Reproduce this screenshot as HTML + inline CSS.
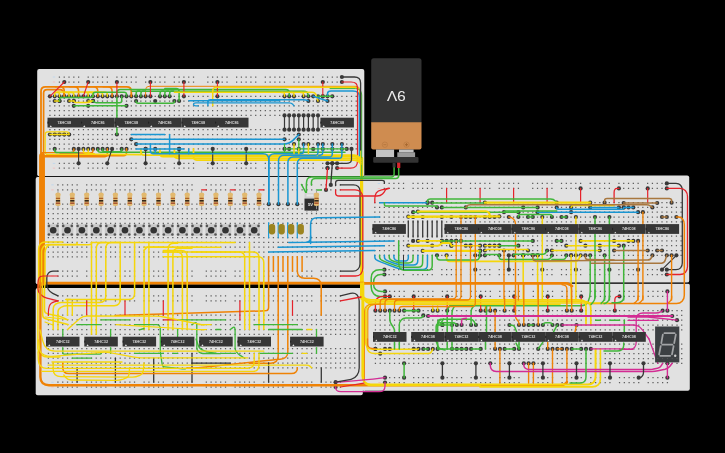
<!DOCTYPE html>
<html><head><meta charset="utf-8"><title>circuit</title>
<style>html,body{margin:0;padding:0;background:#000;}svg{display:block;font-family:"Liberation Sans",sans-serif;will-change:transform;}</style>
</head><body>
<svg width="725" height="453" viewBox="0 0 725 453">
<rect width="725" height="453" fill="#000"/>
<rect x="37.2" y="69.0" width="327.1" height="107.3" rx="2" fill="#e1e1e1"/>
<path d="M49.3,95.7h1.25v1.25h-1.25zM49.3,100.4h1.25v1.25h-1.25zM49.3,105.2h1.25v1.25h-1.25zM49.3,110.0h1.25v1.25h-1.25zM49.3,114.8h1.25v1.25h-1.25zM49.3,129.1h1.25v1.25h-1.25zM49.3,133.9h1.25v1.25h-1.25zM49.3,138.7h1.25v1.25h-1.25zM49.3,143.5h1.25v1.25h-1.25zM49.3,148.3h1.25v1.25h-1.25zM54.1,95.7h1.25v1.25h-1.25zM54.1,100.4h1.25v1.25h-1.25zM54.1,105.2h1.25v1.25h-1.25zM54.1,110.0h1.25v1.25h-1.25zM54.1,114.8h1.25v1.25h-1.25zM54.1,129.1h1.25v1.25h-1.25zM54.1,133.9h1.25v1.25h-1.25zM54.1,138.7h1.25v1.25h-1.25zM54.1,143.5h1.25v1.25h-1.25zM54.1,148.3h1.25v1.25h-1.25zM58.8,95.7h1.25v1.25h-1.25zM58.8,100.4h1.25v1.25h-1.25zM58.8,105.2h1.25v1.25h-1.25zM58.8,110.0h1.25v1.25h-1.25zM58.8,114.8h1.25v1.25h-1.25zM58.8,129.1h1.25v1.25h-1.25zM58.8,133.9h1.25v1.25h-1.25zM58.8,138.7h1.25v1.25h-1.25zM58.8,143.5h1.25v1.25h-1.25zM58.8,148.3h1.25v1.25h-1.25zM63.6,95.7h1.25v1.25h-1.25zM63.6,100.4h1.25v1.25h-1.25zM63.6,105.2h1.25v1.25h-1.25zM63.6,110.0h1.25v1.25h-1.25zM63.6,114.8h1.25v1.25h-1.25zM63.6,129.1h1.25v1.25h-1.25zM63.6,133.9h1.25v1.25h-1.25zM63.6,138.7h1.25v1.25h-1.25zM63.6,143.5h1.25v1.25h-1.25zM63.6,148.3h1.25v1.25h-1.25zM68.4,95.7h1.25v1.25h-1.25zM68.4,100.4h1.25v1.25h-1.25zM68.4,105.2h1.25v1.25h-1.25zM68.4,110.0h1.25v1.25h-1.25zM68.4,114.8h1.25v1.25h-1.25zM68.4,129.1h1.25v1.25h-1.25zM68.4,133.9h1.25v1.25h-1.25zM68.4,138.7h1.25v1.25h-1.25zM68.4,143.5h1.25v1.25h-1.25zM68.4,148.3h1.25v1.25h-1.25zM73.2,95.7h1.25v1.25h-1.25zM73.2,100.4h1.25v1.25h-1.25zM73.2,105.2h1.25v1.25h-1.25zM73.2,110.0h1.25v1.25h-1.25zM73.2,114.8h1.25v1.25h-1.25zM73.2,129.1h1.25v1.25h-1.25zM73.2,133.9h1.25v1.25h-1.25zM73.2,138.7h1.25v1.25h-1.25zM73.2,143.5h1.25v1.25h-1.25zM73.2,148.3h1.25v1.25h-1.25zM78.0,95.7h1.25v1.25h-1.25zM78.0,100.4h1.25v1.25h-1.25zM78.0,105.2h1.25v1.25h-1.25zM78.0,110.0h1.25v1.25h-1.25zM78.0,114.8h1.25v1.25h-1.25zM78.0,129.1h1.25v1.25h-1.25zM78.0,133.9h1.25v1.25h-1.25zM78.0,138.7h1.25v1.25h-1.25zM78.0,143.5h1.25v1.25h-1.25zM78.0,148.3h1.25v1.25h-1.25zM82.8,95.7h1.25v1.25h-1.25zM82.8,100.4h1.25v1.25h-1.25zM82.8,105.2h1.25v1.25h-1.25zM82.8,110.0h1.25v1.25h-1.25zM82.8,114.8h1.25v1.25h-1.25zM82.8,129.1h1.25v1.25h-1.25zM82.8,133.9h1.25v1.25h-1.25zM82.8,138.7h1.25v1.25h-1.25zM82.8,143.5h1.25v1.25h-1.25zM82.8,148.3h1.25v1.25h-1.25zM87.6,95.7h1.25v1.25h-1.25zM87.6,100.4h1.25v1.25h-1.25zM87.6,105.2h1.25v1.25h-1.25zM87.6,110.0h1.25v1.25h-1.25zM87.6,114.8h1.25v1.25h-1.25zM87.6,129.1h1.25v1.25h-1.25zM87.6,133.9h1.25v1.25h-1.25zM87.6,138.7h1.25v1.25h-1.25zM87.6,143.5h1.25v1.25h-1.25zM87.6,148.3h1.25v1.25h-1.25zM92.4,95.7h1.25v1.25h-1.25zM92.4,100.4h1.25v1.25h-1.25zM92.4,105.2h1.25v1.25h-1.25zM92.4,110.0h1.25v1.25h-1.25zM92.4,114.8h1.25v1.25h-1.25zM92.4,129.1h1.25v1.25h-1.25zM92.4,133.9h1.25v1.25h-1.25zM92.4,138.7h1.25v1.25h-1.25zM92.4,143.5h1.25v1.25h-1.25zM92.4,148.3h1.25v1.25h-1.25zM97.1,95.7h1.25v1.25h-1.25zM97.1,100.4h1.25v1.25h-1.25zM97.1,105.2h1.25v1.25h-1.25zM97.1,110.0h1.25v1.25h-1.25zM97.1,114.8h1.25v1.25h-1.25zM97.1,129.1h1.25v1.25h-1.25zM97.1,133.9h1.25v1.25h-1.25zM97.1,138.7h1.25v1.25h-1.25zM97.1,143.5h1.25v1.25h-1.25zM97.1,148.3h1.25v1.25h-1.25zM101.9,95.7h1.25v1.25h-1.25zM101.9,100.4h1.25v1.25h-1.25zM101.9,105.2h1.25v1.25h-1.25zM101.9,110.0h1.25v1.25h-1.25zM101.9,114.8h1.25v1.25h-1.25zM101.9,129.1h1.25v1.25h-1.25zM101.9,133.9h1.25v1.25h-1.25zM101.9,138.7h1.25v1.25h-1.25zM101.9,143.5h1.25v1.25h-1.25zM101.9,148.3h1.25v1.25h-1.25zM106.7,95.7h1.25v1.25h-1.25zM106.7,100.4h1.25v1.25h-1.25zM106.7,105.2h1.25v1.25h-1.25zM106.7,110.0h1.25v1.25h-1.25zM106.7,114.8h1.25v1.25h-1.25zM106.7,129.1h1.25v1.25h-1.25zM106.7,133.9h1.25v1.25h-1.25zM106.7,138.7h1.25v1.25h-1.25zM106.7,143.5h1.25v1.25h-1.25zM106.7,148.3h1.25v1.25h-1.25zM111.5,95.7h1.25v1.25h-1.25zM111.5,100.4h1.25v1.25h-1.25zM111.5,105.2h1.25v1.25h-1.25zM111.5,110.0h1.25v1.25h-1.25zM111.5,114.8h1.25v1.25h-1.25zM111.5,129.1h1.25v1.25h-1.25zM111.5,133.9h1.25v1.25h-1.25zM111.5,138.7h1.25v1.25h-1.25zM111.5,143.5h1.25v1.25h-1.25zM111.5,148.3h1.25v1.25h-1.25zM116.3,95.7h1.25v1.25h-1.25zM116.3,100.4h1.25v1.25h-1.25zM116.3,105.2h1.25v1.25h-1.25zM116.3,110.0h1.25v1.25h-1.25zM116.3,114.8h1.25v1.25h-1.25zM116.3,129.1h1.25v1.25h-1.25zM116.3,133.9h1.25v1.25h-1.25zM116.3,138.7h1.25v1.25h-1.25zM116.3,143.5h1.25v1.25h-1.25zM116.3,148.3h1.25v1.25h-1.25zM121.1,95.7h1.25v1.25h-1.25zM121.1,100.4h1.25v1.25h-1.25zM121.1,105.2h1.25v1.25h-1.25zM121.1,110.0h1.25v1.25h-1.25zM121.1,114.8h1.25v1.25h-1.25zM121.1,129.1h1.25v1.25h-1.25zM121.1,133.9h1.25v1.25h-1.25zM121.1,138.7h1.25v1.25h-1.25zM121.1,143.5h1.25v1.25h-1.25zM121.1,148.3h1.25v1.25h-1.25zM125.9,95.7h1.25v1.25h-1.25zM125.9,100.4h1.25v1.25h-1.25zM125.9,105.2h1.25v1.25h-1.25zM125.9,110.0h1.25v1.25h-1.25zM125.9,114.8h1.25v1.25h-1.25zM125.9,129.1h1.25v1.25h-1.25zM125.9,133.9h1.25v1.25h-1.25zM125.9,138.7h1.25v1.25h-1.25zM125.9,143.5h1.25v1.25h-1.25zM125.9,148.3h1.25v1.25h-1.25zM130.7,95.7h1.25v1.25h-1.25zM130.7,100.4h1.25v1.25h-1.25zM130.7,105.2h1.25v1.25h-1.25zM130.7,110.0h1.25v1.25h-1.25zM130.7,114.8h1.25v1.25h-1.25zM130.7,129.1h1.25v1.25h-1.25zM130.7,133.9h1.25v1.25h-1.25zM130.7,138.7h1.25v1.25h-1.25zM130.7,143.5h1.25v1.25h-1.25zM130.7,148.3h1.25v1.25h-1.25zM135.4,95.7h1.25v1.25h-1.25zM135.4,100.4h1.25v1.25h-1.25zM135.4,105.2h1.25v1.25h-1.25zM135.4,110.0h1.25v1.25h-1.25zM135.4,114.8h1.25v1.25h-1.25zM135.4,129.1h1.25v1.25h-1.25zM135.4,133.9h1.25v1.25h-1.25zM135.4,138.7h1.25v1.25h-1.25zM135.4,143.5h1.25v1.25h-1.25zM135.4,148.3h1.25v1.25h-1.25zM140.2,95.7h1.25v1.25h-1.25zM140.2,100.4h1.25v1.25h-1.25zM140.2,105.2h1.25v1.25h-1.25zM140.2,110.0h1.25v1.25h-1.25zM140.2,114.8h1.25v1.25h-1.25zM140.2,129.1h1.25v1.25h-1.25zM140.2,133.9h1.25v1.25h-1.25zM140.2,138.7h1.25v1.25h-1.25zM140.2,143.5h1.25v1.25h-1.25zM140.2,148.3h1.25v1.25h-1.25zM145.0,95.7h1.25v1.25h-1.25zM145.0,100.4h1.25v1.25h-1.25zM145.0,105.2h1.25v1.25h-1.25zM145.0,110.0h1.25v1.25h-1.25zM145.0,114.8h1.25v1.25h-1.25zM145.0,129.1h1.25v1.25h-1.25zM145.0,133.9h1.25v1.25h-1.25zM145.0,138.7h1.25v1.25h-1.25zM145.0,143.5h1.25v1.25h-1.25zM145.0,148.3h1.25v1.25h-1.25zM149.8,95.7h1.25v1.25h-1.25zM149.8,100.4h1.25v1.25h-1.25zM149.8,105.2h1.25v1.25h-1.25zM149.8,110.0h1.25v1.25h-1.25zM149.8,114.8h1.25v1.25h-1.25zM149.8,129.1h1.25v1.25h-1.25zM149.8,133.9h1.25v1.25h-1.25zM149.8,138.7h1.25v1.25h-1.25zM149.8,143.5h1.25v1.25h-1.25zM149.8,148.3h1.25v1.25h-1.25zM154.6,95.7h1.25v1.25h-1.25zM154.6,100.4h1.25v1.25h-1.25zM154.6,105.2h1.25v1.25h-1.25zM154.6,110.0h1.25v1.25h-1.25zM154.6,114.8h1.25v1.25h-1.25zM154.6,129.1h1.25v1.25h-1.25zM154.6,133.9h1.25v1.25h-1.25zM154.6,138.7h1.25v1.25h-1.25zM154.6,143.5h1.25v1.25h-1.25zM154.6,148.3h1.25v1.25h-1.25zM159.4,95.7h1.25v1.25h-1.25zM159.4,100.4h1.25v1.25h-1.25zM159.4,105.2h1.25v1.25h-1.25zM159.4,110.0h1.25v1.25h-1.25zM159.4,114.8h1.25v1.25h-1.25zM159.4,129.1h1.25v1.25h-1.25zM159.4,133.9h1.25v1.25h-1.25zM159.4,138.7h1.25v1.25h-1.25zM159.4,143.5h1.25v1.25h-1.25zM159.4,148.3h1.25v1.25h-1.25zM164.2,95.7h1.25v1.25h-1.25zM164.2,100.4h1.25v1.25h-1.25zM164.2,105.2h1.25v1.25h-1.25zM164.2,110.0h1.25v1.25h-1.25zM164.2,114.8h1.25v1.25h-1.25zM164.2,129.1h1.25v1.25h-1.25zM164.2,133.9h1.25v1.25h-1.25zM164.2,138.7h1.25v1.25h-1.25zM164.2,143.5h1.25v1.25h-1.25zM164.2,148.3h1.25v1.25h-1.25zM168.9,95.7h1.25v1.25h-1.25zM168.9,100.4h1.25v1.25h-1.25zM168.9,105.2h1.25v1.25h-1.25zM168.9,110.0h1.25v1.25h-1.25zM168.9,114.8h1.25v1.25h-1.25zM168.9,129.1h1.25v1.25h-1.25zM168.9,133.9h1.25v1.25h-1.25zM168.9,138.7h1.25v1.25h-1.25zM168.9,143.5h1.25v1.25h-1.25zM168.9,148.3h1.25v1.25h-1.25zM173.7,95.7h1.25v1.25h-1.25zM173.7,100.4h1.25v1.25h-1.25zM173.7,105.2h1.25v1.25h-1.25zM173.7,110.0h1.25v1.25h-1.25zM173.7,114.8h1.25v1.25h-1.25zM173.7,129.1h1.25v1.25h-1.25zM173.7,133.9h1.25v1.25h-1.25zM173.7,138.7h1.25v1.25h-1.25zM173.7,143.5h1.25v1.25h-1.25zM173.7,148.3h1.25v1.25h-1.25zM178.5,95.7h1.25v1.25h-1.25zM178.5,100.4h1.25v1.25h-1.25zM178.5,105.2h1.25v1.25h-1.25zM178.5,110.0h1.25v1.25h-1.25zM178.5,114.8h1.25v1.25h-1.25zM178.5,129.1h1.25v1.25h-1.25zM178.5,133.9h1.25v1.25h-1.25zM178.5,138.7h1.25v1.25h-1.25zM178.5,143.5h1.25v1.25h-1.25zM178.5,148.3h1.25v1.25h-1.25zM183.3,95.7h1.25v1.25h-1.25zM183.3,100.4h1.25v1.25h-1.25zM183.3,105.2h1.25v1.25h-1.25zM183.3,110.0h1.25v1.25h-1.25zM183.3,114.8h1.25v1.25h-1.25zM183.3,129.1h1.25v1.25h-1.25zM183.3,133.9h1.25v1.25h-1.25zM183.3,138.7h1.25v1.25h-1.25zM183.3,143.5h1.25v1.25h-1.25zM183.3,148.3h1.25v1.25h-1.25zM188.1,95.7h1.25v1.25h-1.25zM188.1,100.4h1.25v1.25h-1.25zM188.1,105.2h1.25v1.25h-1.25zM188.1,110.0h1.25v1.25h-1.25zM188.1,114.8h1.25v1.25h-1.25zM188.1,129.1h1.25v1.25h-1.25zM188.1,133.9h1.25v1.25h-1.25zM188.1,138.7h1.25v1.25h-1.25zM188.1,143.5h1.25v1.25h-1.25zM188.1,148.3h1.25v1.25h-1.25zM192.9,95.7h1.25v1.25h-1.25zM192.9,100.4h1.25v1.25h-1.25zM192.9,105.2h1.25v1.25h-1.25zM192.9,110.0h1.25v1.25h-1.25zM192.9,114.8h1.25v1.25h-1.25zM192.9,129.1h1.25v1.25h-1.25zM192.9,133.9h1.25v1.25h-1.25zM192.9,138.7h1.25v1.25h-1.25zM192.9,143.5h1.25v1.25h-1.25zM192.9,148.3h1.25v1.25h-1.25zM197.7,95.7h1.25v1.25h-1.25zM197.7,100.4h1.25v1.25h-1.25zM197.7,105.2h1.25v1.25h-1.25zM197.7,110.0h1.25v1.25h-1.25zM197.7,114.8h1.25v1.25h-1.25zM197.7,129.1h1.25v1.25h-1.25zM197.7,133.9h1.25v1.25h-1.25zM197.7,138.7h1.25v1.25h-1.25zM197.7,143.5h1.25v1.25h-1.25zM197.7,148.3h1.25v1.25h-1.25zM202.5,95.7h1.25v1.25h-1.25zM202.5,100.4h1.25v1.25h-1.25zM202.5,105.2h1.25v1.25h-1.25zM202.5,110.0h1.25v1.25h-1.25zM202.5,114.8h1.25v1.25h-1.25zM202.5,129.1h1.25v1.25h-1.25zM202.5,133.9h1.25v1.25h-1.25zM202.5,138.7h1.25v1.25h-1.25zM202.5,143.5h1.25v1.25h-1.25zM202.5,148.3h1.25v1.25h-1.25zM207.2,95.7h1.25v1.25h-1.25zM207.2,100.4h1.25v1.25h-1.25zM207.2,105.2h1.25v1.25h-1.25zM207.2,110.0h1.25v1.25h-1.25zM207.2,114.8h1.25v1.25h-1.25zM207.2,129.1h1.25v1.25h-1.25zM207.2,133.9h1.25v1.25h-1.25zM207.2,138.7h1.25v1.25h-1.25zM207.2,143.5h1.25v1.25h-1.25zM207.2,148.3h1.25v1.25h-1.25zM212.0,95.7h1.25v1.25h-1.25zM212.0,100.4h1.25v1.25h-1.25zM212.0,105.2h1.25v1.25h-1.25zM212.0,110.0h1.25v1.25h-1.25zM212.0,114.8h1.25v1.25h-1.25zM212.0,129.1h1.25v1.25h-1.25zM212.0,133.9h1.25v1.25h-1.25zM212.0,138.7h1.25v1.25h-1.25zM212.0,143.5h1.25v1.25h-1.25zM212.0,148.3h1.25v1.25h-1.25zM216.8,95.7h1.25v1.25h-1.25zM216.8,100.4h1.25v1.25h-1.25zM216.8,105.2h1.25v1.25h-1.25zM216.8,110.0h1.25v1.25h-1.25zM216.8,114.8h1.25v1.25h-1.25zM216.8,129.1h1.25v1.25h-1.25zM216.8,133.9h1.25v1.25h-1.25zM216.8,138.7h1.25v1.25h-1.25zM216.8,143.5h1.25v1.25h-1.25zM216.8,148.3h1.25v1.25h-1.25zM221.6,95.7h1.25v1.25h-1.25zM221.6,100.4h1.25v1.25h-1.25zM221.6,105.2h1.25v1.25h-1.25zM221.6,110.0h1.25v1.25h-1.25zM221.6,114.8h1.25v1.25h-1.25zM221.6,129.1h1.25v1.25h-1.25zM221.6,133.9h1.25v1.25h-1.25zM221.6,138.7h1.25v1.25h-1.25zM221.6,143.5h1.25v1.25h-1.25zM221.6,148.3h1.25v1.25h-1.25zM226.4,95.7h1.25v1.25h-1.25zM226.4,100.4h1.25v1.25h-1.25zM226.4,105.2h1.25v1.25h-1.25zM226.4,110.0h1.25v1.25h-1.25zM226.4,114.8h1.25v1.25h-1.25zM226.4,129.1h1.25v1.25h-1.25zM226.4,133.9h1.25v1.25h-1.25zM226.4,138.7h1.25v1.25h-1.25zM226.4,143.5h1.25v1.25h-1.25zM226.4,148.3h1.25v1.25h-1.25zM231.2,95.7h1.25v1.25h-1.25zM231.2,100.4h1.25v1.25h-1.25zM231.2,105.2h1.25v1.25h-1.25zM231.2,110.0h1.25v1.25h-1.25zM231.2,114.8h1.25v1.25h-1.25zM231.2,129.1h1.25v1.25h-1.25zM231.2,133.9h1.25v1.25h-1.25zM231.2,138.7h1.25v1.25h-1.25zM231.2,143.5h1.25v1.25h-1.25zM231.2,148.3h1.25v1.25h-1.25zM236.0,95.7h1.25v1.25h-1.25zM236.0,100.4h1.25v1.25h-1.25zM236.0,105.2h1.25v1.25h-1.25zM236.0,110.0h1.25v1.25h-1.25zM236.0,114.8h1.25v1.25h-1.25zM236.0,129.1h1.25v1.25h-1.25zM236.0,133.9h1.25v1.25h-1.25zM236.0,138.7h1.25v1.25h-1.25zM236.0,143.5h1.25v1.25h-1.25zM236.0,148.3h1.25v1.25h-1.25zM240.8,95.7h1.25v1.25h-1.25zM240.8,100.4h1.25v1.25h-1.25zM240.8,105.2h1.25v1.25h-1.25zM240.8,110.0h1.25v1.25h-1.25zM240.8,114.8h1.25v1.25h-1.25zM240.8,129.1h1.25v1.25h-1.25zM240.8,133.9h1.25v1.25h-1.25zM240.8,138.7h1.25v1.25h-1.25zM240.8,143.5h1.25v1.25h-1.25zM240.8,148.3h1.25v1.25h-1.25zM245.5,95.7h1.25v1.25h-1.25zM245.5,100.4h1.25v1.25h-1.25zM245.5,105.2h1.25v1.25h-1.25zM245.5,110.0h1.25v1.25h-1.25zM245.5,114.8h1.25v1.25h-1.25zM245.5,129.1h1.25v1.25h-1.25zM245.5,133.9h1.25v1.25h-1.25zM245.5,138.7h1.25v1.25h-1.25zM245.5,143.5h1.25v1.25h-1.25zM245.5,148.3h1.25v1.25h-1.25zM250.3,95.7h1.25v1.25h-1.25zM250.3,100.4h1.25v1.25h-1.25zM250.3,105.2h1.25v1.25h-1.25zM250.3,110.0h1.25v1.25h-1.25zM250.3,114.8h1.25v1.25h-1.25zM250.3,129.1h1.25v1.25h-1.25zM250.3,133.9h1.25v1.25h-1.25zM250.3,138.7h1.25v1.25h-1.25zM250.3,143.5h1.25v1.25h-1.25zM250.3,148.3h1.25v1.25h-1.25zM255.1,95.7h1.25v1.25h-1.25zM255.1,100.4h1.25v1.25h-1.25zM255.1,105.2h1.25v1.25h-1.25zM255.1,110.0h1.25v1.25h-1.25zM255.1,114.8h1.25v1.25h-1.25zM255.1,129.1h1.25v1.25h-1.25zM255.1,133.9h1.25v1.25h-1.25zM255.1,138.7h1.25v1.25h-1.25zM255.1,143.5h1.25v1.25h-1.25zM255.1,148.3h1.25v1.25h-1.25zM259.9,95.7h1.25v1.25h-1.25zM259.9,100.4h1.25v1.25h-1.25zM259.9,105.2h1.25v1.25h-1.25zM259.9,110.0h1.25v1.25h-1.25zM259.9,114.8h1.25v1.25h-1.25zM259.9,129.1h1.25v1.25h-1.25zM259.9,133.9h1.25v1.25h-1.25zM259.9,138.7h1.25v1.25h-1.25zM259.9,143.5h1.25v1.25h-1.25zM259.9,148.3h1.25v1.25h-1.25zM264.7,95.7h1.25v1.25h-1.25zM264.7,100.4h1.25v1.25h-1.25zM264.7,105.2h1.25v1.25h-1.25zM264.7,110.0h1.25v1.25h-1.25zM264.7,114.8h1.25v1.25h-1.25zM264.7,129.1h1.25v1.25h-1.25zM264.7,133.9h1.25v1.25h-1.25zM264.7,138.7h1.25v1.25h-1.25zM264.7,143.5h1.25v1.25h-1.25zM264.7,148.3h1.25v1.25h-1.25zM269.5,95.7h1.25v1.25h-1.25zM269.5,100.4h1.25v1.25h-1.25zM269.5,105.2h1.25v1.25h-1.25zM269.5,110.0h1.25v1.25h-1.25zM269.5,114.8h1.25v1.25h-1.25zM269.5,129.1h1.25v1.25h-1.25zM269.5,133.9h1.25v1.25h-1.25zM269.5,138.7h1.25v1.25h-1.25zM269.5,143.5h1.25v1.25h-1.25zM269.5,148.3h1.25v1.25h-1.25zM274.3,95.7h1.25v1.25h-1.25zM274.3,100.4h1.25v1.25h-1.25zM274.3,105.2h1.25v1.25h-1.25zM274.3,110.0h1.25v1.25h-1.25zM274.3,114.8h1.25v1.25h-1.25zM274.3,129.1h1.25v1.25h-1.25zM274.3,133.9h1.25v1.25h-1.25zM274.3,138.7h1.25v1.25h-1.25zM274.3,143.5h1.25v1.25h-1.25zM274.3,148.3h1.25v1.25h-1.25zM279.1,95.7h1.25v1.25h-1.25zM279.1,100.4h1.25v1.25h-1.25zM279.1,105.2h1.25v1.25h-1.25zM279.1,110.0h1.25v1.25h-1.25zM279.1,114.8h1.25v1.25h-1.25zM279.1,129.1h1.25v1.25h-1.25zM279.1,133.9h1.25v1.25h-1.25zM279.1,138.7h1.25v1.25h-1.25zM279.1,143.5h1.25v1.25h-1.25zM279.1,148.3h1.25v1.25h-1.25zM283.8,95.7h1.25v1.25h-1.25zM283.8,100.4h1.25v1.25h-1.25zM283.8,105.2h1.25v1.25h-1.25zM283.8,110.0h1.25v1.25h-1.25zM283.8,114.8h1.25v1.25h-1.25zM283.8,129.1h1.25v1.25h-1.25zM283.8,133.9h1.25v1.25h-1.25zM283.8,138.7h1.25v1.25h-1.25zM283.8,143.5h1.25v1.25h-1.25zM283.8,148.3h1.25v1.25h-1.25zM288.6,95.7h1.25v1.25h-1.25zM288.6,100.4h1.25v1.25h-1.25zM288.6,105.2h1.25v1.25h-1.25zM288.6,110.0h1.25v1.25h-1.25zM288.6,114.8h1.25v1.25h-1.25zM288.6,129.1h1.25v1.25h-1.25zM288.6,133.9h1.25v1.25h-1.25zM288.6,138.7h1.25v1.25h-1.25zM288.6,143.5h1.25v1.25h-1.25zM288.6,148.3h1.25v1.25h-1.25zM293.4,95.7h1.25v1.25h-1.25zM293.4,100.4h1.25v1.25h-1.25zM293.4,105.2h1.25v1.25h-1.25zM293.4,110.0h1.25v1.25h-1.25zM293.4,114.8h1.25v1.25h-1.25zM293.4,129.1h1.25v1.25h-1.25zM293.4,133.9h1.25v1.25h-1.25zM293.4,138.7h1.25v1.25h-1.25zM293.4,143.5h1.25v1.25h-1.25zM293.4,148.3h1.25v1.25h-1.25zM298.2,95.7h1.25v1.25h-1.25zM298.2,100.4h1.25v1.25h-1.25zM298.2,105.2h1.25v1.25h-1.25zM298.2,110.0h1.25v1.25h-1.25zM298.2,114.8h1.25v1.25h-1.25zM298.2,129.1h1.25v1.25h-1.25zM298.2,133.9h1.25v1.25h-1.25zM298.2,138.7h1.25v1.25h-1.25zM298.2,143.5h1.25v1.25h-1.25zM298.2,148.3h1.25v1.25h-1.25zM303.0,95.7h1.25v1.25h-1.25zM303.0,100.4h1.25v1.25h-1.25zM303.0,105.2h1.25v1.25h-1.25zM303.0,110.0h1.25v1.25h-1.25zM303.0,114.8h1.25v1.25h-1.25zM303.0,129.1h1.25v1.25h-1.25zM303.0,133.9h1.25v1.25h-1.25zM303.0,138.7h1.25v1.25h-1.25zM303.0,143.5h1.25v1.25h-1.25zM303.0,148.3h1.25v1.25h-1.25zM307.8,95.7h1.25v1.25h-1.25zM307.8,100.4h1.25v1.25h-1.25zM307.8,105.2h1.25v1.25h-1.25zM307.8,110.0h1.25v1.25h-1.25zM307.8,114.8h1.25v1.25h-1.25zM307.8,129.1h1.25v1.25h-1.25zM307.8,133.9h1.25v1.25h-1.25zM307.8,138.7h1.25v1.25h-1.25zM307.8,143.5h1.25v1.25h-1.25zM307.8,148.3h1.25v1.25h-1.25zM312.6,95.7h1.25v1.25h-1.25zM312.6,100.4h1.25v1.25h-1.25zM312.6,105.2h1.25v1.25h-1.25zM312.6,110.0h1.25v1.25h-1.25zM312.6,114.8h1.25v1.25h-1.25zM312.6,129.1h1.25v1.25h-1.25zM312.6,133.9h1.25v1.25h-1.25zM312.6,138.7h1.25v1.25h-1.25zM312.6,143.5h1.25v1.25h-1.25zM312.6,148.3h1.25v1.25h-1.25zM317.3,95.7h1.25v1.25h-1.25zM317.3,100.4h1.25v1.25h-1.25zM317.3,105.2h1.25v1.25h-1.25zM317.3,110.0h1.25v1.25h-1.25zM317.3,114.8h1.25v1.25h-1.25zM317.3,129.1h1.25v1.25h-1.25zM317.3,133.9h1.25v1.25h-1.25zM317.3,138.7h1.25v1.25h-1.25zM317.3,143.5h1.25v1.25h-1.25zM317.3,148.3h1.25v1.25h-1.25zM322.1,95.7h1.25v1.25h-1.25zM322.1,100.4h1.25v1.25h-1.25zM322.1,105.2h1.25v1.25h-1.25zM322.1,110.0h1.25v1.25h-1.25zM322.1,114.8h1.25v1.25h-1.25zM322.1,129.1h1.25v1.25h-1.25zM322.1,133.9h1.25v1.25h-1.25zM322.1,138.7h1.25v1.25h-1.25zM322.1,143.5h1.25v1.25h-1.25zM322.1,148.3h1.25v1.25h-1.25zM326.9,95.7h1.25v1.25h-1.25zM326.9,100.4h1.25v1.25h-1.25zM326.9,105.2h1.25v1.25h-1.25zM326.9,110.0h1.25v1.25h-1.25zM326.9,114.8h1.25v1.25h-1.25zM326.9,129.1h1.25v1.25h-1.25zM326.9,133.9h1.25v1.25h-1.25zM326.9,138.7h1.25v1.25h-1.25zM326.9,143.5h1.25v1.25h-1.25zM326.9,148.3h1.25v1.25h-1.25zM331.7,95.7h1.25v1.25h-1.25zM331.7,100.4h1.25v1.25h-1.25zM331.7,105.2h1.25v1.25h-1.25zM331.7,110.0h1.25v1.25h-1.25zM331.7,114.8h1.25v1.25h-1.25zM331.7,129.1h1.25v1.25h-1.25zM331.7,133.9h1.25v1.25h-1.25zM331.7,138.7h1.25v1.25h-1.25zM331.7,143.5h1.25v1.25h-1.25zM331.7,148.3h1.25v1.25h-1.25zM336.5,95.7h1.25v1.25h-1.25zM336.5,100.4h1.25v1.25h-1.25zM336.5,105.2h1.25v1.25h-1.25zM336.5,110.0h1.25v1.25h-1.25zM336.5,114.8h1.25v1.25h-1.25zM336.5,129.1h1.25v1.25h-1.25zM336.5,133.9h1.25v1.25h-1.25zM336.5,138.7h1.25v1.25h-1.25zM336.5,143.5h1.25v1.25h-1.25zM336.5,148.3h1.25v1.25h-1.25zM341.3,95.7h1.25v1.25h-1.25zM341.3,100.4h1.25v1.25h-1.25zM341.3,105.2h1.25v1.25h-1.25zM341.3,110.0h1.25v1.25h-1.25zM341.3,114.8h1.25v1.25h-1.25zM341.3,129.1h1.25v1.25h-1.25zM341.3,133.9h1.25v1.25h-1.25zM341.3,138.7h1.25v1.25h-1.25zM341.3,143.5h1.25v1.25h-1.25zM341.3,148.3h1.25v1.25h-1.25zM346.1,95.7h1.25v1.25h-1.25zM346.1,100.4h1.25v1.25h-1.25zM346.1,105.2h1.25v1.25h-1.25zM346.1,110.0h1.25v1.25h-1.25zM346.1,114.8h1.25v1.25h-1.25zM346.1,129.1h1.25v1.25h-1.25zM346.1,133.9h1.25v1.25h-1.25zM346.1,138.7h1.25v1.25h-1.25zM346.1,143.5h1.25v1.25h-1.25zM346.1,148.3h1.25v1.25h-1.25zM350.9,95.7h1.25v1.25h-1.25zM350.9,100.4h1.25v1.25h-1.25zM350.9,105.2h1.25v1.25h-1.25zM350.9,110.0h1.25v1.25h-1.25zM350.9,114.8h1.25v1.25h-1.25zM350.9,129.1h1.25v1.25h-1.25zM350.9,133.9h1.25v1.25h-1.25zM350.9,138.7h1.25v1.25h-1.25zM350.9,143.5h1.25v1.25h-1.25zM350.9,148.3h1.25v1.25h-1.25zM355.6,95.7h1.25v1.25h-1.25zM355.6,100.4h1.25v1.25h-1.25zM355.6,105.2h1.25v1.25h-1.25zM355.6,110.0h1.25v1.25h-1.25zM355.6,114.8h1.25v1.25h-1.25zM355.6,129.1h1.25v1.25h-1.25zM355.6,133.9h1.25v1.25h-1.25zM355.6,138.7h1.25v1.25h-1.25zM355.6,143.5h1.25v1.25h-1.25zM355.6,148.3h1.25v1.25h-1.25zM58.8,76.4h1.25v1.25h-1.25zM58.8,81.4h1.25v1.25h-1.25zM58.8,162.7h1.25v1.25h-1.25zM58.8,167.5h1.25v1.25h-1.25zM63.6,76.4h1.25v1.25h-1.25zM63.6,81.4h1.25v1.25h-1.25zM63.6,162.7h1.25v1.25h-1.25zM63.6,167.5h1.25v1.25h-1.25zM68.4,76.4h1.25v1.25h-1.25zM68.4,81.4h1.25v1.25h-1.25zM68.4,162.7h1.25v1.25h-1.25zM68.4,167.5h1.25v1.25h-1.25zM73.2,76.4h1.25v1.25h-1.25zM73.2,81.4h1.25v1.25h-1.25zM73.2,162.7h1.25v1.25h-1.25zM73.2,167.5h1.25v1.25h-1.25zM78.0,76.4h1.25v1.25h-1.25zM78.0,81.4h1.25v1.25h-1.25zM78.0,162.7h1.25v1.25h-1.25zM78.0,167.5h1.25v1.25h-1.25zM87.6,76.4h1.25v1.25h-1.25zM87.6,81.4h1.25v1.25h-1.25zM87.6,162.7h1.25v1.25h-1.25zM87.6,167.5h1.25v1.25h-1.25zM92.4,76.4h1.25v1.25h-1.25zM92.4,81.4h1.25v1.25h-1.25zM92.4,162.7h1.25v1.25h-1.25zM92.4,167.5h1.25v1.25h-1.25zM97.1,76.4h1.25v1.25h-1.25zM97.1,81.4h1.25v1.25h-1.25zM97.1,162.7h1.25v1.25h-1.25zM97.1,167.5h1.25v1.25h-1.25zM101.9,76.4h1.25v1.25h-1.25zM101.9,81.4h1.25v1.25h-1.25zM101.9,162.7h1.25v1.25h-1.25zM101.9,167.5h1.25v1.25h-1.25zM106.7,76.4h1.25v1.25h-1.25zM106.7,81.4h1.25v1.25h-1.25zM106.7,162.7h1.25v1.25h-1.25zM106.7,167.5h1.25v1.25h-1.25zM116.3,76.4h1.25v1.25h-1.25zM116.3,81.4h1.25v1.25h-1.25zM116.3,162.7h1.25v1.25h-1.25zM116.3,167.5h1.25v1.25h-1.25zM121.1,76.4h1.25v1.25h-1.25zM121.1,81.4h1.25v1.25h-1.25zM121.1,162.7h1.25v1.25h-1.25zM121.1,167.5h1.25v1.25h-1.25zM125.9,76.4h1.25v1.25h-1.25zM125.9,81.4h1.25v1.25h-1.25zM125.9,162.7h1.25v1.25h-1.25zM125.9,167.5h1.25v1.25h-1.25zM130.7,76.4h1.25v1.25h-1.25zM130.7,81.4h1.25v1.25h-1.25zM130.7,162.7h1.25v1.25h-1.25zM130.7,167.5h1.25v1.25h-1.25zM135.4,76.4h1.25v1.25h-1.25zM135.4,81.4h1.25v1.25h-1.25zM135.4,162.7h1.25v1.25h-1.25zM135.4,167.5h1.25v1.25h-1.25zM145.0,76.4h1.25v1.25h-1.25zM145.0,81.4h1.25v1.25h-1.25zM145.0,162.7h1.25v1.25h-1.25zM145.0,167.5h1.25v1.25h-1.25zM149.8,76.4h1.25v1.25h-1.25zM149.8,81.4h1.25v1.25h-1.25zM149.8,162.7h1.25v1.25h-1.25zM149.8,167.5h1.25v1.25h-1.25zM154.6,76.4h1.25v1.25h-1.25zM154.6,81.4h1.25v1.25h-1.25zM154.6,162.7h1.25v1.25h-1.25zM154.6,167.5h1.25v1.25h-1.25zM159.4,76.4h1.25v1.25h-1.25zM159.4,81.4h1.25v1.25h-1.25zM159.4,162.7h1.25v1.25h-1.25zM159.4,167.5h1.25v1.25h-1.25zM164.2,76.4h1.25v1.25h-1.25zM164.2,81.4h1.25v1.25h-1.25zM164.2,162.7h1.25v1.25h-1.25zM164.2,167.5h1.25v1.25h-1.25zM173.7,76.4h1.25v1.25h-1.25zM173.7,81.4h1.25v1.25h-1.25zM173.7,162.7h1.25v1.25h-1.25zM173.7,167.5h1.25v1.25h-1.25zM178.5,76.4h1.25v1.25h-1.25zM178.5,81.4h1.25v1.25h-1.25zM178.5,162.7h1.25v1.25h-1.25zM178.5,167.5h1.25v1.25h-1.25zM183.3,76.4h1.25v1.25h-1.25zM183.3,81.4h1.25v1.25h-1.25zM183.3,162.7h1.25v1.25h-1.25zM183.3,167.5h1.25v1.25h-1.25zM188.1,76.4h1.25v1.25h-1.25zM188.1,81.4h1.25v1.25h-1.25zM188.1,162.7h1.25v1.25h-1.25zM188.1,167.5h1.25v1.25h-1.25zM192.9,76.4h1.25v1.25h-1.25zM192.9,81.4h1.25v1.25h-1.25zM192.9,162.7h1.25v1.25h-1.25zM192.9,167.5h1.25v1.25h-1.25zM207.2,76.4h1.25v1.25h-1.25zM207.2,81.4h1.25v1.25h-1.25zM207.2,162.7h1.25v1.25h-1.25zM207.2,167.5h1.25v1.25h-1.25zM212.0,76.4h1.25v1.25h-1.25zM212.0,81.4h1.25v1.25h-1.25zM212.0,162.7h1.25v1.25h-1.25zM212.0,167.5h1.25v1.25h-1.25zM216.8,76.4h1.25v1.25h-1.25zM216.8,81.4h1.25v1.25h-1.25zM216.8,162.7h1.25v1.25h-1.25zM216.8,167.5h1.25v1.25h-1.25zM221.6,76.4h1.25v1.25h-1.25zM221.6,81.4h1.25v1.25h-1.25zM221.6,162.7h1.25v1.25h-1.25zM221.6,167.5h1.25v1.25h-1.25zM226.4,76.4h1.25v1.25h-1.25zM226.4,81.4h1.25v1.25h-1.25zM226.4,162.7h1.25v1.25h-1.25zM226.4,167.5h1.25v1.25h-1.25zM236.0,76.4h1.25v1.25h-1.25zM236.0,81.4h1.25v1.25h-1.25zM236.0,162.7h1.25v1.25h-1.25zM236.0,167.5h1.25v1.25h-1.25zM240.8,76.4h1.25v1.25h-1.25zM240.8,81.4h1.25v1.25h-1.25zM240.8,162.7h1.25v1.25h-1.25zM240.8,167.5h1.25v1.25h-1.25zM245.5,76.4h1.25v1.25h-1.25zM245.5,81.4h1.25v1.25h-1.25zM245.5,162.7h1.25v1.25h-1.25zM245.5,167.5h1.25v1.25h-1.25zM250.3,76.4h1.25v1.25h-1.25zM250.3,81.4h1.25v1.25h-1.25zM250.3,162.7h1.25v1.25h-1.25zM250.3,167.5h1.25v1.25h-1.25zM255.1,76.4h1.25v1.25h-1.25zM255.1,81.4h1.25v1.25h-1.25zM255.1,162.7h1.25v1.25h-1.25zM255.1,167.5h1.25v1.25h-1.25zM264.7,76.4h1.25v1.25h-1.25zM264.7,81.4h1.25v1.25h-1.25zM264.7,162.7h1.25v1.25h-1.25zM264.7,167.5h1.25v1.25h-1.25zM269.5,76.4h1.25v1.25h-1.25zM269.5,81.4h1.25v1.25h-1.25zM269.5,162.7h1.25v1.25h-1.25zM269.5,167.5h1.25v1.25h-1.25zM274.3,76.4h1.25v1.25h-1.25zM274.3,81.4h1.25v1.25h-1.25zM274.3,162.7h1.25v1.25h-1.25zM274.3,167.5h1.25v1.25h-1.25zM279.1,76.4h1.25v1.25h-1.25zM279.1,81.4h1.25v1.25h-1.25zM279.1,162.7h1.25v1.25h-1.25zM279.1,167.5h1.25v1.25h-1.25zM283.8,76.4h1.25v1.25h-1.25zM283.8,81.4h1.25v1.25h-1.25zM283.8,162.7h1.25v1.25h-1.25zM283.8,167.5h1.25v1.25h-1.25zM293.4,76.4h1.25v1.25h-1.25zM293.4,81.4h1.25v1.25h-1.25zM293.4,162.7h1.25v1.25h-1.25zM293.4,167.5h1.25v1.25h-1.25zM298.2,76.4h1.25v1.25h-1.25zM298.2,81.4h1.25v1.25h-1.25zM298.2,162.7h1.25v1.25h-1.25zM298.2,167.5h1.25v1.25h-1.25zM303.0,76.4h1.25v1.25h-1.25zM303.0,81.4h1.25v1.25h-1.25zM303.0,162.7h1.25v1.25h-1.25zM303.0,167.5h1.25v1.25h-1.25zM307.8,76.4h1.25v1.25h-1.25zM307.8,81.4h1.25v1.25h-1.25zM307.8,162.7h1.25v1.25h-1.25zM307.8,167.5h1.25v1.25h-1.25zM312.6,76.4h1.25v1.25h-1.25zM312.6,81.4h1.25v1.25h-1.25zM312.6,162.7h1.25v1.25h-1.25zM312.6,167.5h1.25v1.25h-1.25zM322.1,76.4h1.25v1.25h-1.25zM322.1,81.4h1.25v1.25h-1.25zM322.1,162.7h1.25v1.25h-1.25zM322.1,167.5h1.25v1.25h-1.25zM326.9,76.4h1.25v1.25h-1.25zM326.9,81.4h1.25v1.25h-1.25zM326.9,162.7h1.25v1.25h-1.25zM326.9,167.5h1.25v1.25h-1.25zM331.7,76.4h1.25v1.25h-1.25zM331.7,81.4h1.25v1.25h-1.25zM331.7,162.7h1.25v1.25h-1.25zM331.7,167.5h1.25v1.25h-1.25zM336.5,76.4h1.25v1.25h-1.25zM336.5,81.4h1.25v1.25h-1.25zM336.5,162.7h1.25v1.25h-1.25zM336.5,167.5h1.25v1.25h-1.25zM341.3,76.4h1.25v1.25h-1.25zM341.3,81.4h1.25v1.25h-1.25zM341.3,162.7h1.25v1.25h-1.25zM341.3,167.5h1.25v1.25h-1.25z" fill="#5c5c5c"/>
<rect x="52.8" y="76.6" width="2.4" height="0.8" fill="#b8d4ee"/>
<rect x="52.8" y="81.6" width="2.4" height="0.8" fill="#f2b8b8"/>
<rect x="52.8" y="162.9" width="2.4" height="0.8" fill="#b8d4ee"/>
<rect x="52.8" y="167.7" width="2.4" height="0.8" fill="#f2b8b8"/>
<rect x="35.7" y="176.9" width="327.1" height="107.3" rx="2" fill="#e1e1e1"/>
<path d="M47.8,203.6h1.25v1.25h-1.25zM47.8,208.3h1.25v1.25h-1.25zM47.8,213.1h1.25v1.25h-1.25zM47.8,217.9h1.25v1.25h-1.25zM47.8,222.7h1.25v1.25h-1.25zM47.8,237.0h1.25v1.25h-1.25zM47.8,241.8h1.25v1.25h-1.25zM47.8,246.6h1.25v1.25h-1.25zM47.8,251.4h1.25v1.25h-1.25zM47.8,256.2h1.25v1.25h-1.25zM52.6,203.6h1.25v1.25h-1.25zM52.6,208.3h1.25v1.25h-1.25zM52.6,213.1h1.25v1.25h-1.25zM52.6,217.9h1.25v1.25h-1.25zM52.6,222.7h1.25v1.25h-1.25zM52.6,237.0h1.25v1.25h-1.25zM52.6,241.8h1.25v1.25h-1.25zM52.6,246.6h1.25v1.25h-1.25zM52.6,251.4h1.25v1.25h-1.25zM52.6,256.2h1.25v1.25h-1.25zM57.3,203.6h1.25v1.25h-1.25zM57.3,208.3h1.25v1.25h-1.25zM57.3,213.1h1.25v1.25h-1.25zM57.3,217.9h1.25v1.25h-1.25zM57.3,222.7h1.25v1.25h-1.25zM57.3,237.0h1.25v1.25h-1.25zM57.3,241.8h1.25v1.25h-1.25zM57.3,246.6h1.25v1.25h-1.25zM57.3,251.4h1.25v1.25h-1.25zM57.3,256.2h1.25v1.25h-1.25zM62.1,203.6h1.25v1.25h-1.25zM62.1,208.3h1.25v1.25h-1.25zM62.1,213.1h1.25v1.25h-1.25zM62.1,217.9h1.25v1.25h-1.25zM62.1,222.7h1.25v1.25h-1.25zM62.1,237.0h1.25v1.25h-1.25zM62.1,241.8h1.25v1.25h-1.25zM62.1,246.6h1.25v1.25h-1.25zM62.1,251.4h1.25v1.25h-1.25zM62.1,256.2h1.25v1.25h-1.25zM66.9,203.6h1.25v1.25h-1.25zM66.9,208.3h1.25v1.25h-1.25zM66.9,213.1h1.25v1.25h-1.25zM66.9,217.9h1.25v1.25h-1.25zM66.9,222.7h1.25v1.25h-1.25zM66.9,237.0h1.25v1.25h-1.25zM66.9,241.8h1.25v1.25h-1.25zM66.9,246.6h1.25v1.25h-1.25zM66.9,251.4h1.25v1.25h-1.25zM66.9,256.2h1.25v1.25h-1.25zM71.7,203.6h1.25v1.25h-1.25zM71.7,208.3h1.25v1.25h-1.25zM71.7,213.1h1.25v1.25h-1.25zM71.7,217.9h1.25v1.25h-1.25zM71.7,222.7h1.25v1.25h-1.25zM71.7,237.0h1.25v1.25h-1.25zM71.7,241.8h1.25v1.25h-1.25zM71.7,246.6h1.25v1.25h-1.25zM71.7,251.4h1.25v1.25h-1.25zM71.7,256.2h1.25v1.25h-1.25zM76.5,203.6h1.25v1.25h-1.25zM76.5,208.3h1.25v1.25h-1.25zM76.5,213.1h1.25v1.25h-1.25zM76.5,217.9h1.25v1.25h-1.25zM76.5,222.7h1.25v1.25h-1.25zM76.5,237.0h1.25v1.25h-1.25zM76.5,241.8h1.25v1.25h-1.25zM76.5,246.6h1.25v1.25h-1.25zM76.5,251.4h1.25v1.25h-1.25zM76.5,256.2h1.25v1.25h-1.25zM81.3,203.6h1.25v1.25h-1.25zM81.3,208.3h1.25v1.25h-1.25zM81.3,213.1h1.25v1.25h-1.25zM81.3,217.9h1.25v1.25h-1.25zM81.3,222.7h1.25v1.25h-1.25zM81.3,237.0h1.25v1.25h-1.25zM81.3,241.8h1.25v1.25h-1.25zM81.3,246.6h1.25v1.25h-1.25zM81.3,251.4h1.25v1.25h-1.25zM81.3,256.2h1.25v1.25h-1.25zM86.1,203.6h1.25v1.25h-1.25zM86.1,208.3h1.25v1.25h-1.25zM86.1,213.1h1.25v1.25h-1.25zM86.1,217.9h1.25v1.25h-1.25zM86.1,222.7h1.25v1.25h-1.25zM86.1,237.0h1.25v1.25h-1.25zM86.1,241.8h1.25v1.25h-1.25zM86.1,246.6h1.25v1.25h-1.25zM86.1,251.4h1.25v1.25h-1.25zM86.1,256.2h1.25v1.25h-1.25zM90.9,203.6h1.25v1.25h-1.25zM90.9,208.3h1.25v1.25h-1.25zM90.9,213.1h1.25v1.25h-1.25zM90.9,217.9h1.25v1.25h-1.25zM90.9,222.7h1.25v1.25h-1.25zM90.9,237.0h1.25v1.25h-1.25zM90.9,241.8h1.25v1.25h-1.25zM90.9,246.6h1.25v1.25h-1.25zM90.9,251.4h1.25v1.25h-1.25zM90.9,256.2h1.25v1.25h-1.25zM95.6,203.6h1.25v1.25h-1.25zM95.6,208.3h1.25v1.25h-1.25zM95.6,213.1h1.25v1.25h-1.25zM95.6,217.9h1.25v1.25h-1.25zM95.6,222.7h1.25v1.25h-1.25zM95.6,237.0h1.25v1.25h-1.25zM95.6,241.8h1.25v1.25h-1.25zM95.6,246.6h1.25v1.25h-1.25zM95.6,251.4h1.25v1.25h-1.25zM95.6,256.2h1.25v1.25h-1.25zM100.4,203.6h1.25v1.25h-1.25zM100.4,208.3h1.25v1.25h-1.25zM100.4,213.1h1.25v1.25h-1.25zM100.4,217.9h1.25v1.25h-1.25zM100.4,222.7h1.25v1.25h-1.25zM100.4,237.0h1.25v1.25h-1.25zM100.4,241.8h1.25v1.25h-1.25zM100.4,246.6h1.25v1.25h-1.25zM100.4,251.4h1.25v1.25h-1.25zM100.4,256.2h1.25v1.25h-1.25zM105.2,203.6h1.25v1.25h-1.25zM105.2,208.3h1.25v1.25h-1.25zM105.2,213.1h1.25v1.25h-1.25zM105.2,217.9h1.25v1.25h-1.25zM105.2,222.7h1.25v1.25h-1.25zM105.2,237.0h1.25v1.25h-1.25zM105.2,241.8h1.25v1.25h-1.25zM105.2,246.6h1.25v1.25h-1.25zM105.2,251.4h1.25v1.25h-1.25zM105.2,256.2h1.25v1.25h-1.25zM110.0,203.6h1.25v1.25h-1.25zM110.0,208.3h1.25v1.25h-1.25zM110.0,213.1h1.25v1.25h-1.25zM110.0,217.9h1.25v1.25h-1.25zM110.0,222.7h1.25v1.25h-1.25zM110.0,237.0h1.25v1.25h-1.25zM110.0,241.8h1.25v1.25h-1.25zM110.0,246.6h1.25v1.25h-1.25zM110.0,251.4h1.25v1.25h-1.25zM110.0,256.2h1.25v1.25h-1.25zM114.8,203.6h1.25v1.25h-1.25zM114.8,208.3h1.25v1.25h-1.25zM114.8,213.1h1.25v1.25h-1.25zM114.8,217.9h1.25v1.25h-1.25zM114.8,222.7h1.25v1.25h-1.25zM114.8,237.0h1.25v1.25h-1.25zM114.8,241.8h1.25v1.25h-1.25zM114.8,246.6h1.25v1.25h-1.25zM114.8,251.4h1.25v1.25h-1.25zM114.8,256.2h1.25v1.25h-1.25zM119.6,203.6h1.25v1.25h-1.25zM119.6,208.3h1.25v1.25h-1.25zM119.6,213.1h1.25v1.25h-1.25zM119.6,217.9h1.25v1.25h-1.25zM119.6,222.7h1.25v1.25h-1.25zM119.6,237.0h1.25v1.25h-1.25zM119.6,241.8h1.25v1.25h-1.25zM119.6,246.6h1.25v1.25h-1.25zM119.6,251.4h1.25v1.25h-1.25zM119.6,256.2h1.25v1.25h-1.25zM124.4,203.6h1.25v1.25h-1.25zM124.4,208.3h1.25v1.25h-1.25zM124.4,213.1h1.25v1.25h-1.25zM124.4,217.9h1.25v1.25h-1.25zM124.4,222.7h1.25v1.25h-1.25zM124.4,237.0h1.25v1.25h-1.25zM124.4,241.8h1.25v1.25h-1.25zM124.4,246.6h1.25v1.25h-1.25zM124.4,251.4h1.25v1.25h-1.25zM124.4,256.2h1.25v1.25h-1.25zM129.2,203.6h1.25v1.25h-1.25zM129.2,208.3h1.25v1.25h-1.25zM129.2,213.1h1.25v1.25h-1.25zM129.2,217.9h1.25v1.25h-1.25zM129.2,222.7h1.25v1.25h-1.25zM129.2,237.0h1.25v1.25h-1.25zM129.2,241.8h1.25v1.25h-1.25zM129.2,246.6h1.25v1.25h-1.25zM129.2,251.4h1.25v1.25h-1.25zM129.2,256.2h1.25v1.25h-1.25zM133.9,203.6h1.25v1.25h-1.25zM133.9,208.3h1.25v1.25h-1.25zM133.9,213.1h1.25v1.25h-1.25zM133.9,217.9h1.25v1.25h-1.25zM133.9,222.7h1.25v1.25h-1.25zM133.9,237.0h1.25v1.25h-1.25zM133.9,241.8h1.25v1.25h-1.25zM133.9,246.6h1.25v1.25h-1.25zM133.9,251.4h1.25v1.25h-1.25zM133.9,256.2h1.25v1.25h-1.25zM138.7,203.6h1.25v1.25h-1.25zM138.7,208.3h1.25v1.25h-1.25zM138.7,213.1h1.25v1.25h-1.25zM138.7,217.9h1.25v1.25h-1.25zM138.7,222.7h1.25v1.25h-1.25zM138.7,237.0h1.25v1.25h-1.25zM138.7,241.8h1.25v1.25h-1.25zM138.7,246.6h1.25v1.25h-1.25zM138.7,251.4h1.25v1.25h-1.25zM138.7,256.2h1.25v1.25h-1.25zM143.5,203.6h1.25v1.25h-1.25zM143.5,208.3h1.25v1.25h-1.25zM143.5,213.1h1.25v1.25h-1.25zM143.5,217.9h1.25v1.25h-1.25zM143.5,222.7h1.25v1.25h-1.25zM143.5,237.0h1.25v1.25h-1.25zM143.5,241.8h1.25v1.25h-1.25zM143.5,246.6h1.25v1.25h-1.25zM143.5,251.4h1.25v1.25h-1.25zM143.5,256.2h1.25v1.25h-1.25zM148.3,203.6h1.25v1.25h-1.25zM148.3,208.3h1.25v1.25h-1.25zM148.3,213.1h1.25v1.25h-1.25zM148.3,217.9h1.25v1.25h-1.25zM148.3,222.7h1.25v1.25h-1.25zM148.3,237.0h1.25v1.25h-1.25zM148.3,241.8h1.25v1.25h-1.25zM148.3,246.6h1.25v1.25h-1.25zM148.3,251.4h1.25v1.25h-1.25zM148.3,256.2h1.25v1.25h-1.25zM153.1,203.6h1.25v1.25h-1.25zM153.1,208.3h1.25v1.25h-1.25zM153.1,213.1h1.25v1.25h-1.25zM153.1,217.9h1.25v1.25h-1.25zM153.1,222.7h1.25v1.25h-1.25zM153.1,237.0h1.25v1.25h-1.25zM153.1,241.8h1.25v1.25h-1.25zM153.1,246.6h1.25v1.25h-1.25zM153.1,251.4h1.25v1.25h-1.25zM153.1,256.2h1.25v1.25h-1.25zM157.9,203.6h1.25v1.25h-1.25zM157.9,208.3h1.25v1.25h-1.25zM157.9,213.1h1.25v1.25h-1.25zM157.9,217.9h1.25v1.25h-1.25zM157.9,222.7h1.25v1.25h-1.25zM157.9,237.0h1.25v1.25h-1.25zM157.9,241.8h1.25v1.25h-1.25zM157.9,246.6h1.25v1.25h-1.25zM157.9,251.4h1.25v1.25h-1.25zM157.9,256.2h1.25v1.25h-1.25zM162.7,203.6h1.25v1.25h-1.25zM162.7,208.3h1.25v1.25h-1.25zM162.7,213.1h1.25v1.25h-1.25zM162.7,217.9h1.25v1.25h-1.25zM162.7,222.7h1.25v1.25h-1.25zM162.7,237.0h1.25v1.25h-1.25zM162.7,241.8h1.25v1.25h-1.25zM162.7,246.6h1.25v1.25h-1.25zM162.7,251.4h1.25v1.25h-1.25zM162.7,256.2h1.25v1.25h-1.25zM167.4,203.6h1.25v1.25h-1.25zM167.4,208.3h1.25v1.25h-1.25zM167.4,213.1h1.25v1.25h-1.25zM167.4,217.9h1.25v1.25h-1.25zM167.4,222.7h1.25v1.25h-1.25zM167.4,237.0h1.25v1.25h-1.25zM167.4,241.8h1.25v1.25h-1.25zM167.4,246.6h1.25v1.25h-1.25zM167.4,251.4h1.25v1.25h-1.25zM167.4,256.2h1.25v1.25h-1.25zM172.2,203.6h1.25v1.25h-1.25zM172.2,208.3h1.25v1.25h-1.25zM172.2,213.1h1.25v1.25h-1.25zM172.2,217.9h1.25v1.25h-1.25zM172.2,222.7h1.25v1.25h-1.25zM172.2,237.0h1.25v1.25h-1.25zM172.2,241.8h1.25v1.25h-1.25zM172.2,246.6h1.25v1.25h-1.25zM172.2,251.4h1.25v1.25h-1.25zM172.2,256.2h1.25v1.25h-1.25zM177.0,203.6h1.25v1.25h-1.25zM177.0,208.3h1.25v1.25h-1.25zM177.0,213.1h1.25v1.25h-1.25zM177.0,217.9h1.25v1.25h-1.25zM177.0,222.7h1.25v1.25h-1.25zM177.0,237.0h1.25v1.25h-1.25zM177.0,241.8h1.25v1.25h-1.25zM177.0,246.6h1.25v1.25h-1.25zM177.0,251.4h1.25v1.25h-1.25zM177.0,256.2h1.25v1.25h-1.25zM181.8,203.6h1.25v1.25h-1.25zM181.8,208.3h1.25v1.25h-1.25zM181.8,213.1h1.25v1.25h-1.25zM181.8,217.9h1.25v1.25h-1.25zM181.8,222.7h1.25v1.25h-1.25zM181.8,237.0h1.25v1.25h-1.25zM181.8,241.8h1.25v1.25h-1.25zM181.8,246.6h1.25v1.25h-1.25zM181.8,251.4h1.25v1.25h-1.25zM181.8,256.2h1.25v1.25h-1.25zM186.6,203.6h1.25v1.25h-1.25zM186.6,208.3h1.25v1.25h-1.25zM186.6,213.1h1.25v1.25h-1.25zM186.6,217.9h1.25v1.25h-1.25zM186.6,222.7h1.25v1.25h-1.25zM186.6,237.0h1.25v1.25h-1.25zM186.6,241.8h1.25v1.25h-1.25zM186.6,246.6h1.25v1.25h-1.25zM186.6,251.4h1.25v1.25h-1.25zM186.6,256.2h1.25v1.25h-1.25zM191.4,203.6h1.25v1.25h-1.25zM191.4,208.3h1.25v1.25h-1.25zM191.4,213.1h1.25v1.25h-1.25zM191.4,217.9h1.25v1.25h-1.25zM191.4,222.7h1.25v1.25h-1.25zM191.4,237.0h1.25v1.25h-1.25zM191.4,241.8h1.25v1.25h-1.25zM191.4,246.6h1.25v1.25h-1.25zM191.4,251.4h1.25v1.25h-1.25zM191.4,256.2h1.25v1.25h-1.25zM196.2,203.6h1.25v1.25h-1.25zM196.2,208.3h1.25v1.25h-1.25zM196.2,213.1h1.25v1.25h-1.25zM196.2,217.9h1.25v1.25h-1.25zM196.2,222.7h1.25v1.25h-1.25zM196.2,237.0h1.25v1.25h-1.25zM196.2,241.8h1.25v1.25h-1.25zM196.2,246.6h1.25v1.25h-1.25zM196.2,251.4h1.25v1.25h-1.25zM196.2,256.2h1.25v1.25h-1.25zM201.0,203.6h1.25v1.25h-1.25zM201.0,208.3h1.25v1.25h-1.25zM201.0,213.1h1.25v1.25h-1.25zM201.0,217.9h1.25v1.25h-1.25zM201.0,222.7h1.25v1.25h-1.25zM201.0,237.0h1.25v1.25h-1.25zM201.0,241.8h1.25v1.25h-1.25zM201.0,246.6h1.25v1.25h-1.25zM201.0,251.4h1.25v1.25h-1.25zM201.0,256.2h1.25v1.25h-1.25zM205.7,203.6h1.25v1.25h-1.25zM205.7,208.3h1.25v1.25h-1.25zM205.7,213.1h1.25v1.25h-1.25zM205.7,217.9h1.25v1.25h-1.25zM205.7,222.7h1.25v1.25h-1.25zM205.7,237.0h1.25v1.25h-1.25zM205.7,241.8h1.25v1.25h-1.25zM205.7,246.6h1.25v1.25h-1.25zM205.7,251.4h1.25v1.25h-1.25zM205.7,256.2h1.25v1.25h-1.25zM210.5,203.6h1.25v1.25h-1.25zM210.5,208.3h1.25v1.25h-1.25zM210.5,213.1h1.25v1.25h-1.25zM210.5,217.9h1.25v1.25h-1.25zM210.5,222.7h1.25v1.25h-1.25zM210.5,237.0h1.25v1.25h-1.25zM210.5,241.8h1.25v1.25h-1.25zM210.5,246.6h1.25v1.25h-1.25zM210.5,251.4h1.25v1.25h-1.25zM210.5,256.2h1.25v1.25h-1.25zM215.3,203.6h1.25v1.25h-1.25zM215.3,208.3h1.25v1.25h-1.25zM215.3,213.1h1.25v1.25h-1.25zM215.3,217.9h1.25v1.25h-1.25zM215.3,222.7h1.25v1.25h-1.25zM215.3,237.0h1.25v1.25h-1.25zM215.3,241.8h1.25v1.25h-1.25zM215.3,246.6h1.25v1.25h-1.25zM215.3,251.4h1.25v1.25h-1.25zM215.3,256.2h1.25v1.25h-1.25zM220.1,203.6h1.25v1.25h-1.25zM220.1,208.3h1.25v1.25h-1.25zM220.1,213.1h1.25v1.25h-1.25zM220.1,217.9h1.25v1.25h-1.25zM220.1,222.7h1.25v1.25h-1.25zM220.1,237.0h1.25v1.25h-1.25zM220.1,241.8h1.25v1.25h-1.25zM220.1,246.6h1.25v1.25h-1.25zM220.1,251.4h1.25v1.25h-1.25zM220.1,256.2h1.25v1.25h-1.25zM224.9,203.6h1.25v1.25h-1.25zM224.9,208.3h1.25v1.25h-1.25zM224.9,213.1h1.25v1.25h-1.25zM224.9,217.9h1.25v1.25h-1.25zM224.9,222.7h1.25v1.25h-1.25zM224.9,237.0h1.25v1.25h-1.25zM224.9,241.8h1.25v1.25h-1.25zM224.9,246.6h1.25v1.25h-1.25zM224.9,251.4h1.25v1.25h-1.25zM224.9,256.2h1.25v1.25h-1.25zM229.7,203.6h1.25v1.25h-1.25zM229.7,208.3h1.25v1.25h-1.25zM229.7,213.1h1.25v1.25h-1.25zM229.7,217.9h1.25v1.25h-1.25zM229.7,222.7h1.25v1.25h-1.25zM229.7,237.0h1.25v1.25h-1.25zM229.7,241.8h1.25v1.25h-1.25zM229.7,246.6h1.25v1.25h-1.25zM229.7,251.4h1.25v1.25h-1.25zM229.7,256.2h1.25v1.25h-1.25zM234.5,203.6h1.25v1.25h-1.25zM234.5,208.3h1.25v1.25h-1.25zM234.5,213.1h1.25v1.25h-1.25zM234.5,217.9h1.25v1.25h-1.25zM234.5,222.7h1.25v1.25h-1.25zM234.5,237.0h1.25v1.25h-1.25zM234.5,241.8h1.25v1.25h-1.25zM234.5,246.6h1.25v1.25h-1.25zM234.5,251.4h1.25v1.25h-1.25zM234.5,256.2h1.25v1.25h-1.25zM239.3,203.6h1.25v1.25h-1.25zM239.3,208.3h1.25v1.25h-1.25zM239.3,213.1h1.25v1.25h-1.25zM239.3,217.9h1.25v1.25h-1.25zM239.3,222.7h1.25v1.25h-1.25zM239.3,237.0h1.25v1.25h-1.25zM239.3,241.8h1.25v1.25h-1.25zM239.3,246.6h1.25v1.25h-1.25zM239.3,251.4h1.25v1.25h-1.25zM239.3,256.2h1.25v1.25h-1.25zM244.0,203.6h1.25v1.25h-1.25zM244.0,208.3h1.25v1.25h-1.25zM244.0,213.1h1.25v1.25h-1.25zM244.0,217.9h1.25v1.25h-1.25zM244.0,222.7h1.25v1.25h-1.25zM244.0,237.0h1.25v1.25h-1.25zM244.0,241.8h1.25v1.25h-1.25zM244.0,246.6h1.25v1.25h-1.25zM244.0,251.4h1.25v1.25h-1.25zM244.0,256.2h1.25v1.25h-1.25zM248.8,203.6h1.25v1.25h-1.25zM248.8,208.3h1.25v1.25h-1.25zM248.8,213.1h1.25v1.25h-1.25zM248.8,217.9h1.25v1.25h-1.25zM248.8,222.7h1.25v1.25h-1.25zM248.8,237.0h1.25v1.25h-1.25zM248.8,241.8h1.25v1.25h-1.25zM248.8,246.6h1.25v1.25h-1.25zM248.8,251.4h1.25v1.25h-1.25zM248.8,256.2h1.25v1.25h-1.25zM253.6,203.6h1.25v1.25h-1.25zM253.6,208.3h1.25v1.25h-1.25zM253.6,213.1h1.25v1.25h-1.25zM253.6,217.9h1.25v1.25h-1.25zM253.6,222.7h1.25v1.25h-1.25zM253.6,237.0h1.25v1.25h-1.25zM253.6,241.8h1.25v1.25h-1.25zM253.6,246.6h1.25v1.25h-1.25zM253.6,251.4h1.25v1.25h-1.25zM253.6,256.2h1.25v1.25h-1.25zM258.4,203.6h1.25v1.25h-1.25zM258.4,208.3h1.25v1.25h-1.25zM258.4,213.1h1.25v1.25h-1.25zM258.4,217.9h1.25v1.25h-1.25zM258.4,222.7h1.25v1.25h-1.25zM258.4,237.0h1.25v1.25h-1.25zM258.4,241.8h1.25v1.25h-1.25zM258.4,246.6h1.25v1.25h-1.25zM258.4,251.4h1.25v1.25h-1.25zM258.4,256.2h1.25v1.25h-1.25zM263.2,203.6h1.25v1.25h-1.25zM263.2,208.3h1.25v1.25h-1.25zM263.2,213.1h1.25v1.25h-1.25zM263.2,217.9h1.25v1.25h-1.25zM263.2,222.7h1.25v1.25h-1.25zM263.2,237.0h1.25v1.25h-1.25zM263.2,241.8h1.25v1.25h-1.25zM263.2,246.6h1.25v1.25h-1.25zM263.2,251.4h1.25v1.25h-1.25zM263.2,256.2h1.25v1.25h-1.25zM268.0,203.6h1.25v1.25h-1.25zM268.0,208.3h1.25v1.25h-1.25zM268.0,213.1h1.25v1.25h-1.25zM268.0,217.9h1.25v1.25h-1.25zM268.0,222.7h1.25v1.25h-1.25zM268.0,237.0h1.25v1.25h-1.25zM268.0,241.8h1.25v1.25h-1.25zM268.0,246.6h1.25v1.25h-1.25zM268.0,251.4h1.25v1.25h-1.25zM268.0,256.2h1.25v1.25h-1.25zM272.8,203.6h1.25v1.25h-1.25zM272.8,208.3h1.25v1.25h-1.25zM272.8,213.1h1.25v1.25h-1.25zM272.8,217.9h1.25v1.25h-1.25zM272.8,222.7h1.25v1.25h-1.25zM272.8,237.0h1.25v1.25h-1.25zM272.8,241.8h1.25v1.25h-1.25zM272.8,246.6h1.25v1.25h-1.25zM272.8,251.4h1.25v1.25h-1.25zM272.8,256.2h1.25v1.25h-1.25zM277.6,203.6h1.25v1.25h-1.25zM277.6,208.3h1.25v1.25h-1.25zM277.6,213.1h1.25v1.25h-1.25zM277.6,217.9h1.25v1.25h-1.25zM277.6,222.7h1.25v1.25h-1.25zM277.6,237.0h1.25v1.25h-1.25zM277.6,241.8h1.25v1.25h-1.25zM277.6,246.6h1.25v1.25h-1.25zM277.6,251.4h1.25v1.25h-1.25zM277.6,256.2h1.25v1.25h-1.25zM282.3,203.6h1.25v1.25h-1.25zM282.3,208.3h1.25v1.25h-1.25zM282.3,213.1h1.25v1.25h-1.25zM282.3,217.9h1.25v1.25h-1.25zM282.3,222.7h1.25v1.25h-1.25zM282.3,237.0h1.25v1.25h-1.25zM282.3,241.8h1.25v1.25h-1.25zM282.3,246.6h1.25v1.25h-1.25zM282.3,251.4h1.25v1.25h-1.25zM282.3,256.2h1.25v1.25h-1.25zM287.1,203.6h1.25v1.25h-1.25zM287.1,208.3h1.25v1.25h-1.25zM287.1,213.1h1.25v1.25h-1.25zM287.1,217.9h1.25v1.25h-1.25zM287.1,222.7h1.25v1.25h-1.25zM287.1,237.0h1.25v1.25h-1.25zM287.1,241.8h1.25v1.25h-1.25zM287.1,246.6h1.25v1.25h-1.25zM287.1,251.4h1.25v1.25h-1.25zM287.1,256.2h1.25v1.25h-1.25zM291.9,203.6h1.25v1.25h-1.25zM291.9,208.3h1.25v1.25h-1.25zM291.9,213.1h1.25v1.25h-1.25zM291.9,217.9h1.25v1.25h-1.25zM291.9,222.7h1.25v1.25h-1.25zM291.9,237.0h1.25v1.25h-1.25zM291.9,241.8h1.25v1.25h-1.25zM291.9,246.6h1.25v1.25h-1.25zM291.9,251.4h1.25v1.25h-1.25zM291.9,256.2h1.25v1.25h-1.25zM296.7,203.6h1.25v1.25h-1.25zM296.7,208.3h1.25v1.25h-1.25zM296.7,213.1h1.25v1.25h-1.25zM296.7,217.9h1.25v1.25h-1.25zM296.7,222.7h1.25v1.25h-1.25zM296.7,237.0h1.25v1.25h-1.25zM296.7,241.8h1.25v1.25h-1.25zM296.7,246.6h1.25v1.25h-1.25zM296.7,251.4h1.25v1.25h-1.25zM296.7,256.2h1.25v1.25h-1.25zM301.5,203.6h1.25v1.25h-1.25zM301.5,208.3h1.25v1.25h-1.25zM301.5,213.1h1.25v1.25h-1.25zM301.5,217.9h1.25v1.25h-1.25zM301.5,222.7h1.25v1.25h-1.25zM301.5,237.0h1.25v1.25h-1.25zM301.5,241.8h1.25v1.25h-1.25zM301.5,246.6h1.25v1.25h-1.25zM301.5,251.4h1.25v1.25h-1.25zM301.5,256.2h1.25v1.25h-1.25zM306.3,203.6h1.25v1.25h-1.25zM306.3,208.3h1.25v1.25h-1.25zM306.3,213.1h1.25v1.25h-1.25zM306.3,217.9h1.25v1.25h-1.25zM306.3,222.7h1.25v1.25h-1.25zM306.3,237.0h1.25v1.25h-1.25zM306.3,241.8h1.25v1.25h-1.25zM306.3,246.6h1.25v1.25h-1.25zM306.3,251.4h1.25v1.25h-1.25zM306.3,256.2h1.25v1.25h-1.25zM311.1,203.6h1.25v1.25h-1.25zM311.1,208.3h1.25v1.25h-1.25zM311.1,213.1h1.25v1.25h-1.25zM311.1,217.9h1.25v1.25h-1.25zM311.1,222.7h1.25v1.25h-1.25zM311.1,237.0h1.25v1.25h-1.25zM311.1,241.8h1.25v1.25h-1.25zM311.1,246.6h1.25v1.25h-1.25zM311.1,251.4h1.25v1.25h-1.25zM311.1,256.2h1.25v1.25h-1.25zM315.8,203.6h1.25v1.25h-1.25zM315.8,208.3h1.25v1.25h-1.25zM315.8,213.1h1.25v1.25h-1.25zM315.8,217.9h1.25v1.25h-1.25zM315.8,222.7h1.25v1.25h-1.25zM315.8,237.0h1.25v1.25h-1.25zM315.8,241.8h1.25v1.25h-1.25zM315.8,246.6h1.25v1.25h-1.25zM315.8,251.4h1.25v1.25h-1.25zM315.8,256.2h1.25v1.25h-1.25zM320.6,203.6h1.25v1.25h-1.25zM320.6,208.3h1.25v1.25h-1.25zM320.6,213.1h1.25v1.25h-1.25zM320.6,217.9h1.25v1.25h-1.25zM320.6,222.7h1.25v1.25h-1.25zM320.6,237.0h1.25v1.25h-1.25zM320.6,241.8h1.25v1.25h-1.25zM320.6,246.6h1.25v1.25h-1.25zM320.6,251.4h1.25v1.25h-1.25zM320.6,256.2h1.25v1.25h-1.25zM325.4,203.6h1.25v1.25h-1.25zM325.4,208.3h1.25v1.25h-1.25zM325.4,213.1h1.25v1.25h-1.25zM325.4,217.9h1.25v1.25h-1.25zM325.4,222.7h1.25v1.25h-1.25zM325.4,237.0h1.25v1.25h-1.25zM325.4,241.8h1.25v1.25h-1.25zM325.4,246.6h1.25v1.25h-1.25zM325.4,251.4h1.25v1.25h-1.25zM325.4,256.2h1.25v1.25h-1.25zM330.2,203.6h1.25v1.25h-1.25zM330.2,208.3h1.25v1.25h-1.25zM330.2,213.1h1.25v1.25h-1.25zM330.2,217.9h1.25v1.25h-1.25zM330.2,222.7h1.25v1.25h-1.25zM330.2,237.0h1.25v1.25h-1.25zM330.2,241.8h1.25v1.25h-1.25zM330.2,246.6h1.25v1.25h-1.25zM330.2,251.4h1.25v1.25h-1.25zM330.2,256.2h1.25v1.25h-1.25zM335.0,203.6h1.25v1.25h-1.25zM335.0,208.3h1.25v1.25h-1.25zM335.0,213.1h1.25v1.25h-1.25zM335.0,217.9h1.25v1.25h-1.25zM335.0,222.7h1.25v1.25h-1.25zM335.0,237.0h1.25v1.25h-1.25zM335.0,241.8h1.25v1.25h-1.25zM335.0,246.6h1.25v1.25h-1.25zM335.0,251.4h1.25v1.25h-1.25zM335.0,256.2h1.25v1.25h-1.25zM339.8,203.6h1.25v1.25h-1.25zM339.8,208.3h1.25v1.25h-1.25zM339.8,213.1h1.25v1.25h-1.25zM339.8,217.9h1.25v1.25h-1.25zM339.8,222.7h1.25v1.25h-1.25zM339.8,237.0h1.25v1.25h-1.25zM339.8,241.8h1.25v1.25h-1.25zM339.8,246.6h1.25v1.25h-1.25zM339.8,251.4h1.25v1.25h-1.25zM339.8,256.2h1.25v1.25h-1.25zM344.6,203.6h1.25v1.25h-1.25zM344.6,208.3h1.25v1.25h-1.25zM344.6,213.1h1.25v1.25h-1.25zM344.6,217.9h1.25v1.25h-1.25zM344.6,222.7h1.25v1.25h-1.25zM344.6,237.0h1.25v1.25h-1.25zM344.6,241.8h1.25v1.25h-1.25zM344.6,246.6h1.25v1.25h-1.25zM344.6,251.4h1.25v1.25h-1.25zM344.6,256.2h1.25v1.25h-1.25zM349.4,203.6h1.25v1.25h-1.25zM349.4,208.3h1.25v1.25h-1.25zM349.4,213.1h1.25v1.25h-1.25zM349.4,217.9h1.25v1.25h-1.25zM349.4,222.7h1.25v1.25h-1.25zM349.4,237.0h1.25v1.25h-1.25zM349.4,241.8h1.25v1.25h-1.25zM349.4,246.6h1.25v1.25h-1.25zM349.4,251.4h1.25v1.25h-1.25zM349.4,256.2h1.25v1.25h-1.25zM354.1,203.6h1.25v1.25h-1.25zM354.1,208.3h1.25v1.25h-1.25zM354.1,213.1h1.25v1.25h-1.25zM354.1,217.9h1.25v1.25h-1.25zM354.1,222.7h1.25v1.25h-1.25zM354.1,237.0h1.25v1.25h-1.25zM354.1,241.8h1.25v1.25h-1.25zM354.1,246.6h1.25v1.25h-1.25zM354.1,251.4h1.25v1.25h-1.25zM354.1,256.2h1.25v1.25h-1.25zM57.3,184.3h1.25v1.25h-1.25zM57.3,189.3h1.25v1.25h-1.25zM57.3,270.6h1.25v1.25h-1.25zM57.3,275.4h1.25v1.25h-1.25zM62.1,184.3h1.25v1.25h-1.25zM62.1,189.3h1.25v1.25h-1.25zM62.1,270.6h1.25v1.25h-1.25zM62.1,275.4h1.25v1.25h-1.25zM66.9,184.3h1.25v1.25h-1.25zM66.9,189.3h1.25v1.25h-1.25zM66.9,270.6h1.25v1.25h-1.25zM66.9,275.4h1.25v1.25h-1.25zM71.7,184.3h1.25v1.25h-1.25zM71.7,189.3h1.25v1.25h-1.25zM71.7,270.6h1.25v1.25h-1.25zM71.7,275.4h1.25v1.25h-1.25zM76.5,184.3h1.25v1.25h-1.25zM76.5,189.3h1.25v1.25h-1.25zM76.5,270.6h1.25v1.25h-1.25zM76.5,275.4h1.25v1.25h-1.25zM86.1,184.3h1.25v1.25h-1.25zM86.1,189.3h1.25v1.25h-1.25zM86.1,270.6h1.25v1.25h-1.25zM86.1,275.4h1.25v1.25h-1.25zM90.9,184.3h1.25v1.25h-1.25zM90.9,189.3h1.25v1.25h-1.25zM90.9,270.6h1.25v1.25h-1.25zM90.9,275.4h1.25v1.25h-1.25zM95.6,184.3h1.25v1.25h-1.25zM95.6,189.3h1.25v1.25h-1.25zM95.6,270.6h1.25v1.25h-1.25zM95.6,275.4h1.25v1.25h-1.25zM100.4,184.3h1.25v1.25h-1.25zM100.4,189.3h1.25v1.25h-1.25zM100.4,270.6h1.25v1.25h-1.25zM100.4,275.4h1.25v1.25h-1.25zM105.2,184.3h1.25v1.25h-1.25zM105.2,189.3h1.25v1.25h-1.25zM105.2,270.6h1.25v1.25h-1.25zM105.2,275.4h1.25v1.25h-1.25zM114.8,184.3h1.25v1.25h-1.25zM114.8,189.3h1.25v1.25h-1.25zM114.8,270.6h1.25v1.25h-1.25zM114.8,275.4h1.25v1.25h-1.25zM119.6,184.3h1.25v1.25h-1.25zM119.6,189.3h1.25v1.25h-1.25zM119.6,270.6h1.25v1.25h-1.25zM119.6,275.4h1.25v1.25h-1.25zM124.4,184.3h1.25v1.25h-1.25zM124.4,189.3h1.25v1.25h-1.25zM124.4,270.6h1.25v1.25h-1.25zM124.4,275.4h1.25v1.25h-1.25zM129.2,184.3h1.25v1.25h-1.25zM129.2,189.3h1.25v1.25h-1.25zM129.2,270.6h1.25v1.25h-1.25zM129.2,275.4h1.25v1.25h-1.25zM133.9,184.3h1.25v1.25h-1.25zM133.9,189.3h1.25v1.25h-1.25zM133.9,270.6h1.25v1.25h-1.25zM133.9,275.4h1.25v1.25h-1.25zM143.5,184.3h1.25v1.25h-1.25zM143.5,189.3h1.25v1.25h-1.25zM143.5,270.6h1.25v1.25h-1.25zM143.5,275.4h1.25v1.25h-1.25zM148.3,184.3h1.25v1.25h-1.25zM148.3,189.3h1.25v1.25h-1.25zM148.3,270.6h1.25v1.25h-1.25zM148.3,275.4h1.25v1.25h-1.25zM153.1,184.3h1.25v1.25h-1.25zM153.1,189.3h1.25v1.25h-1.25zM153.1,270.6h1.25v1.25h-1.25zM153.1,275.4h1.25v1.25h-1.25zM157.9,184.3h1.25v1.25h-1.25zM157.9,189.3h1.25v1.25h-1.25zM157.9,270.6h1.25v1.25h-1.25zM157.9,275.4h1.25v1.25h-1.25zM162.7,184.3h1.25v1.25h-1.25zM162.7,189.3h1.25v1.25h-1.25zM162.7,270.6h1.25v1.25h-1.25zM162.7,275.4h1.25v1.25h-1.25zM172.2,184.3h1.25v1.25h-1.25zM172.2,189.3h1.25v1.25h-1.25zM172.2,270.6h1.25v1.25h-1.25zM172.2,275.4h1.25v1.25h-1.25zM177.0,184.3h1.25v1.25h-1.25zM177.0,189.3h1.25v1.25h-1.25zM177.0,270.6h1.25v1.25h-1.25zM177.0,275.4h1.25v1.25h-1.25zM181.8,184.3h1.25v1.25h-1.25zM181.8,189.3h1.25v1.25h-1.25zM181.8,270.6h1.25v1.25h-1.25zM181.8,275.4h1.25v1.25h-1.25zM186.6,184.3h1.25v1.25h-1.25zM186.6,189.3h1.25v1.25h-1.25zM186.6,270.6h1.25v1.25h-1.25zM186.6,275.4h1.25v1.25h-1.25zM191.4,184.3h1.25v1.25h-1.25zM191.4,189.3h1.25v1.25h-1.25zM191.4,270.6h1.25v1.25h-1.25zM191.4,275.4h1.25v1.25h-1.25zM205.7,184.3h1.25v1.25h-1.25zM205.7,189.3h1.25v1.25h-1.25zM205.7,270.6h1.25v1.25h-1.25zM205.7,275.4h1.25v1.25h-1.25zM210.5,184.3h1.25v1.25h-1.25zM210.5,189.3h1.25v1.25h-1.25zM210.5,270.6h1.25v1.25h-1.25zM210.5,275.4h1.25v1.25h-1.25zM215.3,184.3h1.25v1.25h-1.25zM215.3,189.3h1.25v1.25h-1.25zM215.3,270.6h1.25v1.25h-1.25zM215.3,275.4h1.25v1.25h-1.25zM220.1,184.3h1.25v1.25h-1.25zM220.1,189.3h1.25v1.25h-1.25zM220.1,270.6h1.25v1.25h-1.25zM220.1,275.4h1.25v1.25h-1.25zM224.9,184.3h1.25v1.25h-1.25zM224.9,189.3h1.25v1.25h-1.25zM224.9,270.6h1.25v1.25h-1.25zM224.9,275.4h1.25v1.25h-1.25zM234.5,184.3h1.25v1.25h-1.25zM234.5,189.3h1.25v1.25h-1.25zM234.5,270.6h1.25v1.25h-1.25zM234.5,275.4h1.25v1.25h-1.25zM239.3,184.3h1.25v1.25h-1.25zM239.3,189.3h1.25v1.25h-1.25zM239.3,270.6h1.25v1.25h-1.25zM239.3,275.4h1.25v1.25h-1.25zM244.0,184.3h1.25v1.25h-1.25zM244.0,189.3h1.25v1.25h-1.25zM244.0,270.6h1.25v1.25h-1.25zM244.0,275.4h1.25v1.25h-1.25zM248.8,184.3h1.25v1.25h-1.25zM248.8,189.3h1.25v1.25h-1.25zM248.8,270.6h1.25v1.25h-1.25zM248.8,275.4h1.25v1.25h-1.25zM253.6,184.3h1.25v1.25h-1.25zM253.6,189.3h1.25v1.25h-1.25zM253.6,270.6h1.25v1.25h-1.25zM253.6,275.4h1.25v1.25h-1.25zM263.2,184.3h1.25v1.25h-1.25zM263.2,189.3h1.25v1.25h-1.25zM263.2,270.6h1.25v1.25h-1.25zM263.2,275.4h1.25v1.25h-1.25zM268.0,184.3h1.25v1.25h-1.25zM268.0,189.3h1.25v1.25h-1.25zM268.0,270.6h1.25v1.25h-1.25zM268.0,275.4h1.25v1.25h-1.25zM272.8,184.3h1.25v1.25h-1.25zM272.8,189.3h1.25v1.25h-1.25zM272.8,270.6h1.25v1.25h-1.25zM272.8,275.4h1.25v1.25h-1.25zM277.6,184.3h1.25v1.25h-1.25zM277.6,189.3h1.25v1.25h-1.25zM277.6,270.6h1.25v1.25h-1.25zM277.6,275.4h1.25v1.25h-1.25zM282.3,184.3h1.25v1.25h-1.25zM282.3,189.3h1.25v1.25h-1.25zM282.3,270.6h1.25v1.25h-1.25zM282.3,275.4h1.25v1.25h-1.25zM291.9,184.3h1.25v1.25h-1.25zM291.9,189.3h1.25v1.25h-1.25zM291.9,270.6h1.25v1.25h-1.25zM291.9,275.4h1.25v1.25h-1.25zM296.7,184.3h1.25v1.25h-1.25zM296.7,189.3h1.25v1.25h-1.25zM296.7,270.6h1.25v1.25h-1.25zM296.7,275.4h1.25v1.25h-1.25zM301.5,184.3h1.25v1.25h-1.25zM301.5,189.3h1.25v1.25h-1.25zM301.5,270.6h1.25v1.25h-1.25zM301.5,275.4h1.25v1.25h-1.25zM306.3,184.3h1.25v1.25h-1.25zM306.3,189.3h1.25v1.25h-1.25zM306.3,270.6h1.25v1.25h-1.25zM306.3,275.4h1.25v1.25h-1.25zM311.1,184.3h1.25v1.25h-1.25zM311.1,189.3h1.25v1.25h-1.25zM311.1,270.6h1.25v1.25h-1.25zM311.1,275.4h1.25v1.25h-1.25zM320.6,184.3h1.25v1.25h-1.25zM320.6,189.3h1.25v1.25h-1.25zM320.6,270.6h1.25v1.25h-1.25zM320.6,275.4h1.25v1.25h-1.25zM325.4,184.3h1.25v1.25h-1.25zM325.4,189.3h1.25v1.25h-1.25zM325.4,270.6h1.25v1.25h-1.25zM325.4,275.4h1.25v1.25h-1.25zM330.2,184.3h1.25v1.25h-1.25zM330.2,189.3h1.25v1.25h-1.25zM330.2,270.6h1.25v1.25h-1.25zM330.2,275.4h1.25v1.25h-1.25zM335.0,184.3h1.25v1.25h-1.25zM335.0,189.3h1.25v1.25h-1.25zM335.0,270.6h1.25v1.25h-1.25zM335.0,275.4h1.25v1.25h-1.25zM339.8,184.3h1.25v1.25h-1.25zM339.8,189.3h1.25v1.25h-1.25zM339.8,270.6h1.25v1.25h-1.25zM339.8,275.4h1.25v1.25h-1.25z" fill="#5c5c5c"/>
<rect x="51.3" y="184.5" width="2.4" height="0.8" fill="#b8d4ee"/>
<rect x="51.3" y="189.5" width="2.4" height="0.8" fill="#f2b8b8"/>
<rect x="51.3" y="270.8" width="2.4" height="0.8" fill="#b8d4ee"/>
<rect x="51.3" y="275.6" width="2.4" height="0.8" fill="#f2b8b8"/>
<rect x="35.7" y="287.9" width="327.1" height="107.3" rx="2" fill="#e1e1e1"/>
<path d="M47.8,314.6h1.25v1.25h-1.25zM47.8,319.3h1.25v1.25h-1.25zM47.8,324.1h1.25v1.25h-1.25zM47.8,328.9h1.25v1.25h-1.25zM47.8,333.7h1.25v1.25h-1.25zM47.8,348.0h1.25v1.25h-1.25zM47.8,352.8h1.25v1.25h-1.25zM47.8,357.6h1.25v1.25h-1.25zM47.8,362.4h1.25v1.25h-1.25zM47.8,367.2h1.25v1.25h-1.25zM52.6,314.6h1.25v1.25h-1.25zM52.6,319.3h1.25v1.25h-1.25zM52.6,324.1h1.25v1.25h-1.25zM52.6,328.9h1.25v1.25h-1.25zM52.6,333.7h1.25v1.25h-1.25zM52.6,348.0h1.25v1.25h-1.25zM52.6,352.8h1.25v1.25h-1.25zM52.6,357.6h1.25v1.25h-1.25zM52.6,362.4h1.25v1.25h-1.25zM52.6,367.2h1.25v1.25h-1.25zM57.3,314.6h1.25v1.25h-1.25zM57.3,319.3h1.25v1.25h-1.25zM57.3,324.1h1.25v1.25h-1.25zM57.3,328.9h1.25v1.25h-1.25zM57.3,333.7h1.25v1.25h-1.25zM57.3,348.0h1.25v1.25h-1.25zM57.3,352.8h1.25v1.25h-1.25zM57.3,357.6h1.25v1.25h-1.25zM57.3,362.4h1.25v1.25h-1.25zM57.3,367.2h1.25v1.25h-1.25zM62.1,314.6h1.25v1.25h-1.25zM62.1,319.3h1.25v1.25h-1.25zM62.1,324.1h1.25v1.25h-1.25zM62.1,328.9h1.25v1.25h-1.25zM62.1,333.7h1.25v1.25h-1.25zM62.1,348.0h1.25v1.25h-1.25zM62.1,352.8h1.25v1.25h-1.25zM62.1,357.6h1.25v1.25h-1.25zM62.1,362.4h1.25v1.25h-1.25zM62.1,367.2h1.25v1.25h-1.25zM66.9,314.6h1.25v1.25h-1.25zM66.9,319.3h1.25v1.25h-1.25zM66.9,324.1h1.25v1.25h-1.25zM66.9,328.9h1.25v1.25h-1.25zM66.9,333.7h1.25v1.25h-1.25zM66.9,348.0h1.25v1.25h-1.25zM66.9,352.8h1.25v1.25h-1.25zM66.9,357.6h1.25v1.25h-1.25zM66.9,362.4h1.25v1.25h-1.25zM66.9,367.2h1.25v1.25h-1.25zM71.7,314.6h1.25v1.25h-1.25zM71.7,319.3h1.25v1.25h-1.25zM71.7,324.1h1.25v1.25h-1.25zM71.7,328.9h1.25v1.25h-1.25zM71.7,333.7h1.25v1.25h-1.25zM71.7,348.0h1.25v1.25h-1.25zM71.7,352.8h1.25v1.25h-1.25zM71.7,357.6h1.25v1.25h-1.25zM71.7,362.4h1.25v1.25h-1.25zM71.7,367.2h1.25v1.25h-1.25zM76.5,314.6h1.25v1.25h-1.25zM76.5,319.3h1.25v1.25h-1.25zM76.5,324.1h1.25v1.25h-1.25zM76.5,328.9h1.25v1.25h-1.25zM76.5,333.7h1.25v1.25h-1.25zM76.5,348.0h1.25v1.25h-1.25zM76.5,352.8h1.25v1.25h-1.25zM76.5,357.6h1.25v1.25h-1.25zM76.5,362.4h1.25v1.25h-1.25zM76.5,367.2h1.25v1.25h-1.25zM81.3,314.6h1.25v1.25h-1.25zM81.3,319.3h1.25v1.25h-1.25zM81.3,324.1h1.25v1.25h-1.25zM81.3,328.9h1.25v1.25h-1.25zM81.3,333.7h1.25v1.25h-1.25zM81.3,348.0h1.25v1.25h-1.25zM81.3,352.8h1.25v1.25h-1.25zM81.3,357.6h1.25v1.25h-1.25zM81.3,362.4h1.25v1.25h-1.25zM81.3,367.2h1.25v1.25h-1.25zM86.1,314.6h1.25v1.25h-1.25zM86.1,319.3h1.25v1.25h-1.25zM86.1,324.1h1.25v1.25h-1.25zM86.1,328.9h1.25v1.25h-1.25zM86.1,333.7h1.25v1.25h-1.25zM86.1,348.0h1.25v1.25h-1.25zM86.1,352.8h1.25v1.25h-1.25zM86.1,357.6h1.25v1.25h-1.25zM86.1,362.4h1.25v1.25h-1.25zM86.1,367.2h1.25v1.25h-1.25zM90.9,314.6h1.25v1.25h-1.25zM90.9,319.3h1.25v1.25h-1.25zM90.9,324.1h1.25v1.25h-1.25zM90.9,328.9h1.25v1.25h-1.25zM90.9,333.7h1.25v1.25h-1.25zM90.9,348.0h1.25v1.25h-1.25zM90.9,352.8h1.25v1.25h-1.25zM90.9,357.6h1.25v1.25h-1.25zM90.9,362.4h1.25v1.25h-1.25zM90.9,367.2h1.25v1.25h-1.25zM95.6,314.6h1.25v1.25h-1.25zM95.6,319.3h1.25v1.25h-1.25zM95.6,324.1h1.25v1.25h-1.25zM95.6,328.9h1.25v1.25h-1.25zM95.6,333.7h1.25v1.25h-1.25zM95.6,348.0h1.25v1.25h-1.25zM95.6,352.8h1.25v1.25h-1.25zM95.6,357.6h1.25v1.25h-1.25zM95.6,362.4h1.25v1.25h-1.25zM95.6,367.2h1.25v1.25h-1.25zM100.4,314.6h1.25v1.25h-1.25zM100.4,319.3h1.25v1.25h-1.25zM100.4,324.1h1.25v1.25h-1.25zM100.4,328.9h1.25v1.25h-1.25zM100.4,333.7h1.25v1.25h-1.25zM100.4,348.0h1.25v1.25h-1.25zM100.4,352.8h1.25v1.25h-1.25zM100.4,357.6h1.25v1.25h-1.25zM100.4,362.4h1.25v1.25h-1.25zM100.4,367.2h1.25v1.25h-1.25zM105.2,314.6h1.25v1.25h-1.25zM105.2,319.3h1.25v1.25h-1.25zM105.2,324.1h1.25v1.25h-1.25zM105.2,328.9h1.25v1.25h-1.25zM105.2,333.7h1.25v1.25h-1.25zM105.2,348.0h1.25v1.25h-1.25zM105.2,352.8h1.25v1.25h-1.25zM105.2,357.6h1.25v1.25h-1.25zM105.2,362.4h1.25v1.25h-1.25zM105.2,367.2h1.25v1.25h-1.25zM110.0,314.6h1.25v1.25h-1.25zM110.0,319.3h1.25v1.25h-1.25zM110.0,324.1h1.25v1.25h-1.25zM110.0,328.9h1.25v1.25h-1.25zM110.0,333.7h1.25v1.25h-1.25zM110.0,348.0h1.25v1.25h-1.25zM110.0,352.8h1.25v1.25h-1.25zM110.0,357.6h1.25v1.25h-1.25zM110.0,362.4h1.25v1.25h-1.25zM110.0,367.2h1.25v1.25h-1.25zM114.8,314.6h1.25v1.25h-1.25zM114.8,319.3h1.25v1.25h-1.25zM114.8,324.1h1.25v1.25h-1.25zM114.8,328.9h1.25v1.25h-1.25zM114.8,333.7h1.25v1.25h-1.25zM114.8,348.0h1.25v1.25h-1.25zM114.8,352.8h1.25v1.25h-1.25zM114.8,357.6h1.25v1.25h-1.25zM114.8,362.4h1.25v1.25h-1.25zM114.8,367.2h1.25v1.25h-1.25zM119.6,314.6h1.25v1.25h-1.25zM119.6,319.3h1.25v1.25h-1.25zM119.6,324.1h1.25v1.25h-1.25zM119.6,328.9h1.25v1.25h-1.25zM119.6,333.7h1.25v1.25h-1.25zM119.6,348.0h1.25v1.25h-1.25zM119.6,352.8h1.25v1.25h-1.25zM119.6,357.6h1.25v1.25h-1.25zM119.6,362.4h1.25v1.25h-1.25zM119.6,367.2h1.25v1.25h-1.25zM124.4,314.6h1.25v1.25h-1.25zM124.4,319.3h1.25v1.25h-1.25zM124.4,324.1h1.25v1.25h-1.25zM124.4,328.9h1.25v1.25h-1.25zM124.4,333.7h1.25v1.25h-1.25zM124.4,348.0h1.25v1.25h-1.25zM124.4,352.8h1.25v1.25h-1.25zM124.4,357.6h1.25v1.25h-1.25zM124.4,362.4h1.25v1.25h-1.25zM124.4,367.2h1.25v1.25h-1.25zM129.2,314.6h1.25v1.25h-1.25zM129.2,319.3h1.25v1.25h-1.25zM129.2,324.1h1.25v1.25h-1.25zM129.2,328.9h1.25v1.25h-1.25zM129.2,333.7h1.25v1.25h-1.25zM129.2,348.0h1.25v1.25h-1.25zM129.2,352.8h1.25v1.25h-1.25zM129.2,357.6h1.25v1.25h-1.25zM129.2,362.4h1.25v1.25h-1.25zM129.2,367.2h1.25v1.25h-1.25zM133.9,314.6h1.25v1.25h-1.25zM133.9,319.3h1.25v1.25h-1.25zM133.9,324.1h1.25v1.25h-1.25zM133.9,328.9h1.25v1.25h-1.25zM133.9,333.7h1.25v1.25h-1.25zM133.9,348.0h1.25v1.25h-1.25zM133.9,352.8h1.25v1.25h-1.25zM133.9,357.6h1.25v1.25h-1.25zM133.9,362.4h1.25v1.25h-1.25zM133.9,367.2h1.25v1.25h-1.25zM138.7,314.6h1.25v1.25h-1.25zM138.7,319.3h1.25v1.25h-1.25zM138.7,324.1h1.25v1.25h-1.25zM138.7,328.9h1.25v1.25h-1.25zM138.7,333.7h1.25v1.25h-1.25zM138.7,348.0h1.25v1.25h-1.25zM138.7,352.8h1.25v1.25h-1.25zM138.7,357.6h1.25v1.25h-1.25zM138.7,362.4h1.25v1.25h-1.25zM138.7,367.2h1.25v1.25h-1.25zM143.5,314.6h1.25v1.25h-1.25zM143.5,319.3h1.25v1.25h-1.25zM143.5,324.1h1.25v1.25h-1.25zM143.5,328.9h1.25v1.25h-1.25zM143.5,333.7h1.25v1.25h-1.25zM143.5,348.0h1.25v1.25h-1.25zM143.5,352.8h1.25v1.25h-1.25zM143.5,357.6h1.25v1.25h-1.25zM143.5,362.4h1.25v1.25h-1.25zM143.5,367.2h1.25v1.25h-1.25zM148.3,314.6h1.25v1.25h-1.25zM148.3,319.3h1.25v1.25h-1.25zM148.3,324.1h1.25v1.25h-1.25zM148.3,328.9h1.25v1.25h-1.25zM148.3,333.7h1.25v1.25h-1.25zM148.3,348.0h1.25v1.25h-1.25zM148.3,352.8h1.25v1.25h-1.25zM148.3,357.6h1.25v1.25h-1.25zM148.3,362.4h1.25v1.25h-1.25zM148.3,367.2h1.25v1.25h-1.25zM153.1,314.6h1.25v1.25h-1.25zM153.1,319.3h1.25v1.25h-1.25zM153.1,324.1h1.25v1.25h-1.25zM153.1,328.9h1.25v1.25h-1.25zM153.1,333.7h1.25v1.25h-1.25zM153.1,348.0h1.25v1.25h-1.25zM153.1,352.8h1.25v1.25h-1.25zM153.1,357.6h1.25v1.25h-1.25zM153.1,362.4h1.25v1.25h-1.25zM153.1,367.2h1.25v1.25h-1.25zM157.9,314.6h1.25v1.25h-1.25zM157.9,319.3h1.25v1.25h-1.25zM157.9,324.1h1.25v1.25h-1.25zM157.9,328.9h1.25v1.25h-1.25zM157.9,333.7h1.25v1.25h-1.25zM157.9,348.0h1.25v1.25h-1.25zM157.9,352.8h1.25v1.25h-1.25zM157.9,357.6h1.25v1.25h-1.25zM157.9,362.4h1.25v1.25h-1.25zM157.9,367.2h1.25v1.25h-1.25zM162.7,314.6h1.25v1.25h-1.25zM162.7,319.3h1.25v1.25h-1.25zM162.7,324.1h1.25v1.25h-1.25zM162.7,328.9h1.25v1.25h-1.25zM162.7,333.7h1.25v1.25h-1.25zM162.7,348.0h1.25v1.25h-1.25zM162.7,352.8h1.25v1.25h-1.25zM162.7,357.6h1.25v1.25h-1.25zM162.7,362.4h1.25v1.25h-1.25zM162.7,367.2h1.25v1.25h-1.25zM167.4,314.6h1.25v1.25h-1.25zM167.4,319.3h1.25v1.25h-1.25zM167.4,324.1h1.25v1.25h-1.25zM167.4,328.9h1.25v1.25h-1.25zM167.4,333.7h1.25v1.25h-1.25zM167.4,348.0h1.25v1.25h-1.25zM167.4,352.8h1.25v1.25h-1.25zM167.4,357.6h1.25v1.25h-1.25zM167.4,362.4h1.25v1.25h-1.25zM167.4,367.2h1.25v1.25h-1.25zM172.2,314.6h1.25v1.25h-1.25zM172.2,319.3h1.25v1.25h-1.25zM172.2,324.1h1.25v1.25h-1.25zM172.2,328.9h1.25v1.25h-1.25zM172.2,333.7h1.25v1.25h-1.25zM172.2,348.0h1.25v1.25h-1.25zM172.2,352.8h1.25v1.25h-1.25zM172.2,357.6h1.25v1.25h-1.25zM172.2,362.4h1.25v1.25h-1.25zM172.2,367.2h1.25v1.25h-1.25zM177.0,314.6h1.25v1.25h-1.25zM177.0,319.3h1.25v1.25h-1.25zM177.0,324.1h1.25v1.25h-1.25zM177.0,328.9h1.25v1.25h-1.25zM177.0,333.7h1.25v1.25h-1.25zM177.0,348.0h1.25v1.25h-1.25zM177.0,352.8h1.25v1.25h-1.25zM177.0,357.6h1.25v1.25h-1.25zM177.0,362.4h1.25v1.25h-1.25zM177.0,367.2h1.25v1.25h-1.25zM181.8,314.6h1.25v1.25h-1.25zM181.8,319.3h1.25v1.25h-1.25zM181.8,324.1h1.25v1.25h-1.25zM181.8,328.9h1.25v1.25h-1.25zM181.8,333.7h1.25v1.25h-1.25zM181.8,348.0h1.25v1.25h-1.25zM181.8,352.8h1.25v1.25h-1.25zM181.8,357.6h1.25v1.25h-1.25zM181.8,362.4h1.25v1.25h-1.25zM181.8,367.2h1.25v1.25h-1.25zM186.6,314.6h1.25v1.25h-1.25zM186.6,319.3h1.25v1.25h-1.25zM186.6,324.1h1.25v1.25h-1.25zM186.6,328.9h1.25v1.25h-1.25zM186.6,333.7h1.25v1.25h-1.25zM186.6,348.0h1.25v1.25h-1.25zM186.6,352.8h1.25v1.25h-1.25zM186.6,357.6h1.25v1.25h-1.25zM186.6,362.4h1.25v1.25h-1.25zM186.6,367.2h1.25v1.25h-1.25zM191.4,314.6h1.25v1.25h-1.25zM191.4,319.3h1.25v1.25h-1.25zM191.4,324.1h1.25v1.25h-1.25zM191.4,328.9h1.25v1.25h-1.25zM191.4,333.7h1.25v1.25h-1.25zM191.4,348.0h1.25v1.25h-1.25zM191.4,352.8h1.25v1.25h-1.25zM191.4,357.6h1.25v1.25h-1.25zM191.4,362.4h1.25v1.25h-1.25zM191.4,367.2h1.25v1.25h-1.25zM196.2,314.6h1.25v1.25h-1.25zM196.2,319.3h1.25v1.25h-1.25zM196.2,324.1h1.25v1.25h-1.25zM196.2,328.9h1.25v1.25h-1.25zM196.2,333.7h1.25v1.25h-1.25zM196.2,348.0h1.25v1.25h-1.25zM196.2,352.8h1.25v1.25h-1.25zM196.2,357.6h1.25v1.25h-1.25zM196.2,362.4h1.25v1.25h-1.25zM196.2,367.2h1.25v1.25h-1.25zM201.0,314.6h1.25v1.25h-1.25zM201.0,319.3h1.25v1.25h-1.25zM201.0,324.1h1.25v1.25h-1.25zM201.0,328.9h1.25v1.25h-1.25zM201.0,333.7h1.25v1.25h-1.25zM201.0,348.0h1.25v1.25h-1.25zM201.0,352.8h1.25v1.25h-1.25zM201.0,357.6h1.25v1.25h-1.25zM201.0,362.4h1.25v1.25h-1.25zM201.0,367.2h1.25v1.25h-1.25zM205.7,314.6h1.25v1.25h-1.25zM205.7,319.3h1.25v1.25h-1.25zM205.7,324.1h1.25v1.25h-1.25zM205.7,328.9h1.25v1.25h-1.25zM205.7,333.7h1.25v1.25h-1.25zM205.7,348.0h1.25v1.25h-1.25zM205.7,352.8h1.25v1.25h-1.25zM205.7,357.6h1.25v1.25h-1.25zM205.7,362.4h1.25v1.25h-1.25zM205.7,367.2h1.25v1.25h-1.25zM210.5,314.6h1.25v1.25h-1.25zM210.5,319.3h1.25v1.25h-1.25zM210.5,324.1h1.25v1.25h-1.25zM210.5,328.9h1.25v1.25h-1.25zM210.5,333.7h1.25v1.25h-1.25zM210.5,348.0h1.25v1.25h-1.25zM210.5,352.8h1.25v1.25h-1.25zM210.5,357.6h1.25v1.25h-1.25zM210.5,362.4h1.25v1.25h-1.25zM210.5,367.2h1.25v1.25h-1.25zM215.3,314.6h1.25v1.25h-1.25zM215.3,319.3h1.25v1.25h-1.25zM215.3,324.1h1.25v1.25h-1.25zM215.3,328.9h1.25v1.25h-1.25zM215.3,333.7h1.25v1.25h-1.25zM215.3,348.0h1.25v1.25h-1.25zM215.3,352.8h1.25v1.25h-1.25zM215.3,357.6h1.25v1.25h-1.25zM215.3,362.4h1.25v1.25h-1.25zM215.3,367.2h1.25v1.25h-1.25zM220.1,314.6h1.25v1.25h-1.25zM220.1,319.3h1.25v1.25h-1.25zM220.1,324.1h1.25v1.25h-1.25zM220.1,328.9h1.25v1.25h-1.25zM220.1,333.7h1.25v1.25h-1.25zM220.1,348.0h1.25v1.25h-1.25zM220.1,352.8h1.25v1.25h-1.25zM220.1,357.6h1.25v1.25h-1.25zM220.1,362.4h1.25v1.25h-1.25zM220.1,367.2h1.25v1.25h-1.25zM224.9,314.6h1.25v1.25h-1.25zM224.9,319.3h1.25v1.25h-1.25zM224.9,324.1h1.25v1.25h-1.25zM224.9,328.9h1.25v1.25h-1.25zM224.9,333.7h1.25v1.25h-1.25zM224.9,348.0h1.25v1.25h-1.25zM224.9,352.8h1.25v1.25h-1.25zM224.9,357.6h1.25v1.25h-1.25zM224.9,362.4h1.25v1.25h-1.25zM224.9,367.2h1.25v1.25h-1.25zM229.7,314.6h1.25v1.25h-1.25zM229.7,319.3h1.25v1.25h-1.25zM229.7,324.1h1.25v1.25h-1.25zM229.7,328.9h1.25v1.25h-1.25zM229.7,333.7h1.25v1.25h-1.25zM229.7,348.0h1.25v1.25h-1.25zM229.7,352.8h1.25v1.25h-1.25zM229.7,357.6h1.25v1.25h-1.25zM229.7,362.4h1.25v1.25h-1.25zM229.7,367.2h1.25v1.25h-1.25zM234.5,314.6h1.25v1.25h-1.25zM234.5,319.3h1.25v1.25h-1.25zM234.5,324.1h1.25v1.25h-1.25zM234.5,328.9h1.25v1.25h-1.25zM234.5,333.7h1.25v1.25h-1.25zM234.5,348.0h1.25v1.25h-1.25zM234.5,352.8h1.25v1.25h-1.25zM234.5,357.6h1.25v1.25h-1.25zM234.5,362.4h1.25v1.25h-1.25zM234.5,367.2h1.25v1.25h-1.25zM239.3,314.6h1.25v1.25h-1.25zM239.3,319.3h1.25v1.25h-1.25zM239.3,324.1h1.25v1.25h-1.25zM239.3,328.9h1.25v1.25h-1.25zM239.3,333.7h1.25v1.25h-1.25zM239.3,348.0h1.25v1.25h-1.25zM239.3,352.8h1.25v1.25h-1.25zM239.3,357.6h1.25v1.25h-1.25zM239.3,362.4h1.25v1.25h-1.25zM239.3,367.2h1.25v1.25h-1.25zM244.0,314.6h1.25v1.25h-1.25zM244.0,319.3h1.25v1.25h-1.25zM244.0,324.1h1.25v1.25h-1.25zM244.0,328.9h1.25v1.25h-1.25zM244.0,333.7h1.25v1.25h-1.25zM244.0,348.0h1.25v1.25h-1.25zM244.0,352.8h1.25v1.25h-1.25zM244.0,357.6h1.25v1.25h-1.25zM244.0,362.4h1.25v1.25h-1.25zM244.0,367.2h1.25v1.25h-1.25zM248.8,314.6h1.25v1.25h-1.25zM248.8,319.3h1.25v1.25h-1.25zM248.8,324.1h1.25v1.25h-1.25zM248.8,328.9h1.25v1.25h-1.25zM248.8,333.7h1.25v1.25h-1.25zM248.8,348.0h1.25v1.25h-1.25zM248.8,352.8h1.25v1.25h-1.25zM248.8,357.6h1.25v1.25h-1.25zM248.8,362.4h1.25v1.25h-1.25zM248.8,367.2h1.25v1.25h-1.25zM253.6,314.6h1.25v1.25h-1.25zM253.6,319.3h1.25v1.25h-1.25zM253.6,324.1h1.25v1.25h-1.25zM253.6,328.9h1.25v1.25h-1.25zM253.6,333.7h1.25v1.25h-1.25zM253.6,348.0h1.25v1.25h-1.25zM253.6,352.8h1.25v1.25h-1.25zM253.6,357.6h1.25v1.25h-1.25zM253.6,362.4h1.25v1.25h-1.25zM253.6,367.2h1.25v1.25h-1.25zM258.4,314.6h1.25v1.25h-1.25zM258.4,319.3h1.25v1.25h-1.25zM258.4,324.1h1.25v1.25h-1.25zM258.4,328.9h1.25v1.25h-1.25zM258.4,333.7h1.25v1.25h-1.25zM258.4,348.0h1.25v1.25h-1.25zM258.4,352.8h1.25v1.25h-1.25zM258.4,357.6h1.25v1.25h-1.25zM258.4,362.4h1.25v1.25h-1.25zM258.4,367.2h1.25v1.25h-1.25zM263.2,314.6h1.25v1.25h-1.25zM263.2,319.3h1.25v1.25h-1.25zM263.2,324.1h1.25v1.25h-1.25zM263.2,328.9h1.25v1.25h-1.25zM263.2,333.7h1.25v1.25h-1.25zM263.2,348.0h1.25v1.25h-1.25zM263.2,352.8h1.25v1.25h-1.25zM263.2,357.6h1.25v1.25h-1.25zM263.2,362.4h1.25v1.25h-1.25zM263.2,367.2h1.25v1.25h-1.25zM268.0,314.6h1.25v1.25h-1.25zM268.0,319.3h1.25v1.25h-1.25zM268.0,324.1h1.25v1.25h-1.25zM268.0,328.9h1.25v1.25h-1.25zM268.0,333.7h1.25v1.25h-1.25zM268.0,348.0h1.25v1.25h-1.25zM268.0,352.8h1.25v1.25h-1.25zM268.0,357.6h1.25v1.25h-1.25zM268.0,362.4h1.25v1.25h-1.25zM268.0,367.2h1.25v1.25h-1.25zM272.8,314.6h1.25v1.25h-1.25zM272.8,319.3h1.25v1.25h-1.25zM272.8,324.1h1.25v1.25h-1.25zM272.8,328.9h1.25v1.25h-1.25zM272.8,333.7h1.25v1.25h-1.25zM272.8,348.0h1.25v1.25h-1.25zM272.8,352.8h1.25v1.25h-1.25zM272.8,357.6h1.25v1.25h-1.25zM272.8,362.4h1.25v1.25h-1.25zM272.8,367.2h1.25v1.25h-1.25zM277.6,314.6h1.25v1.25h-1.25zM277.6,319.3h1.25v1.25h-1.25zM277.6,324.1h1.25v1.25h-1.25zM277.6,328.9h1.25v1.25h-1.25zM277.6,333.7h1.25v1.25h-1.25zM277.6,348.0h1.25v1.25h-1.25zM277.6,352.8h1.25v1.25h-1.25zM277.6,357.6h1.25v1.25h-1.25zM277.6,362.4h1.25v1.25h-1.25zM277.6,367.2h1.25v1.25h-1.25zM282.3,314.6h1.25v1.25h-1.25zM282.3,319.3h1.25v1.25h-1.25zM282.3,324.1h1.25v1.25h-1.25zM282.3,328.9h1.25v1.25h-1.25zM282.3,333.7h1.25v1.25h-1.25zM282.3,348.0h1.25v1.25h-1.25zM282.3,352.8h1.25v1.25h-1.25zM282.3,357.6h1.25v1.25h-1.25zM282.3,362.4h1.25v1.25h-1.25zM282.3,367.2h1.25v1.25h-1.25zM287.1,314.6h1.25v1.25h-1.25zM287.1,319.3h1.25v1.25h-1.25zM287.1,324.1h1.25v1.25h-1.25zM287.1,328.9h1.25v1.25h-1.25zM287.1,333.7h1.25v1.25h-1.25zM287.1,348.0h1.25v1.25h-1.25zM287.1,352.8h1.25v1.25h-1.25zM287.1,357.6h1.25v1.25h-1.25zM287.1,362.4h1.25v1.25h-1.25zM287.1,367.2h1.25v1.25h-1.25zM291.9,314.6h1.25v1.25h-1.25zM291.9,319.3h1.25v1.25h-1.25zM291.9,324.1h1.25v1.25h-1.25zM291.9,328.9h1.25v1.25h-1.25zM291.9,333.7h1.25v1.25h-1.25zM291.9,348.0h1.25v1.25h-1.25zM291.9,352.8h1.25v1.25h-1.25zM291.9,357.6h1.25v1.25h-1.25zM291.9,362.4h1.25v1.25h-1.25zM291.9,367.2h1.25v1.25h-1.25zM296.7,314.6h1.25v1.25h-1.25zM296.7,319.3h1.25v1.25h-1.25zM296.7,324.1h1.25v1.25h-1.25zM296.7,328.9h1.25v1.25h-1.25zM296.7,333.7h1.25v1.25h-1.25zM296.7,348.0h1.25v1.25h-1.25zM296.7,352.8h1.25v1.25h-1.25zM296.7,357.6h1.25v1.25h-1.25zM296.7,362.4h1.25v1.25h-1.25zM296.7,367.2h1.25v1.25h-1.25zM301.5,314.6h1.25v1.25h-1.25zM301.5,319.3h1.25v1.25h-1.25zM301.5,324.1h1.25v1.25h-1.25zM301.5,328.9h1.25v1.25h-1.25zM301.5,333.7h1.25v1.25h-1.25zM301.5,348.0h1.25v1.25h-1.25zM301.5,352.8h1.25v1.25h-1.25zM301.5,357.6h1.25v1.25h-1.25zM301.5,362.4h1.25v1.25h-1.25zM301.5,367.2h1.25v1.25h-1.25zM306.3,314.6h1.25v1.25h-1.25zM306.3,319.3h1.25v1.25h-1.25zM306.3,324.1h1.25v1.25h-1.25zM306.3,328.9h1.25v1.25h-1.25zM306.3,333.7h1.25v1.25h-1.25zM306.3,348.0h1.25v1.25h-1.25zM306.3,352.8h1.25v1.25h-1.25zM306.3,357.6h1.25v1.25h-1.25zM306.3,362.4h1.25v1.25h-1.25zM306.3,367.2h1.25v1.25h-1.25zM311.1,314.6h1.25v1.25h-1.25zM311.1,319.3h1.25v1.25h-1.25zM311.1,324.1h1.25v1.25h-1.25zM311.1,328.9h1.25v1.25h-1.25zM311.1,333.7h1.25v1.25h-1.25zM311.1,348.0h1.25v1.25h-1.25zM311.1,352.8h1.25v1.25h-1.25zM311.1,357.6h1.25v1.25h-1.25zM311.1,362.4h1.25v1.25h-1.25zM311.1,367.2h1.25v1.25h-1.25zM315.8,314.6h1.25v1.25h-1.25zM315.8,319.3h1.25v1.25h-1.25zM315.8,324.1h1.25v1.25h-1.25zM315.8,328.9h1.25v1.25h-1.25zM315.8,333.7h1.25v1.25h-1.25zM315.8,348.0h1.25v1.25h-1.25zM315.8,352.8h1.25v1.25h-1.25zM315.8,357.6h1.25v1.25h-1.25zM315.8,362.4h1.25v1.25h-1.25zM315.8,367.2h1.25v1.25h-1.25zM320.6,314.6h1.25v1.25h-1.25zM320.6,319.3h1.25v1.25h-1.25zM320.6,324.1h1.25v1.25h-1.25zM320.6,328.9h1.25v1.25h-1.25zM320.6,333.7h1.25v1.25h-1.25zM320.6,348.0h1.25v1.25h-1.25zM320.6,352.8h1.25v1.25h-1.25zM320.6,357.6h1.25v1.25h-1.25zM320.6,362.4h1.25v1.25h-1.25zM320.6,367.2h1.25v1.25h-1.25zM325.4,314.6h1.25v1.25h-1.25zM325.4,319.3h1.25v1.25h-1.25zM325.4,324.1h1.25v1.25h-1.25zM325.4,328.9h1.25v1.25h-1.25zM325.4,333.7h1.25v1.25h-1.25zM325.4,348.0h1.25v1.25h-1.25zM325.4,352.8h1.25v1.25h-1.25zM325.4,357.6h1.25v1.25h-1.25zM325.4,362.4h1.25v1.25h-1.25zM325.4,367.2h1.25v1.25h-1.25zM330.2,314.6h1.25v1.25h-1.25zM330.2,319.3h1.25v1.25h-1.25zM330.2,324.1h1.25v1.25h-1.25zM330.2,328.9h1.25v1.25h-1.25zM330.2,333.7h1.25v1.25h-1.25zM330.2,348.0h1.25v1.25h-1.25zM330.2,352.8h1.25v1.25h-1.25zM330.2,357.6h1.25v1.25h-1.25zM330.2,362.4h1.25v1.25h-1.25zM330.2,367.2h1.25v1.25h-1.25zM335.0,314.6h1.25v1.25h-1.25zM335.0,319.3h1.25v1.25h-1.25zM335.0,324.1h1.25v1.25h-1.25zM335.0,328.9h1.25v1.25h-1.25zM335.0,333.7h1.25v1.25h-1.25zM335.0,348.0h1.25v1.25h-1.25zM335.0,352.8h1.25v1.25h-1.25zM335.0,357.6h1.25v1.25h-1.25zM335.0,362.4h1.25v1.25h-1.25zM335.0,367.2h1.25v1.25h-1.25zM339.8,314.6h1.25v1.25h-1.25zM339.8,319.3h1.25v1.25h-1.25zM339.8,324.1h1.25v1.25h-1.25zM339.8,328.9h1.25v1.25h-1.25zM339.8,333.7h1.25v1.25h-1.25zM339.8,348.0h1.25v1.25h-1.25zM339.8,352.8h1.25v1.25h-1.25zM339.8,357.6h1.25v1.25h-1.25zM339.8,362.4h1.25v1.25h-1.25zM339.8,367.2h1.25v1.25h-1.25zM344.6,314.6h1.25v1.25h-1.25zM344.6,319.3h1.25v1.25h-1.25zM344.6,324.1h1.25v1.25h-1.25zM344.6,328.9h1.25v1.25h-1.25zM344.6,333.7h1.25v1.25h-1.25zM344.6,348.0h1.25v1.25h-1.25zM344.6,352.8h1.25v1.25h-1.25zM344.6,357.6h1.25v1.25h-1.25zM344.6,362.4h1.25v1.25h-1.25zM344.6,367.2h1.25v1.25h-1.25zM349.4,314.6h1.25v1.25h-1.25zM349.4,319.3h1.25v1.25h-1.25zM349.4,324.1h1.25v1.25h-1.25zM349.4,328.9h1.25v1.25h-1.25zM349.4,333.7h1.25v1.25h-1.25zM349.4,348.0h1.25v1.25h-1.25zM349.4,352.8h1.25v1.25h-1.25zM349.4,357.6h1.25v1.25h-1.25zM349.4,362.4h1.25v1.25h-1.25zM349.4,367.2h1.25v1.25h-1.25zM354.1,314.6h1.25v1.25h-1.25zM354.1,319.3h1.25v1.25h-1.25zM354.1,324.1h1.25v1.25h-1.25zM354.1,328.9h1.25v1.25h-1.25zM354.1,333.7h1.25v1.25h-1.25zM354.1,348.0h1.25v1.25h-1.25zM354.1,352.8h1.25v1.25h-1.25zM354.1,357.6h1.25v1.25h-1.25zM354.1,362.4h1.25v1.25h-1.25zM354.1,367.2h1.25v1.25h-1.25zM57.3,295.3h1.25v1.25h-1.25zM57.3,300.3h1.25v1.25h-1.25zM57.3,381.6h1.25v1.25h-1.25zM57.3,386.4h1.25v1.25h-1.25zM62.1,295.3h1.25v1.25h-1.25zM62.1,300.3h1.25v1.25h-1.25zM62.1,381.6h1.25v1.25h-1.25zM62.1,386.4h1.25v1.25h-1.25zM66.9,295.3h1.25v1.25h-1.25zM66.9,300.3h1.25v1.25h-1.25zM66.9,381.6h1.25v1.25h-1.25zM66.9,386.4h1.25v1.25h-1.25zM71.7,295.3h1.25v1.25h-1.25zM71.7,300.3h1.25v1.25h-1.25zM71.7,381.6h1.25v1.25h-1.25zM71.7,386.4h1.25v1.25h-1.25zM76.5,295.3h1.25v1.25h-1.25zM76.5,300.3h1.25v1.25h-1.25zM76.5,381.6h1.25v1.25h-1.25zM76.5,386.4h1.25v1.25h-1.25zM86.1,295.3h1.25v1.25h-1.25zM86.1,300.3h1.25v1.25h-1.25zM86.1,381.6h1.25v1.25h-1.25zM86.1,386.4h1.25v1.25h-1.25zM90.9,295.3h1.25v1.25h-1.25zM90.9,300.3h1.25v1.25h-1.25zM90.9,381.6h1.25v1.25h-1.25zM90.9,386.4h1.25v1.25h-1.25zM95.6,295.3h1.25v1.25h-1.25zM95.6,300.3h1.25v1.25h-1.25zM95.6,381.6h1.25v1.25h-1.25zM95.6,386.4h1.25v1.25h-1.25zM100.4,295.3h1.25v1.25h-1.25zM100.4,300.3h1.25v1.25h-1.25zM100.4,381.6h1.25v1.25h-1.25zM100.4,386.4h1.25v1.25h-1.25zM105.2,295.3h1.25v1.25h-1.25zM105.2,300.3h1.25v1.25h-1.25zM105.2,381.6h1.25v1.25h-1.25zM105.2,386.4h1.25v1.25h-1.25zM114.8,295.3h1.25v1.25h-1.25zM114.8,300.3h1.25v1.25h-1.25zM114.8,381.6h1.25v1.25h-1.25zM114.8,386.4h1.25v1.25h-1.25zM119.6,295.3h1.25v1.25h-1.25zM119.6,300.3h1.25v1.25h-1.25zM119.6,381.6h1.25v1.25h-1.25zM119.6,386.4h1.25v1.25h-1.25zM124.4,295.3h1.25v1.25h-1.25zM124.4,300.3h1.25v1.25h-1.25zM124.4,381.6h1.25v1.25h-1.25zM124.4,386.4h1.25v1.25h-1.25zM129.2,295.3h1.25v1.25h-1.25zM129.2,300.3h1.25v1.25h-1.25zM129.2,381.6h1.25v1.25h-1.25zM129.2,386.4h1.25v1.25h-1.25zM133.9,295.3h1.25v1.25h-1.25zM133.9,300.3h1.25v1.25h-1.25zM133.9,381.6h1.25v1.25h-1.25zM133.9,386.4h1.25v1.25h-1.25zM143.5,295.3h1.25v1.25h-1.25zM143.5,300.3h1.25v1.25h-1.25zM143.5,381.6h1.25v1.25h-1.25zM143.5,386.4h1.25v1.25h-1.25zM148.3,295.3h1.25v1.25h-1.25zM148.3,300.3h1.25v1.25h-1.25zM148.3,381.6h1.25v1.25h-1.25zM148.3,386.4h1.25v1.25h-1.25zM153.1,295.3h1.25v1.25h-1.25zM153.1,300.3h1.25v1.25h-1.25zM153.1,381.6h1.25v1.25h-1.25zM153.1,386.4h1.25v1.25h-1.25zM157.9,295.3h1.25v1.25h-1.25zM157.9,300.3h1.25v1.25h-1.25zM157.9,381.6h1.25v1.25h-1.25zM157.9,386.4h1.25v1.25h-1.25zM162.7,295.3h1.25v1.25h-1.25zM162.7,300.3h1.25v1.25h-1.25zM162.7,381.6h1.25v1.25h-1.25zM162.7,386.4h1.25v1.25h-1.25zM172.2,295.3h1.25v1.25h-1.25zM172.2,300.3h1.25v1.25h-1.25zM172.2,381.6h1.25v1.25h-1.25zM172.2,386.4h1.25v1.25h-1.25zM177.0,295.3h1.25v1.25h-1.25zM177.0,300.3h1.25v1.25h-1.25zM177.0,381.6h1.25v1.25h-1.25zM177.0,386.4h1.25v1.25h-1.25zM181.8,295.3h1.25v1.25h-1.25zM181.8,300.3h1.25v1.25h-1.25zM181.8,381.6h1.25v1.25h-1.25zM181.8,386.4h1.25v1.25h-1.25zM186.6,295.3h1.25v1.25h-1.25zM186.6,300.3h1.25v1.25h-1.25zM186.6,381.6h1.25v1.25h-1.25zM186.6,386.4h1.25v1.25h-1.25zM191.4,295.3h1.25v1.25h-1.25zM191.4,300.3h1.25v1.25h-1.25zM191.4,381.6h1.25v1.25h-1.25zM191.4,386.4h1.25v1.25h-1.25zM205.7,295.3h1.25v1.25h-1.25zM205.7,300.3h1.25v1.25h-1.25zM205.7,381.6h1.25v1.25h-1.25zM205.7,386.4h1.25v1.25h-1.25zM210.5,295.3h1.25v1.25h-1.25zM210.5,300.3h1.25v1.25h-1.25zM210.5,381.6h1.25v1.25h-1.25zM210.5,386.4h1.25v1.25h-1.25zM215.3,295.3h1.25v1.25h-1.25zM215.3,300.3h1.25v1.25h-1.25zM215.3,381.6h1.25v1.25h-1.25zM215.3,386.4h1.25v1.25h-1.25zM220.1,295.3h1.25v1.25h-1.25zM220.1,300.3h1.25v1.25h-1.25zM220.1,381.6h1.25v1.25h-1.25zM220.1,386.4h1.25v1.25h-1.25zM224.9,295.3h1.25v1.25h-1.25zM224.9,300.3h1.25v1.25h-1.25zM224.9,381.6h1.25v1.25h-1.25zM224.9,386.4h1.25v1.25h-1.25zM234.5,295.3h1.25v1.25h-1.25zM234.5,300.3h1.25v1.25h-1.25zM234.5,381.6h1.25v1.25h-1.25zM234.5,386.4h1.25v1.25h-1.25zM239.3,295.3h1.25v1.25h-1.25zM239.3,300.3h1.25v1.25h-1.25zM239.3,381.6h1.25v1.25h-1.25zM239.3,386.4h1.25v1.25h-1.25zM244.0,295.3h1.25v1.25h-1.25zM244.0,300.3h1.25v1.25h-1.25zM244.0,381.6h1.25v1.25h-1.25zM244.0,386.4h1.25v1.25h-1.25zM248.8,295.3h1.25v1.25h-1.25zM248.8,300.3h1.25v1.25h-1.25zM248.8,381.6h1.25v1.25h-1.25zM248.8,386.4h1.25v1.25h-1.25zM253.6,295.3h1.25v1.25h-1.25zM253.6,300.3h1.25v1.25h-1.25zM253.6,381.6h1.25v1.25h-1.25zM253.6,386.4h1.25v1.25h-1.25zM263.2,295.3h1.25v1.25h-1.25zM263.2,300.3h1.25v1.25h-1.25zM263.2,381.6h1.25v1.25h-1.25zM263.2,386.4h1.25v1.25h-1.25zM268.0,295.3h1.25v1.25h-1.25zM268.0,300.3h1.25v1.25h-1.25zM268.0,381.6h1.25v1.25h-1.25zM268.0,386.4h1.25v1.25h-1.25zM272.8,295.3h1.25v1.25h-1.25zM272.8,300.3h1.25v1.25h-1.25zM272.8,381.6h1.25v1.25h-1.25zM272.8,386.4h1.25v1.25h-1.25zM277.6,295.3h1.25v1.25h-1.25zM277.6,300.3h1.25v1.25h-1.25zM277.6,381.6h1.25v1.25h-1.25zM277.6,386.4h1.25v1.25h-1.25zM282.3,295.3h1.25v1.25h-1.25zM282.3,300.3h1.25v1.25h-1.25zM282.3,381.6h1.25v1.25h-1.25zM282.3,386.4h1.25v1.25h-1.25zM291.9,295.3h1.25v1.25h-1.25zM291.9,300.3h1.25v1.25h-1.25zM291.9,381.6h1.25v1.25h-1.25zM291.9,386.4h1.25v1.25h-1.25zM296.7,295.3h1.25v1.25h-1.25zM296.7,300.3h1.25v1.25h-1.25zM296.7,381.6h1.25v1.25h-1.25zM296.7,386.4h1.25v1.25h-1.25zM301.5,295.3h1.25v1.25h-1.25zM301.5,300.3h1.25v1.25h-1.25zM301.5,381.6h1.25v1.25h-1.25zM301.5,386.4h1.25v1.25h-1.25zM306.3,295.3h1.25v1.25h-1.25zM306.3,300.3h1.25v1.25h-1.25zM306.3,381.6h1.25v1.25h-1.25zM306.3,386.4h1.25v1.25h-1.25zM311.1,295.3h1.25v1.25h-1.25zM311.1,300.3h1.25v1.25h-1.25zM311.1,381.6h1.25v1.25h-1.25zM311.1,386.4h1.25v1.25h-1.25zM320.6,295.3h1.25v1.25h-1.25zM320.6,300.3h1.25v1.25h-1.25zM320.6,381.6h1.25v1.25h-1.25zM320.6,386.4h1.25v1.25h-1.25zM325.4,295.3h1.25v1.25h-1.25zM325.4,300.3h1.25v1.25h-1.25zM325.4,381.6h1.25v1.25h-1.25zM325.4,386.4h1.25v1.25h-1.25zM330.2,295.3h1.25v1.25h-1.25zM330.2,300.3h1.25v1.25h-1.25zM330.2,381.6h1.25v1.25h-1.25zM330.2,386.4h1.25v1.25h-1.25zM335.0,295.3h1.25v1.25h-1.25zM335.0,300.3h1.25v1.25h-1.25zM335.0,381.6h1.25v1.25h-1.25zM335.0,386.4h1.25v1.25h-1.25zM339.8,295.3h1.25v1.25h-1.25zM339.8,300.3h1.25v1.25h-1.25zM339.8,381.6h1.25v1.25h-1.25zM339.8,386.4h1.25v1.25h-1.25z" fill="#5c5c5c"/>
<rect x="51.3" y="295.5" width="2.4" height="0.8" fill="#b8d4ee"/>
<rect x="51.3" y="300.5" width="2.4" height="0.8" fill="#f2b8b8"/>
<rect x="51.3" y="381.8" width="2.4" height="0.8" fill="#b8d4ee"/>
<rect x="51.3" y="386.6" width="2.4" height="0.8" fill="#f2b8b8"/>
<rect x="362.1" y="175.4" width="327.1" height="107.3" rx="2" fill="#e1e1e1"/>
<path d="M374.2,202.1h1.25v1.25h-1.25zM374.2,206.8h1.25v1.25h-1.25zM374.2,211.6h1.25v1.25h-1.25zM374.2,216.4h1.25v1.25h-1.25zM374.2,221.2h1.25v1.25h-1.25zM374.2,235.5h1.25v1.25h-1.25zM374.2,240.3h1.25v1.25h-1.25zM374.2,245.1h1.25v1.25h-1.25zM374.2,249.9h1.25v1.25h-1.25zM374.2,254.7h1.25v1.25h-1.25zM379.0,202.1h1.25v1.25h-1.25zM379.0,206.8h1.25v1.25h-1.25zM379.0,211.6h1.25v1.25h-1.25zM379.0,216.4h1.25v1.25h-1.25zM379.0,221.2h1.25v1.25h-1.25zM379.0,235.5h1.25v1.25h-1.25zM379.0,240.3h1.25v1.25h-1.25zM379.0,245.1h1.25v1.25h-1.25zM379.0,249.9h1.25v1.25h-1.25zM379.0,254.7h1.25v1.25h-1.25zM383.7,202.1h1.25v1.25h-1.25zM383.7,206.8h1.25v1.25h-1.25zM383.7,211.6h1.25v1.25h-1.25zM383.7,216.4h1.25v1.25h-1.25zM383.7,221.2h1.25v1.25h-1.25zM383.7,235.5h1.25v1.25h-1.25zM383.7,240.3h1.25v1.25h-1.25zM383.7,245.1h1.25v1.25h-1.25zM383.7,249.9h1.25v1.25h-1.25zM383.7,254.7h1.25v1.25h-1.25zM388.5,202.1h1.25v1.25h-1.25zM388.5,206.8h1.25v1.25h-1.25zM388.5,211.6h1.25v1.25h-1.25zM388.5,216.4h1.25v1.25h-1.25zM388.5,221.2h1.25v1.25h-1.25zM388.5,235.5h1.25v1.25h-1.25zM388.5,240.3h1.25v1.25h-1.25zM388.5,245.1h1.25v1.25h-1.25zM388.5,249.9h1.25v1.25h-1.25zM388.5,254.7h1.25v1.25h-1.25zM393.3,202.1h1.25v1.25h-1.25zM393.3,206.8h1.25v1.25h-1.25zM393.3,211.6h1.25v1.25h-1.25zM393.3,216.4h1.25v1.25h-1.25zM393.3,221.2h1.25v1.25h-1.25zM393.3,235.5h1.25v1.25h-1.25zM393.3,240.3h1.25v1.25h-1.25zM393.3,245.1h1.25v1.25h-1.25zM393.3,249.9h1.25v1.25h-1.25zM393.3,254.7h1.25v1.25h-1.25zM398.1,202.1h1.25v1.25h-1.25zM398.1,206.8h1.25v1.25h-1.25zM398.1,211.6h1.25v1.25h-1.25zM398.1,216.4h1.25v1.25h-1.25zM398.1,221.2h1.25v1.25h-1.25zM398.1,235.5h1.25v1.25h-1.25zM398.1,240.3h1.25v1.25h-1.25zM398.1,245.1h1.25v1.25h-1.25zM398.1,249.9h1.25v1.25h-1.25zM398.1,254.7h1.25v1.25h-1.25zM402.9,202.1h1.25v1.25h-1.25zM402.9,206.8h1.25v1.25h-1.25zM402.9,211.6h1.25v1.25h-1.25zM402.9,216.4h1.25v1.25h-1.25zM402.9,221.2h1.25v1.25h-1.25zM402.9,235.5h1.25v1.25h-1.25zM402.9,240.3h1.25v1.25h-1.25zM402.9,245.1h1.25v1.25h-1.25zM402.9,249.9h1.25v1.25h-1.25zM402.9,254.7h1.25v1.25h-1.25zM407.7,202.1h1.25v1.25h-1.25zM407.7,206.8h1.25v1.25h-1.25zM407.7,211.6h1.25v1.25h-1.25zM407.7,216.4h1.25v1.25h-1.25zM407.7,221.2h1.25v1.25h-1.25zM407.7,235.5h1.25v1.25h-1.25zM407.7,240.3h1.25v1.25h-1.25zM407.7,245.1h1.25v1.25h-1.25zM407.7,249.9h1.25v1.25h-1.25zM407.7,254.7h1.25v1.25h-1.25zM412.5,202.1h1.25v1.25h-1.25zM412.5,206.8h1.25v1.25h-1.25zM412.5,211.6h1.25v1.25h-1.25zM412.5,216.4h1.25v1.25h-1.25zM412.5,221.2h1.25v1.25h-1.25zM412.5,235.5h1.25v1.25h-1.25zM412.5,240.3h1.25v1.25h-1.25zM412.5,245.1h1.25v1.25h-1.25zM412.5,249.9h1.25v1.25h-1.25zM412.5,254.7h1.25v1.25h-1.25zM417.3,202.1h1.25v1.25h-1.25zM417.3,206.8h1.25v1.25h-1.25zM417.3,211.6h1.25v1.25h-1.25zM417.3,216.4h1.25v1.25h-1.25zM417.3,221.2h1.25v1.25h-1.25zM417.3,235.5h1.25v1.25h-1.25zM417.3,240.3h1.25v1.25h-1.25zM417.3,245.1h1.25v1.25h-1.25zM417.3,249.9h1.25v1.25h-1.25zM417.3,254.7h1.25v1.25h-1.25zM422.0,202.1h1.25v1.25h-1.25zM422.0,206.8h1.25v1.25h-1.25zM422.0,211.6h1.25v1.25h-1.25zM422.0,216.4h1.25v1.25h-1.25zM422.0,221.2h1.25v1.25h-1.25zM422.0,235.5h1.25v1.25h-1.25zM422.0,240.3h1.25v1.25h-1.25zM422.0,245.1h1.25v1.25h-1.25zM422.0,249.9h1.25v1.25h-1.25zM422.0,254.7h1.25v1.25h-1.25zM426.8,202.1h1.25v1.25h-1.25zM426.8,206.8h1.25v1.25h-1.25zM426.8,211.6h1.25v1.25h-1.25zM426.8,216.4h1.25v1.25h-1.25zM426.8,221.2h1.25v1.25h-1.25zM426.8,235.5h1.25v1.25h-1.25zM426.8,240.3h1.25v1.25h-1.25zM426.8,245.1h1.25v1.25h-1.25zM426.8,249.9h1.25v1.25h-1.25zM426.8,254.7h1.25v1.25h-1.25zM431.6,202.1h1.25v1.25h-1.25zM431.6,206.8h1.25v1.25h-1.25zM431.6,211.6h1.25v1.25h-1.25zM431.6,216.4h1.25v1.25h-1.25zM431.6,221.2h1.25v1.25h-1.25zM431.6,235.5h1.25v1.25h-1.25zM431.6,240.3h1.25v1.25h-1.25zM431.6,245.1h1.25v1.25h-1.25zM431.6,249.9h1.25v1.25h-1.25zM431.6,254.7h1.25v1.25h-1.25zM436.4,202.1h1.25v1.25h-1.25zM436.4,206.8h1.25v1.25h-1.25zM436.4,211.6h1.25v1.25h-1.25zM436.4,216.4h1.25v1.25h-1.25zM436.4,221.2h1.25v1.25h-1.25zM436.4,235.5h1.25v1.25h-1.25zM436.4,240.3h1.25v1.25h-1.25zM436.4,245.1h1.25v1.25h-1.25zM436.4,249.9h1.25v1.25h-1.25zM436.4,254.7h1.25v1.25h-1.25zM441.2,202.1h1.25v1.25h-1.25zM441.2,206.8h1.25v1.25h-1.25zM441.2,211.6h1.25v1.25h-1.25zM441.2,216.4h1.25v1.25h-1.25zM441.2,221.2h1.25v1.25h-1.25zM441.2,235.5h1.25v1.25h-1.25zM441.2,240.3h1.25v1.25h-1.25zM441.2,245.1h1.25v1.25h-1.25zM441.2,249.9h1.25v1.25h-1.25zM441.2,254.7h1.25v1.25h-1.25zM446.0,202.1h1.25v1.25h-1.25zM446.0,206.8h1.25v1.25h-1.25zM446.0,211.6h1.25v1.25h-1.25zM446.0,216.4h1.25v1.25h-1.25zM446.0,221.2h1.25v1.25h-1.25zM446.0,235.5h1.25v1.25h-1.25zM446.0,240.3h1.25v1.25h-1.25zM446.0,245.1h1.25v1.25h-1.25zM446.0,249.9h1.25v1.25h-1.25zM446.0,254.7h1.25v1.25h-1.25zM450.8,202.1h1.25v1.25h-1.25zM450.8,206.8h1.25v1.25h-1.25zM450.8,211.6h1.25v1.25h-1.25zM450.8,216.4h1.25v1.25h-1.25zM450.8,221.2h1.25v1.25h-1.25zM450.8,235.5h1.25v1.25h-1.25zM450.8,240.3h1.25v1.25h-1.25zM450.8,245.1h1.25v1.25h-1.25zM450.8,249.9h1.25v1.25h-1.25zM450.8,254.7h1.25v1.25h-1.25zM455.6,202.1h1.25v1.25h-1.25zM455.6,206.8h1.25v1.25h-1.25zM455.6,211.6h1.25v1.25h-1.25zM455.6,216.4h1.25v1.25h-1.25zM455.6,221.2h1.25v1.25h-1.25zM455.6,235.5h1.25v1.25h-1.25zM455.6,240.3h1.25v1.25h-1.25zM455.6,245.1h1.25v1.25h-1.25zM455.6,249.9h1.25v1.25h-1.25zM455.6,254.7h1.25v1.25h-1.25zM460.3,202.1h1.25v1.25h-1.25zM460.3,206.8h1.25v1.25h-1.25zM460.3,211.6h1.25v1.25h-1.25zM460.3,216.4h1.25v1.25h-1.25zM460.3,221.2h1.25v1.25h-1.25zM460.3,235.5h1.25v1.25h-1.25zM460.3,240.3h1.25v1.25h-1.25zM460.3,245.1h1.25v1.25h-1.25zM460.3,249.9h1.25v1.25h-1.25zM460.3,254.7h1.25v1.25h-1.25zM465.1,202.1h1.25v1.25h-1.25zM465.1,206.8h1.25v1.25h-1.25zM465.1,211.6h1.25v1.25h-1.25zM465.1,216.4h1.25v1.25h-1.25zM465.1,221.2h1.25v1.25h-1.25zM465.1,235.5h1.25v1.25h-1.25zM465.1,240.3h1.25v1.25h-1.25zM465.1,245.1h1.25v1.25h-1.25zM465.1,249.9h1.25v1.25h-1.25zM465.1,254.7h1.25v1.25h-1.25zM469.9,202.1h1.25v1.25h-1.25zM469.9,206.8h1.25v1.25h-1.25zM469.9,211.6h1.25v1.25h-1.25zM469.9,216.4h1.25v1.25h-1.25zM469.9,221.2h1.25v1.25h-1.25zM469.9,235.5h1.25v1.25h-1.25zM469.9,240.3h1.25v1.25h-1.25zM469.9,245.1h1.25v1.25h-1.25zM469.9,249.9h1.25v1.25h-1.25zM469.9,254.7h1.25v1.25h-1.25zM474.7,202.1h1.25v1.25h-1.25zM474.7,206.8h1.25v1.25h-1.25zM474.7,211.6h1.25v1.25h-1.25zM474.7,216.4h1.25v1.25h-1.25zM474.7,221.2h1.25v1.25h-1.25zM474.7,235.5h1.25v1.25h-1.25zM474.7,240.3h1.25v1.25h-1.25zM474.7,245.1h1.25v1.25h-1.25zM474.7,249.9h1.25v1.25h-1.25zM474.7,254.7h1.25v1.25h-1.25zM479.5,202.1h1.25v1.25h-1.25zM479.5,206.8h1.25v1.25h-1.25zM479.5,211.6h1.25v1.25h-1.25zM479.5,216.4h1.25v1.25h-1.25zM479.5,221.2h1.25v1.25h-1.25zM479.5,235.5h1.25v1.25h-1.25zM479.5,240.3h1.25v1.25h-1.25zM479.5,245.1h1.25v1.25h-1.25zM479.5,249.9h1.25v1.25h-1.25zM479.5,254.7h1.25v1.25h-1.25zM484.3,202.1h1.25v1.25h-1.25zM484.3,206.8h1.25v1.25h-1.25zM484.3,211.6h1.25v1.25h-1.25zM484.3,216.4h1.25v1.25h-1.25zM484.3,221.2h1.25v1.25h-1.25zM484.3,235.5h1.25v1.25h-1.25zM484.3,240.3h1.25v1.25h-1.25zM484.3,245.1h1.25v1.25h-1.25zM484.3,249.9h1.25v1.25h-1.25zM484.3,254.7h1.25v1.25h-1.25zM489.1,202.1h1.25v1.25h-1.25zM489.1,206.8h1.25v1.25h-1.25zM489.1,211.6h1.25v1.25h-1.25zM489.1,216.4h1.25v1.25h-1.25zM489.1,221.2h1.25v1.25h-1.25zM489.1,235.5h1.25v1.25h-1.25zM489.1,240.3h1.25v1.25h-1.25zM489.1,245.1h1.25v1.25h-1.25zM489.1,249.9h1.25v1.25h-1.25zM489.1,254.7h1.25v1.25h-1.25zM493.9,202.1h1.25v1.25h-1.25zM493.9,206.8h1.25v1.25h-1.25zM493.9,211.6h1.25v1.25h-1.25zM493.9,216.4h1.25v1.25h-1.25zM493.9,221.2h1.25v1.25h-1.25zM493.9,235.5h1.25v1.25h-1.25zM493.9,240.3h1.25v1.25h-1.25zM493.9,245.1h1.25v1.25h-1.25zM493.9,249.9h1.25v1.25h-1.25zM493.9,254.7h1.25v1.25h-1.25zM498.6,202.1h1.25v1.25h-1.25zM498.6,206.8h1.25v1.25h-1.25zM498.6,211.6h1.25v1.25h-1.25zM498.6,216.4h1.25v1.25h-1.25zM498.6,221.2h1.25v1.25h-1.25zM498.6,235.5h1.25v1.25h-1.25zM498.6,240.3h1.25v1.25h-1.25zM498.6,245.1h1.25v1.25h-1.25zM498.6,249.9h1.25v1.25h-1.25zM498.6,254.7h1.25v1.25h-1.25zM503.4,202.1h1.25v1.25h-1.25zM503.4,206.8h1.25v1.25h-1.25zM503.4,211.6h1.25v1.25h-1.25zM503.4,216.4h1.25v1.25h-1.25zM503.4,221.2h1.25v1.25h-1.25zM503.4,235.5h1.25v1.25h-1.25zM503.4,240.3h1.25v1.25h-1.25zM503.4,245.1h1.25v1.25h-1.25zM503.4,249.9h1.25v1.25h-1.25zM503.4,254.7h1.25v1.25h-1.25zM508.2,202.1h1.25v1.25h-1.25zM508.2,206.8h1.25v1.25h-1.25zM508.2,211.6h1.25v1.25h-1.25zM508.2,216.4h1.25v1.25h-1.25zM508.2,221.2h1.25v1.25h-1.25zM508.2,235.5h1.25v1.25h-1.25zM508.2,240.3h1.25v1.25h-1.25zM508.2,245.1h1.25v1.25h-1.25zM508.2,249.9h1.25v1.25h-1.25zM508.2,254.7h1.25v1.25h-1.25zM513.0,202.1h1.25v1.25h-1.25zM513.0,206.8h1.25v1.25h-1.25zM513.0,211.6h1.25v1.25h-1.25zM513.0,216.4h1.25v1.25h-1.25zM513.0,221.2h1.25v1.25h-1.25zM513.0,235.5h1.25v1.25h-1.25zM513.0,240.3h1.25v1.25h-1.25zM513.0,245.1h1.25v1.25h-1.25zM513.0,249.9h1.25v1.25h-1.25zM513.0,254.7h1.25v1.25h-1.25zM517.8,202.1h1.25v1.25h-1.25zM517.8,206.8h1.25v1.25h-1.25zM517.8,211.6h1.25v1.25h-1.25zM517.8,216.4h1.25v1.25h-1.25zM517.8,221.2h1.25v1.25h-1.25zM517.8,235.5h1.25v1.25h-1.25zM517.8,240.3h1.25v1.25h-1.25zM517.8,245.1h1.25v1.25h-1.25zM517.8,249.9h1.25v1.25h-1.25zM517.8,254.7h1.25v1.25h-1.25zM522.6,202.1h1.25v1.25h-1.25zM522.6,206.8h1.25v1.25h-1.25zM522.6,211.6h1.25v1.25h-1.25zM522.6,216.4h1.25v1.25h-1.25zM522.6,221.2h1.25v1.25h-1.25zM522.6,235.5h1.25v1.25h-1.25zM522.6,240.3h1.25v1.25h-1.25zM522.6,245.1h1.25v1.25h-1.25zM522.6,249.9h1.25v1.25h-1.25zM522.6,254.7h1.25v1.25h-1.25zM527.4,202.1h1.25v1.25h-1.25zM527.4,206.8h1.25v1.25h-1.25zM527.4,211.6h1.25v1.25h-1.25zM527.4,216.4h1.25v1.25h-1.25zM527.4,221.2h1.25v1.25h-1.25zM527.4,235.5h1.25v1.25h-1.25zM527.4,240.3h1.25v1.25h-1.25zM527.4,245.1h1.25v1.25h-1.25zM527.4,249.9h1.25v1.25h-1.25zM527.4,254.7h1.25v1.25h-1.25zM532.1,202.1h1.25v1.25h-1.25zM532.1,206.8h1.25v1.25h-1.25zM532.1,211.6h1.25v1.25h-1.25zM532.1,216.4h1.25v1.25h-1.25zM532.1,221.2h1.25v1.25h-1.25zM532.1,235.5h1.25v1.25h-1.25zM532.1,240.3h1.25v1.25h-1.25zM532.1,245.1h1.25v1.25h-1.25zM532.1,249.9h1.25v1.25h-1.25zM532.1,254.7h1.25v1.25h-1.25zM536.9,202.1h1.25v1.25h-1.25zM536.9,206.8h1.25v1.25h-1.25zM536.9,211.6h1.25v1.25h-1.25zM536.9,216.4h1.25v1.25h-1.25zM536.9,221.2h1.25v1.25h-1.25zM536.9,235.5h1.25v1.25h-1.25zM536.9,240.3h1.25v1.25h-1.25zM536.9,245.1h1.25v1.25h-1.25zM536.9,249.9h1.25v1.25h-1.25zM536.9,254.7h1.25v1.25h-1.25zM541.7,202.1h1.25v1.25h-1.25zM541.7,206.8h1.25v1.25h-1.25zM541.7,211.6h1.25v1.25h-1.25zM541.7,216.4h1.25v1.25h-1.25zM541.7,221.2h1.25v1.25h-1.25zM541.7,235.5h1.25v1.25h-1.25zM541.7,240.3h1.25v1.25h-1.25zM541.7,245.1h1.25v1.25h-1.25zM541.7,249.9h1.25v1.25h-1.25zM541.7,254.7h1.25v1.25h-1.25zM546.5,202.1h1.25v1.25h-1.25zM546.5,206.8h1.25v1.25h-1.25zM546.5,211.6h1.25v1.25h-1.25zM546.5,216.4h1.25v1.25h-1.25zM546.5,221.2h1.25v1.25h-1.25zM546.5,235.5h1.25v1.25h-1.25zM546.5,240.3h1.25v1.25h-1.25zM546.5,245.1h1.25v1.25h-1.25zM546.5,249.9h1.25v1.25h-1.25zM546.5,254.7h1.25v1.25h-1.25zM551.3,202.1h1.25v1.25h-1.25zM551.3,206.8h1.25v1.25h-1.25zM551.3,211.6h1.25v1.25h-1.25zM551.3,216.4h1.25v1.25h-1.25zM551.3,221.2h1.25v1.25h-1.25zM551.3,235.5h1.25v1.25h-1.25zM551.3,240.3h1.25v1.25h-1.25zM551.3,245.1h1.25v1.25h-1.25zM551.3,249.9h1.25v1.25h-1.25zM551.3,254.7h1.25v1.25h-1.25zM556.1,202.1h1.25v1.25h-1.25zM556.1,206.8h1.25v1.25h-1.25zM556.1,211.6h1.25v1.25h-1.25zM556.1,216.4h1.25v1.25h-1.25zM556.1,221.2h1.25v1.25h-1.25zM556.1,235.5h1.25v1.25h-1.25zM556.1,240.3h1.25v1.25h-1.25zM556.1,245.1h1.25v1.25h-1.25zM556.1,249.9h1.25v1.25h-1.25zM556.1,254.7h1.25v1.25h-1.25zM560.9,202.1h1.25v1.25h-1.25zM560.9,206.8h1.25v1.25h-1.25zM560.9,211.6h1.25v1.25h-1.25zM560.9,216.4h1.25v1.25h-1.25zM560.9,221.2h1.25v1.25h-1.25zM560.9,235.5h1.25v1.25h-1.25zM560.9,240.3h1.25v1.25h-1.25zM560.9,245.1h1.25v1.25h-1.25zM560.9,249.9h1.25v1.25h-1.25zM560.9,254.7h1.25v1.25h-1.25zM565.7,202.1h1.25v1.25h-1.25zM565.7,206.8h1.25v1.25h-1.25zM565.7,211.6h1.25v1.25h-1.25zM565.7,216.4h1.25v1.25h-1.25zM565.7,221.2h1.25v1.25h-1.25zM565.7,235.5h1.25v1.25h-1.25zM565.7,240.3h1.25v1.25h-1.25zM565.7,245.1h1.25v1.25h-1.25zM565.7,249.9h1.25v1.25h-1.25zM565.7,254.7h1.25v1.25h-1.25zM570.4,202.1h1.25v1.25h-1.25zM570.4,206.8h1.25v1.25h-1.25zM570.4,211.6h1.25v1.25h-1.25zM570.4,216.4h1.25v1.25h-1.25zM570.4,221.2h1.25v1.25h-1.25zM570.4,235.5h1.25v1.25h-1.25zM570.4,240.3h1.25v1.25h-1.25zM570.4,245.1h1.25v1.25h-1.25zM570.4,249.9h1.25v1.25h-1.25zM570.4,254.7h1.25v1.25h-1.25zM575.2,202.1h1.25v1.25h-1.25zM575.2,206.8h1.25v1.25h-1.25zM575.2,211.6h1.25v1.25h-1.25zM575.2,216.4h1.25v1.25h-1.25zM575.2,221.2h1.25v1.25h-1.25zM575.2,235.5h1.25v1.25h-1.25zM575.2,240.3h1.25v1.25h-1.25zM575.2,245.1h1.25v1.25h-1.25zM575.2,249.9h1.25v1.25h-1.25zM575.2,254.7h1.25v1.25h-1.25zM580.0,202.1h1.25v1.25h-1.25zM580.0,206.8h1.25v1.25h-1.25zM580.0,211.6h1.25v1.25h-1.25zM580.0,216.4h1.25v1.25h-1.25zM580.0,221.2h1.25v1.25h-1.25zM580.0,235.5h1.25v1.25h-1.25zM580.0,240.3h1.25v1.25h-1.25zM580.0,245.1h1.25v1.25h-1.25zM580.0,249.9h1.25v1.25h-1.25zM580.0,254.7h1.25v1.25h-1.25zM584.8,202.1h1.25v1.25h-1.25zM584.8,206.8h1.25v1.25h-1.25zM584.8,211.6h1.25v1.25h-1.25zM584.8,216.4h1.25v1.25h-1.25zM584.8,221.2h1.25v1.25h-1.25zM584.8,235.5h1.25v1.25h-1.25zM584.8,240.3h1.25v1.25h-1.25zM584.8,245.1h1.25v1.25h-1.25zM584.8,249.9h1.25v1.25h-1.25zM584.8,254.7h1.25v1.25h-1.25zM589.6,202.1h1.25v1.25h-1.25zM589.6,206.8h1.25v1.25h-1.25zM589.6,211.6h1.25v1.25h-1.25zM589.6,216.4h1.25v1.25h-1.25zM589.6,221.2h1.25v1.25h-1.25zM589.6,235.5h1.25v1.25h-1.25zM589.6,240.3h1.25v1.25h-1.25zM589.6,245.1h1.25v1.25h-1.25zM589.6,249.9h1.25v1.25h-1.25zM589.6,254.7h1.25v1.25h-1.25zM594.4,202.1h1.25v1.25h-1.25zM594.4,206.8h1.25v1.25h-1.25zM594.4,211.6h1.25v1.25h-1.25zM594.4,216.4h1.25v1.25h-1.25zM594.4,221.2h1.25v1.25h-1.25zM594.4,235.5h1.25v1.25h-1.25zM594.4,240.3h1.25v1.25h-1.25zM594.4,245.1h1.25v1.25h-1.25zM594.4,249.9h1.25v1.25h-1.25zM594.4,254.7h1.25v1.25h-1.25zM599.2,202.1h1.25v1.25h-1.25zM599.2,206.8h1.25v1.25h-1.25zM599.2,211.6h1.25v1.25h-1.25zM599.2,216.4h1.25v1.25h-1.25zM599.2,221.2h1.25v1.25h-1.25zM599.2,235.5h1.25v1.25h-1.25zM599.2,240.3h1.25v1.25h-1.25zM599.2,245.1h1.25v1.25h-1.25zM599.2,249.9h1.25v1.25h-1.25zM599.2,254.7h1.25v1.25h-1.25zM604.0,202.1h1.25v1.25h-1.25zM604.0,206.8h1.25v1.25h-1.25zM604.0,211.6h1.25v1.25h-1.25zM604.0,216.4h1.25v1.25h-1.25zM604.0,221.2h1.25v1.25h-1.25zM604.0,235.5h1.25v1.25h-1.25zM604.0,240.3h1.25v1.25h-1.25zM604.0,245.1h1.25v1.25h-1.25zM604.0,249.9h1.25v1.25h-1.25zM604.0,254.7h1.25v1.25h-1.25zM608.7,202.1h1.25v1.25h-1.25zM608.7,206.8h1.25v1.25h-1.25zM608.7,211.6h1.25v1.25h-1.25zM608.7,216.4h1.25v1.25h-1.25zM608.7,221.2h1.25v1.25h-1.25zM608.7,235.5h1.25v1.25h-1.25zM608.7,240.3h1.25v1.25h-1.25zM608.7,245.1h1.25v1.25h-1.25zM608.7,249.9h1.25v1.25h-1.25zM608.7,254.7h1.25v1.25h-1.25zM613.5,202.1h1.25v1.25h-1.25zM613.5,206.8h1.25v1.25h-1.25zM613.5,211.6h1.25v1.25h-1.25zM613.5,216.4h1.25v1.25h-1.25zM613.5,221.2h1.25v1.25h-1.25zM613.5,235.5h1.25v1.25h-1.25zM613.5,240.3h1.25v1.25h-1.25zM613.5,245.1h1.25v1.25h-1.25zM613.5,249.9h1.25v1.25h-1.25zM613.5,254.7h1.25v1.25h-1.25zM618.3,202.1h1.25v1.25h-1.25zM618.3,206.8h1.25v1.25h-1.25zM618.3,211.6h1.25v1.25h-1.25zM618.3,216.4h1.25v1.25h-1.25zM618.3,221.2h1.25v1.25h-1.25zM618.3,235.5h1.25v1.25h-1.25zM618.3,240.3h1.25v1.25h-1.25zM618.3,245.1h1.25v1.25h-1.25zM618.3,249.9h1.25v1.25h-1.25zM618.3,254.7h1.25v1.25h-1.25zM623.1,202.1h1.25v1.25h-1.25zM623.1,206.8h1.25v1.25h-1.25zM623.1,211.6h1.25v1.25h-1.25zM623.1,216.4h1.25v1.25h-1.25zM623.1,221.2h1.25v1.25h-1.25zM623.1,235.5h1.25v1.25h-1.25zM623.1,240.3h1.25v1.25h-1.25zM623.1,245.1h1.25v1.25h-1.25zM623.1,249.9h1.25v1.25h-1.25zM623.1,254.7h1.25v1.25h-1.25zM627.9,202.1h1.25v1.25h-1.25zM627.9,206.8h1.25v1.25h-1.25zM627.9,211.6h1.25v1.25h-1.25zM627.9,216.4h1.25v1.25h-1.25zM627.9,221.2h1.25v1.25h-1.25zM627.9,235.5h1.25v1.25h-1.25zM627.9,240.3h1.25v1.25h-1.25zM627.9,245.1h1.25v1.25h-1.25zM627.9,249.9h1.25v1.25h-1.25zM627.9,254.7h1.25v1.25h-1.25zM632.7,202.1h1.25v1.25h-1.25zM632.7,206.8h1.25v1.25h-1.25zM632.7,211.6h1.25v1.25h-1.25zM632.7,216.4h1.25v1.25h-1.25zM632.7,221.2h1.25v1.25h-1.25zM632.7,235.5h1.25v1.25h-1.25zM632.7,240.3h1.25v1.25h-1.25zM632.7,245.1h1.25v1.25h-1.25zM632.7,249.9h1.25v1.25h-1.25zM632.7,254.7h1.25v1.25h-1.25zM637.5,202.1h1.25v1.25h-1.25zM637.5,206.8h1.25v1.25h-1.25zM637.5,211.6h1.25v1.25h-1.25zM637.5,216.4h1.25v1.25h-1.25zM637.5,221.2h1.25v1.25h-1.25zM637.5,235.5h1.25v1.25h-1.25zM637.5,240.3h1.25v1.25h-1.25zM637.5,245.1h1.25v1.25h-1.25zM637.5,249.9h1.25v1.25h-1.25zM637.5,254.7h1.25v1.25h-1.25zM642.2,202.1h1.25v1.25h-1.25zM642.2,206.8h1.25v1.25h-1.25zM642.2,211.6h1.25v1.25h-1.25zM642.2,216.4h1.25v1.25h-1.25zM642.2,221.2h1.25v1.25h-1.25zM642.2,235.5h1.25v1.25h-1.25zM642.2,240.3h1.25v1.25h-1.25zM642.2,245.1h1.25v1.25h-1.25zM642.2,249.9h1.25v1.25h-1.25zM642.2,254.7h1.25v1.25h-1.25zM647.0,202.1h1.25v1.25h-1.25zM647.0,206.8h1.25v1.25h-1.25zM647.0,211.6h1.25v1.25h-1.25zM647.0,216.4h1.25v1.25h-1.25zM647.0,221.2h1.25v1.25h-1.25zM647.0,235.5h1.25v1.25h-1.25zM647.0,240.3h1.25v1.25h-1.25zM647.0,245.1h1.25v1.25h-1.25zM647.0,249.9h1.25v1.25h-1.25zM647.0,254.7h1.25v1.25h-1.25zM651.8,202.1h1.25v1.25h-1.25zM651.8,206.8h1.25v1.25h-1.25zM651.8,211.6h1.25v1.25h-1.25zM651.8,216.4h1.25v1.25h-1.25zM651.8,221.2h1.25v1.25h-1.25zM651.8,235.5h1.25v1.25h-1.25zM651.8,240.3h1.25v1.25h-1.25zM651.8,245.1h1.25v1.25h-1.25zM651.8,249.9h1.25v1.25h-1.25zM651.8,254.7h1.25v1.25h-1.25zM656.6,202.1h1.25v1.25h-1.25zM656.6,206.8h1.25v1.25h-1.25zM656.6,211.6h1.25v1.25h-1.25zM656.6,216.4h1.25v1.25h-1.25zM656.6,221.2h1.25v1.25h-1.25zM656.6,235.5h1.25v1.25h-1.25zM656.6,240.3h1.25v1.25h-1.25zM656.6,245.1h1.25v1.25h-1.25zM656.6,249.9h1.25v1.25h-1.25zM656.6,254.7h1.25v1.25h-1.25zM661.4,202.1h1.25v1.25h-1.25zM661.4,206.8h1.25v1.25h-1.25zM661.4,211.6h1.25v1.25h-1.25zM661.4,216.4h1.25v1.25h-1.25zM661.4,221.2h1.25v1.25h-1.25zM661.4,235.5h1.25v1.25h-1.25zM661.4,240.3h1.25v1.25h-1.25zM661.4,245.1h1.25v1.25h-1.25zM661.4,249.9h1.25v1.25h-1.25zM661.4,254.7h1.25v1.25h-1.25zM666.2,202.1h1.25v1.25h-1.25zM666.2,206.8h1.25v1.25h-1.25zM666.2,211.6h1.25v1.25h-1.25zM666.2,216.4h1.25v1.25h-1.25zM666.2,221.2h1.25v1.25h-1.25zM666.2,235.5h1.25v1.25h-1.25zM666.2,240.3h1.25v1.25h-1.25zM666.2,245.1h1.25v1.25h-1.25zM666.2,249.9h1.25v1.25h-1.25zM666.2,254.7h1.25v1.25h-1.25zM671.0,202.1h1.25v1.25h-1.25zM671.0,206.8h1.25v1.25h-1.25zM671.0,211.6h1.25v1.25h-1.25zM671.0,216.4h1.25v1.25h-1.25zM671.0,221.2h1.25v1.25h-1.25zM671.0,235.5h1.25v1.25h-1.25zM671.0,240.3h1.25v1.25h-1.25zM671.0,245.1h1.25v1.25h-1.25zM671.0,249.9h1.25v1.25h-1.25zM671.0,254.7h1.25v1.25h-1.25zM675.8,202.1h1.25v1.25h-1.25zM675.8,206.8h1.25v1.25h-1.25zM675.8,211.6h1.25v1.25h-1.25zM675.8,216.4h1.25v1.25h-1.25zM675.8,221.2h1.25v1.25h-1.25zM675.8,235.5h1.25v1.25h-1.25zM675.8,240.3h1.25v1.25h-1.25zM675.8,245.1h1.25v1.25h-1.25zM675.8,249.9h1.25v1.25h-1.25zM675.8,254.7h1.25v1.25h-1.25zM680.5,202.1h1.25v1.25h-1.25zM680.5,206.8h1.25v1.25h-1.25zM680.5,211.6h1.25v1.25h-1.25zM680.5,216.4h1.25v1.25h-1.25zM680.5,221.2h1.25v1.25h-1.25zM680.5,235.5h1.25v1.25h-1.25zM680.5,240.3h1.25v1.25h-1.25zM680.5,245.1h1.25v1.25h-1.25zM680.5,249.9h1.25v1.25h-1.25zM680.5,254.7h1.25v1.25h-1.25zM383.7,182.8h1.25v1.25h-1.25zM383.7,187.8h1.25v1.25h-1.25zM383.7,269.1h1.25v1.25h-1.25zM383.7,273.9h1.25v1.25h-1.25zM388.5,182.8h1.25v1.25h-1.25zM388.5,187.8h1.25v1.25h-1.25zM388.5,269.1h1.25v1.25h-1.25zM388.5,273.9h1.25v1.25h-1.25zM393.3,182.8h1.25v1.25h-1.25zM393.3,187.8h1.25v1.25h-1.25zM393.3,269.1h1.25v1.25h-1.25zM393.3,273.9h1.25v1.25h-1.25zM398.1,182.8h1.25v1.25h-1.25zM398.1,187.8h1.25v1.25h-1.25zM398.1,269.1h1.25v1.25h-1.25zM398.1,273.9h1.25v1.25h-1.25zM402.9,182.8h1.25v1.25h-1.25zM402.9,187.8h1.25v1.25h-1.25zM402.9,269.1h1.25v1.25h-1.25zM402.9,273.9h1.25v1.25h-1.25zM412.5,182.8h1.25v1.25h-1.25zM412.5,187.8h1.25v1.25h-1.25zM412.5,269.1h1.25v1.25h-1.25zM412.5,273.9h1.25v1.25h-1.25zM417.3,182.8h1.25v1.25h-1.25zM417.3,187.8h1.25v1.25h-1.25zM417.3,269.1h1.25v1.25h-1.25zM417.3,273.9h1.25v1.25h-1.25zM422.0,182.8h1.25v1.25h-1.25zM422.0,187.8h1.25v1.25h-1.25zM422.0,269.1h1.25v1.25h-1.25zM422.0,273.9h1.25v1.25h-1.25zM426.8,182.8h1.25v1.25h-1.25zM426.8,187.8h1.25v1.25h-1.25zM426.8,269.1h1.25v1.25h-1.25zM426.8,273.9h1.25v1.25h-1.25zM431.6,182.8h1.25v1.25h-1.25zM431.6,187.8h1.25v1.25h-1.25zM431.6,269.1h1.25v1.25h-1.25zM431.6,273.9h1.25v1.25h-1.25zM441.2,182.8h1.25v1.25h-1.25zM441.2,187.8h1.25v1.25h-1.25zM441.2,269.1h1.25v1.25h-1.25zM441.2,273.9h1.25v1.25h-1.25zM446.0,182.8h1.25v1.25h-1.25zM446.0,187.8h1.25v1.25h-1.25zM446.0,269.1h1.25v1.25h-1.25zM446.0,273.9h1.25v1.25h-1.25zM450.8,182.8h1.25v1.25h-1.25zM450.8,187.8h1.25v1.25h-1.25zM450.8,269.1h1.25v1.25h-1.25zM450.8,273.9h1.25v1.25h-1.25zM455.6,182.8h1.25v1.25h-1.25zM455.6,187.8h1.25v1.25h-1.25zM455.6,269.1h1.25v1.25h-1.25zM455.6,273.9h1.25v1.25h-1.25zM460.3,182.8h1.25v1.25h-1.25zM460.3,187.8h1.25v1.25h-1.25zM460.3,269.1h1.25v1.25h-1.25zM460.3,273.9h1.25v1.25h-1.25zM469.9,182.8h1.25v1.25h-1.25zM469.9,187.8h1.25v1.25h-1.25zM469.9,269.1h1.25v1.25h-1.25zM469.9,273.9h1.25v1.25h-1.25zM474.7,182.8h1.25v1.25h-1.25zM474.7,187.8h1.25v1.25h-1.25zM474.7,269.1h1.25v1.25h-1.25zM474.7,273.9h1.25v1.25h-1.25zM479.5,182.8h1.25v1.25h-1.25zM479.5,187.8h1.25v1.25h-1.25zM479.5,269.1h1.25v1.25h-1.25zM479.5,273.9h1.25v1.25h-1.25zM484.3,182.8h1.25v1.25h-1.25zM484.3,187.8h1.25v1.25h-1.25zM484.3,269.1h1.25v1.25h-1.25zM484.3,273.9h1.25v1.25h-1.25zM489.1,182.8h1.25v1.25h-1.25zM489.1,187.8h1.25v1.25h-1.25zM489.1,269.1h1.25v1.25h-1.25zM489.1,273.9h1.25v1.25h-1.25zM498.6,182.8h1.25v1.25h-1.25zM498.6,187.8h1.25v1.25h-1.25zM498.6,269.1h1.25v1.25h-1.25zM498.6,273.9h1.25v1.25h-1.25zM503.4,182.8h1.25v1.25h-1.25zM503.4,187.8h1.25v1.25h-1.25zM503.4,269.1h1.25v1.25h-1.25zM503.4,273.9h1.25v1.25h-1.25zM508.2,182.8h1.25v1.25h-1.25zM508.2,187.8h1.25v1.25h-1.25zM508.2,269.1h1.25v1.25h-1.25zM508.2,273.9h1.25v1.25h-1.25zM513.0,182.8h1.25v1.25h-1.25zM513.0,187.8h1.25v1.25h-1.25zM513.0,269.1h1.25v1.25h-1.25zM513.0,273.9h1.25v1.25h-1.25zM517.8,182.8h1.25v1.25h-1.25zM517.8,187.8h1.25v1.25h-1.25zM517.8,269.1h1.25v1.25h-1.25zM517.8,273.9h1.25v1.25h-1.25zM532.1,182.8h1.25v1.25h-1.25zM532.1,187.8h1.25v1.25h-1.25zM532.1,269.1h1.25v1.25h-1.25zM532.1,273.9h1.25v1.25h-1.25zM536.9,182.8h1.25v1.25h-1.25zM536.9,187.8h1.25v1.25h-1.25zM536.9,269.1h1.25v1.25h-1.25zM536.9,273.9h1.25v1.25h-1.25zM541.7,182.8h1.25v1.25h-1.25zM541.7,187.8h1.25v1.25h-1.25zM541.7,269.1h1.25v1.25h-1.25zM541.7,273.9h1.25v1.25h-1.25zM546.5,182.8h1.25v1.25h-1.25zM546.5,187.8h1.25v1.25h-1.25zM546.5,269.1h1.25v1.25h-1.25zM546.5,273.9h1.25v1.25h-1.25zM551.3,182.8h1.25v1.25h-1.25zM551.3,187.8h1.25v1.25h-1.25zM551.3,269.1h1.25v1.25h-1.25zM551.3,273.9h1.25v1.25h-1.25zM560.9,182.8h1.25v1.25h-1.25zM560.9,187.8h1.25v1.25h-1.25zM560.9,269.1h1.25v1.25h-1.25zM560.9,273.9h1.25v1.25h-1.25zM565.7,182.8h1.25v1.25h-1.25zM565.7,187.8h1.25v1.25h-1.25zM565.7,269.1h1.25v1.25h-1.25zM565.7,273.9h1.25v1.25h-1.25zM570.4,182.8h1.25v1.25h-1.25zM570.4,187.8h1.25v1.25h-1.25zM570.4,269.1h1.25v1.25h-1.25zM570.4,273.9h1.25v1.25h-1.25zM575.2,182.8h1.25v1.25h-1.25zM575.2,187.8h1.25v1.25h-1.25zM575.2,269.1h1.25v1.25h-1.25zM575.2,273.9h1.25v1.25h-1.25zM580.0,182.8h1.25v1.25h-1.25zM580.0,187.8h1.25v1.25h-1.25zM580.0,269.1h1.25v1.25h-1.25zM580.0,273.9h1.25v1.25h-1.25zM589.6,182.8h1.25v1.25h-1.25zM589.6,187.8h1.25v1.25h-1.25zM589.6,269.1h1.25v1.25h-1.25zM589.6,273.9h1.25v1.25h-1.25zM594.4,182.8h1.25v1.25h-1.25zM594.4,187.8h1.25v1.25h-1.25zM594.4,269.1h1.25v1.25h-1.25zM594.4,273.9h1.25v1.25h-1.25zM599.2,182.8h1.25v1.25h-1.25zM599.2,187.8h1.25v1.25h-1.25zM599.2,269.1h1.25v1.25h-1.25zM599.2,273.9h1.25v1.25h-1.25zM604.0,182.8h1.25v1.25h-1.25zM604.0,187.8h1.25v1.25h-1.25zM604.0,269.1h1.25v1.25h-1.25zM604.0,273.9h1.25v1.25h-1.25zM608.7,182.8h1.25v1.25h-1.25zM608.7,187.8h1.25v1.25h-1.25zM608.7,269.1h1.25v1.25h-1.25zM608.7,273.9h1.25v1.25h-1.25zM618.3,182.8h1.25v1.25h-1.25zM618.3,187.8h1.25v1.25h-1.25zM618.3,269.1h1.25v1.25h-1.25zM618.3,273.9h1.25v1.25h-1.25zM623.1,182.8h1.25v1.25h-1.25zM623.1,187.8h1.25v1.25h-1.25zM623.1,269.1h1.25v1.25h-1.25zM623.1,273.9h1.25v1.25h-1.25zM627.9,182.8h1.25v1.25h-1.25zM627.9,187.8h1.25v1.25h-1.25zM627.9,269.1h1.25v1.25h-1.25zM627.9,273.9h1.25v1.25h-1.25zM632.7,182.8h1.25v1.25h-1.25zM632.7,187.8h1.25v1.25h-1.25zM632.7,269.1h1.25v1.25h-1.25zM632.7,273.9h1.25v1.25h-1.25zM637.5,182.8h1.25v1.25h-1.25zM637.5,187.8h1.25v1.25h-1.25zM637.5,269.1h1.25v1.25h-1.25zM637.5,273.9h1.25v1.25h-1.25zM647.0,182.8h1.25v1.25h-1.25zM647.0,187.8h1.25v1.25h-1.25zM647.0,269.1h1.25v1.25h-1.25zM647.0,273.9h1.25v1.25h-1.25zM651.8,182.8h1.25v1.25h-1.25zM651.8,187.8h1.25v1.25h-1.25zM651.8,269.1h1.25v1.25h-1.25zM651.8,273.9h1.25v1.25h-1.25zM656.6,182.8h1.25v1.25h-1.25zM656.6,187.8h1.25v1.25h-1.25zM656.6,269.1h1.25v1.25h-1.25zM656.6,273.9h1.25v1.25h-1.25zM661.4,182.8h1.25v1.25h-1.25zM661.4,187.8h1.25v1.25h-1.25zM661.4,269.1h1.25v1.25h-1.25zM661.4,273.9h1.25v1.25h-1.25zM666.2,182.8h1.25v1.25h-1.25zM666.2,187.8h1.25v1.25h-1.25zM666.2,269.1h1.25v1.25h-1.25zM666.2,273.9h1.25v1.25h-1.25z" fill="#5c5c5c"/>
<rect x="377.7" y="183.0" width="2.4" height="0.8" fill="#b8d4ee"/>
<rect x="377.7" y="188.0" width="2.4" height="0.8" fill="#f2b8b8"/>
<rect x="377.7" y="269.3" width="2.4" height="0.8" fill="#b8d4ee"/>
<rect x="377.7" y="274.1" width="2.4" height="0.8" fill="#f2b8b8"/>
<rect x="362.7" y="283.4" width="327.1" height="107.3" rx="2" fill="#e1e1e1"/>
<path d="M374.8,310.1h1.25v1.25h-1.25zM374.8,314.8h1.25v1.25h-1.25zM374.8,319.6h1.25v1.25h-1.25zM374.8,324.4h1.25v1.25h-1.25zM374.8,329.2h1.25v1.25h-1.25zM374.8,343.5h1.25v1.25h-1.25zM374.8,348.3h1.25v1.25h-1.25zM374.8,353.1h1.25v1.25h-1.25zM374.8,357.9h1.25v1.25h-1.25zM374.8,362.7h1.25v1.25h-1.25zM379.6,310.1h1.25v1.25h-1.25zM379.6,314.8h1.25v1.25h-1.25zM379.6,319.6h1.25v1.25h-1.25zM379.6,324.4h1.25v1.25h-1.25zM379.6,329.2h1.25v1.25h-1.25zM379.6,343.5h1.25v1.25h-1.25zM379.6,348.3h1.25v1.25h-1.25zM379.6,353.1h1.25v1.25h-1.25zM379.6,357.9h1.25v1.25h-1.25zM379.6,362.7h1.25v1.25h-1.25zM384.3,310.1h1.25v1.25h-1.25zM384.3,314.8h1.25v1.25h-1.25zM384.3,319.6h1.25v1.25h-1.25zM384.3,324.4h1.25v1.25h-1.25zM384.3,329.2h1.25v1.25h-1.25zM384.3,343.5h1.25v1.25h-1.25zM384.3,348.3h1.25v1.25h-1.25zM384.3,353.1h1.25v1.25h-1.25zM384.3,357.9h1.25v1.25h-1.25zM384.3,362.7h1.25v1.25h-1.25zM389.1,310.1h1.25v1.25h-1.25zM389.1,314.8h1.25v1.25h-1.25zM389.1,319.6h1.25v1.25h-1.25zM389.1,324.4h1.25v1.25h-1.25zM389.1,329.2h1.25v1.25h-1.25zM389.1,343.5h1.25v1.25h-1.25zM389.1,348.3h1.25v1.25h-1.25zM389.1,353.1h1.25v1.25h-1.25zM389.1,357.9h1.25v1.25h-1.25zM389.1,362.7h1.25v1.25h-1.25zM393.9,310.1h1.25v1.25h-1.25zM393.9,314.8h1.25v1.25h-1.25zM393.9,319.6h1.25v1.25h-1.25zM393.9,324.4h1.25v1.25h-1.25zM393.9,329.2h1.25v1.25h-1.25zM393.9,343.5h1.25v1.25h-1.25zM393.9,348.3h1.25v1.25h-1.25zM393.9,353.1h1.25v1.25h-1.25zM393.9,357.9h1.25v1.25h-1.25zM393.9,362.7h1.25v1.25h-1.25zM398.7,310.1h1.25v1.25h-1.25zM398.7,314.8h1.25v1.25h-1.25zM398.7,319.6h1.25v1.25h-1.25zM398.7,324.4h1.25v1.25h-1.25zM398.7,329.2h1.25v1.25h-1.25zM398.7,343.5h1.25v1.25h-1.25zM398.7,348.3h1.25v1.25h-1.25zM398.7,353.1h1.25v1.25h-1.25zM398.7,357.9h1.25v1.25h-1.25zM398.7,362.7h1.25v1.25h-1.25zM403.5,310.1h1.25v1.25h-1.25zM403.5,314.8h1.25v1.25h-1.25zM403.5,319.6h1.25v1.25h-1.25zM403.5,324.4h1.25v1.25h-1.25zM403.5,329.2h1.25v1.25h-1.25zM403.5,343.5h1.25v1.25h-1.25zM403.5,348.3h1.25v1.25h-1.25zM403.5,353.1h1.25v1.25h-1.25zM403.5,357.9h1.25v1.25h-1.25zM403.5,362.7h1.25v1.25h-1.25zM408.3,310.1h1.25v1.25h-1.25zM408.3,314.8h1.25v1.25h-1.25zM408.3,319.6h1.25v1.25h-1.25zM408.3,324.4h1.25v1.25h-1.25zM408.3,329.2h1.25v1.25h-1.25zM408.3,343.5h1.25v1.25h-1.25zM408.3,348.3h1.25v1.25h-1.25zM408.3,353.1h1.25v1.25h-1.25zM408.3,357.9h1.25v1.25h-1.25zM408.3,362.7h1.25v1.25h-1.25zM413.1,310.1h1.25v1.25h-1.25zM413.1,314.8h1.25v1.25h-1.25zM413.1,319.6h1.25v1.25h-1.25zM413.1,324.4h1.25v1.25h-1.25zM413.1,329.2h1.25v1.25h-1.25zM413.1,343.5h1.25v1.25h-1.25zM413.1,348.3h1.25v1.25h-1.25zM413.1,353.1h1.25v1.25h-1.25zM413.1,357.9h1.25v1.25h-1.25zM413.1,362.7h1.25v1.25h-1.25zM417.9,310.1h1.25v1.25h-1.25zM417.9,314.8h1.25v1.25h-1.25zM417.9,319.6h1.25v1.25h-1.25zM417.9,324.4h1.25v1.25h-1.25zM417.9,329.2h1.25v1.25h-1.25zM417.9,343.5h1.25v1.25h-1.25zM417.9,348.3h1.25v1.25h-1.25zM417.9,353.1h1.25v1.25h-1.25zM417.9,357.9h1.25v1.25h-1.25zM417.9,362.7h1.25v1.25h-1.25zM422.6,310.1h1.25v1.25h-1.25zM422.6,314.8h1.25v1.25h-1.25zM422.6,319.6h1.25v1.25h-1.25zM422.6,324.4h1.25v1.25h-1.25zM422.6,329.2h1.25v1.25h-1.25zM422.6,343.5h1.25v1.25h-1.25zM422.6,348.3h1.25v1.25h-1.25zM422.6,353.1h1.25v1.25h-1.25zM422.6,357.9h1.25v1.25h-1.25zM422.6,362.7h1.25v1.25h-1.25zM427.4,310.1h1.25v1.25h-1.25zM427.4,314.8h1.25v1.25h-1.25zM427.4,319.6h1.25v1.25h-1.25zM427.4,324.4h1.25v1.25h-1.25zM427.4,329.2h1.25v1.25h-1.25zM427.4,343.5h1.25v1.25h-1.25zM427.4,348.3h1.25v1.25h-1.25zM427.4,353.1h1.25v1.25h-1.25zM427.4,357.9h1.25v1.25h-1.25zM427.4,362.7h1.25v1.25h-1.25zM432.2,310.1h1.25v1.25h-1.25zM432.2,314.8h1.25v1.25h-1.25zM432.2,319.6h1.25v1.25h-1.25zM432.2,324.4h1.25v1.25h-1.25zM432.2,329.2h1.25v1.25h-1.25zM432.2,343.5h1.25v1.25h-1.25zM432.2,348.3h1.25v1.25h-1.25zM432.2,353.1h1.25v1.25h-1.25zM432.2,357.9h1.25v1.25h-1.25zM432.2,362.7h1.25v1.25h-1.25zM437.0,310.1h1.25v1.25h-1.25zM437.0,314.8h1.25v1.25h-1.25zM437.0,319.6h1.25v1.25h-1.25zM437.0,324.4h1.25v1.25h-1.25zM437.0,329.2h1.25v1.25h-1.25zM437.0,343.5h1.25v1.25h-1.25zM437.0,348.3h1.25v1.25h-1.25zM437.0,353.1h1.25v1.25h-1.25zM437.0,357.9h1.25v1.25h-1.25zM437.0,362.7h1.25v1.25h-1.25zM441.8,310.1h1.25v1.25h-1.25zM441.8,314.8h1.25v1.25h-1.25zM441.8,319.6h1.25v1.25h-1.25zM441.8,324.4h1.25v1.25h-1.25zM441.8,329.2h1.25v1.25h-1.25zM441.8,343.5h1.25v1.25h-1.25zM441.8,348.3h1.25v1.25h-1.25zM441.8,353.1h1.25v1.25h-1.25zM441.8,357.9h1.25v1.25h-1.25zM441.8,362.7h1.25v1.25h-1.25zM446.6,310.1h1.25v1.25h-1.25zM446.6,314.8h1.25v1.25h-1.25zM446.6,319.6h1.25v1.25h-1.25zM446.6,324.4h1.25v1.25h-1.25zM446.6,329.2h1.25v1.25h-1.25zM446.6,343.5h1.25v1.25h-1.25zM446.6,348.3h1.25v1.25h-1.25zM446.6,353.1h1.25v1.25h-1.25zM446.6,357.9h1.25v1.25h-1.25zM446.6,362.7h1.25v1.25h-1.25zM451.4,310.1h1.25v1.25h-1.25zM451.4,314.8h1.25v1.25h-1.25zM451.4,319.6h1.25v1.25h-1.25zM451.4,324.4h1.25v1.25h-1.25zM451.4,329.2h1.25v1.25h-1.25zM451.4,343.5h1.25v1.25h-1.25zM451.4,348.3h1.25v1.25h-1.25zM451.4,353.1h1.25v1.25h-1.25zM451.4,357.9h1.25v1.25h-1.25zM451.4,362.7h1.25v1.25h-1.25zM456.2,310.1h1.25v1.25h-1.25zM456.2,314.8h1.25v1.25h-1.25zM456.2,319.6h1.25v1.25h-1.25zM456.2,324.4h1.25v1.25h-1.25zM456.2,329.2h1.25v1.25h-1.25zM456.2,343.5h1.25v1.25h-1.25zM456.2,348.3h1.25v1.25h-1.25zM456.2,353.1h1.25v1.25h-1.25zM456.2,357.9h1.25v1.25h-1.25zM456.2,362.7h1.25v1.25h-1.25zM460.9,310.1h1.25v1.25h-1.25zM460.9,314.8h1.25v1.25h-1.25zM460.9,319.6h1.25v1.25h-1.25zM460.9,324.4h1.25v1.25h-1.25zM460.9,329.2h1.25v1.25h-1.25zM460.9,343.5h1.25v1.25h-1.25zM460.9,348.3h1.25v1.25h-1.25zM460.9,353.1h1.25v1.25h-1.25zM460.9,357.9h1.25v1.25h-1.25zM460.9,362.7h1.25v1.25h-1.25zM465.7,310.1h1.25v1.25h-1.25zM465.7,314.8h1.25v1.25h-1.25zM465.7,319.6h1.25v1.25h-1.25zM465.7,324.4h1.25v1.25h-1.25zM465.7,329.2h1.25v1.25h-1.25zM465.7,343.5h1.25v1.25h-1.25zM465.7,348.3h1.25v1.25h-1.25zM465.7,353.1h1.25v1.25h-1.25zM465.7,357.9h1.25v1.25h-1.25zM465.7,362.7h1.25v1.25h-1.25zM470.5,310.1h1.25v1.25h-1.25zM470.5,314.8h1.25v1.25h-1.25zM470.5,319.6h1.25v1.25h-1.25zM470.5,324.4h1.25v1.25h-1.25zM470.5,329.2h1.25v1.25h-1.25zM470.5,343.5h1.25v1.25h-1.25zM470.5,348.3h1.25v1.25h-1.25zM470.5,353.1h1.25v1.25h-1.25zM470.5,357.9h1.25v1.25h-1.25zM470.5,362.7h1.25v1.25h-1.25zM475.3,310.1h1.25v1.25h-1.25zM475.3,314.8h1.25v1.25h-1.25zM475.3,319.6h1.25v1.25h-1.25zM475.3,324.4h1.25v1.25h-1.25zM475.3,329.2h1.25v1.25h-1.25zM475.3,343.5h1.25v1.25h-1.25zM475.3,348.3h1.25v1.25h-1.25zM475.3,353.1h1.25v1.25h-1.25zM475.3,357.9h1.25v1.25h-1.25zM475.3,362.7h1.25v1.25h-1.25zM480.1,310.1h1.25v1.25h-1.25zM480.1,314.8h1.25v1.25h-1.25zM480.1,319.6h1.25v1.25h-1.25zM480.1,324.4h1.25v1.25h-1.25zM480.1,329.2h1.25v1.25h-1.25zM480.1,343.5h1.25v1.25h-1.25zM480.1,348.3h1.25v1.25h-1.25zM480.1,353.1h1.25v1.25h-1.25zM480.1,357.9h1.25v1.25h-1.25zM480.1,362.7h1.25v1.25h-1.25zM484.9,310.1h1.25v1.25h-1.25zM484.9,314.8h1.25v1.25h-1.25zM484.9,319.6h1.25v1.25h-1.25zM484.9,324.4h1.25v1.25h-1.25zM484.9,329.2h1.25v1.25h-1.25zM484.9,343.5h1.25v1.25h-1.25zM484.9,348.3h1.25v1.25h-1.25zM484.9,353.1h1.25v1.25h-1.25zM484.9,357.9h1.25v1.25h-1.25zM484.9,362.7h1.25v1.25h-1.25zM489.7,310.1h1.25v1.25h-1.25zM489.7,314.8h1.25v1.25h-1.25zM489.7,319.6h1.25v1.25h-1.25zM489.7,324.4h1.25v1.25h-1.25zM489.7,329.2h1.25v1.25h-1.25zM489.7,343.5h1.25v1.25h-1.25zM489.7,348.3h1.25v1.25h-1.25zM489.7,353.1h1.25v1.25h-1.25zM489.7,357.9h1.25v1.25h-1.25zM489.7,362.7h1.25v1.25h-1.25zM494.4,310.1h1.25v1.25h-1.25zM494.4,314.8h1.25v1.25h-1.25zM494.4,319.6h1.25v1.25h-1.25zM494.4,324.4h1.25v1.25h-1.25zM494.4,329.2h1.25v1.25h-1.25zM494.4,343.5h1.25v1.25h-1.25zM494.4,348.3h1.25v1.25h-1.25zM494.4,353.1h1.25v1.25h-1.25zM494.4,357.9h1.25v1.25h-1.25zM494.4,362.7h1.25v1.25h-1.25zM499.2,310.1h1.25v1.25h-1.25zM499.2,314.8h1.25v1.25h-1.25zM499.2,319.6h1.25v1.25h-1.25zM499.2,324.4h1.25v1.25h-1.25zM499.2,329.2h1.25v1.25h-1.25zM499.2,343.5h1.25v1.25h-1.25zM499.2,348.3h1.25v1.25h-1.25zM499.2,353.1h1.25v1.25h-1.25zM499.2,357.9h1.25v1.25h-1.25zM499.2,362.7h1.25v1.25h-1.25zM504.0,310.1h1.25v1.25h-1.25zM504.0,314.8h1.25v1.25h-1.25zM504.0,319.6h1.25v1.25h-1.25zM504.0,324.4h1.25v1.25h-1.25zM504.0,329.2h1.25v1.25h-1.25zM504.0,343.5h1.25v1.25h-1.25zM504.0,348.3h1.25v1.25h-1.25zM504.0,353.1h1.25v1.25h-1.25zM504.0,357.9h1.25v1.25h-1.25zM504.0,362.7h1.25v1.25h-1.25zM508.8,310.1h1.25v1.25h-1.25zM508.8,314.8h1.25v1.25h-1.25zM508.8,319.6h1.25v1.25h-1.25zM508.8,324.4h1.25v1.25h-1.25zM508.8,329.2h1.25v1.25h-1.25zM508.8,343.5h1.25v1.25h-1.25zM508.8,348.3h1.25v1.25h-1.25zM508.8,353.1h1.25v1.25h-1.25zM508.8,357.9h1.25v1.25h-1.25zM508.8,362.7h1.25v1.25h-1.25zM513.6,310.1h1.25v1.25h-1.25zM513.6,314.8h1.25v1.25h-1.25zM513.6,319.6h1.25v1.25h-1.25zM513.6,324.4h1.25v1.25h-1.25zM513.6,329.2h1.25v1.25h-1.25zM513.6,343.5h1.25v1.25h-1.25zM513.6,348.3h1.25v1.25h-1.25zM513.6,353.1h1.25v1.25h-1.25zM513.6,357.9h1.25v1.25h-1.25zM513.6,362.7h1.25v1.25h-1.25zM518.4,310.1h1.25v1.25h-1.25zM518.4,314.8h1.25v1.25h-1.25zM518.4,319.6h1.25v1.25h-1.25zM518.4,324.4h1.25v1.25h-1.25zM518.4,329.2h1.25v1.25h-1.25zM518.4,343.5h1.25v1.25h-1.25zM518.4,348.3h1.25v1.25h-1.25zM518.4,353.1h1.25v1.25h-1.25zM518.4,357.9h1.25v1.25h-1.25zM518.4,362.7h1.25v1.25h-1.25zM523.2,310.1h1.25v1.25h-1.25zM523.2,314.8h1.25v1.25h-1.25zM523.2,319.6h1.25v1.25h-1.25zM523.2,324.4h1.25v1.25h-1.25zM523.2,329.2h1.25v1.25h-1.25zM523.2,343.5h1.25v1.25h-1.25zM523.2,348.3h1.25v1.25h-1.25zM523.2,353.1h1.25v1.25h-1.25zM523.2,357.9h1.25v1.25h-1.25zM523.2,362.7h1.25v1.25h-1.25zM528.0,310.1h1.25v1.25h-1.25zM528.0,314.8h1.25v1.25h-1.25zM528.0,319.6h1.25v1.25h-1.25zM528.0,324.4h1.25v1.25h-1.25zM528.0,329.2h1.25v1.25h-1.25zM528.0,343.5h1.25v1.25h-1.25zM528.0,348.3h1.25v1.25h-1.25zM528.0,353.1h1.25v1.25h-1.25zM528.0,357.9h1.25v1.25h-1.25zM528.0,362.7h1.25v1.25h-1.25zM532.7,310.1h1.25v1.25h-1.25zM532.7,314.8h1.25v1.25h-1.25zM532.7,319.6h1.25v1.25h-1.25zM532.7,324.4h1.25v1.25h-1.25zM532.7,329.2h1.25v1.25h-1.25zM532.7,343.5h1.25v1.25h-1.25zM532.7,348.3h1.25v1.25h-1.25zM532.7,353.1h1.25v1.25h-1.25zM532.7,357.9h1.25v1.25h-1.25zM532.7,362.7h1.25v1.25h-1.25zM537.5,310.1h1.25v1.25h-1.25zM537.5,314.8h1.25v1.25h-1.25zM537.5,319.6h1.25v1.25h-1.25zM537.5,324.4h1.25v1.25h-1.25zM537.5,329.2h1.25v1.25h-1.25zM537.5,343.5h1.25v1.25h-1.25zM537.5,348.3h1.25v1.25h-1.25zM537.5,353.1h1.25v1.25h-1.25zM537.5,357.9h1.25v1.25h-1.25zM537.5,362.7h1.25v1.25h-1.25zM542.3,310.1h1.25v1.25h-1.25zM542.3,314.8h1.25v1.25h-1.25zM542.3,319.6h1.25v1.25h-1.25zM542.3,324.4h1.25v1.25h-1.25zM542.3,329.2h1.25v1.25h-1.25zM542.3,343.5h1.25v1.25h-1.25zM542.3,348.3h1.25v1.25h-1.25zM542.3,353.1h1.25v1.25h-1.25zM542.3,357.9h1.25v1.25h-1.25zM542.3,362.7h1.25v1.25h-1.25zM547.1,310.1h1.25v1.25h-1.25zM547.1,314.8h1.25v1.25h-1.25zM547.1,319.6h1.25v1.25h-1.25zM547.1,324.4h1.25v1.25h-1.25zM547.1,329.2h1.25v1.25h-1.25zM547.1,343.5h1.25v1.25h-1.25zM547.1,348.3h1.25v1.25h-1.25zM547.1,353.1h1.25v1.25h-1.25zM547.1,357.9h1.25v1.25h-1.25zM547.1,362.7h1.25v1.25h-1.25zM551.9,310.1h1.25v1.25h-1.25zM551.9,314.8h1.25v1.25h-1.25zM551.9,319.6h1.25v1.25h-1.25zM551.9,324.4h1.25v1.25h-1.25zM551.9,329.2h1.25v1.25h-1.25zM551.9,343.5h1.25v1.25h-1.25zM551.9,348.3h1.25v1.25h-1.25zM551.9,353.1h1.25v1.25h-1.25zM551.9,357.9h1.25v1.25h-1.25zM551.9,362.7h1.25v1.25h-1.25zM556.7,310.1h1.25v1.25h-1.25zM556.7,314.8h1.25v1.25h-1.25zM556.7,319.6h1.25v1.25h-1.25zM556.7,324.4h1.25v1.25h-1.25zM556.7,329.2h1.25v1.25h-1.25zM556.7,343.5h1.25v1.25h-1.25zM556.7,348.3h1.25v1.25h-1.25zM556.7,353.1h1.25v1.25h-1.25zM556.7,357.9h1.25v1.25h-1.25zM556.7,362.7h1.25v1.25h-1.25zM561.5,310.1h1.25v1.25h-1.25zM561.5,314.8h1.25v1.25h-1.25zM561.5,319.6h1.25v1.25h-1.25zM561.5,324.4h1.25v1.25h-1.25zM561.5,329.2h1.25v1.25h-1.25zM561.5,343.5h1.25v1.25h-1.25zM561.5,348.3h1.25v1.25h-1.25zM561.5,353.1h1.25v1.25h-1.25zM561.5,357.9h1.25v1.25h-1.25zM561.5,362.7h1.25v1.25h-1.25zM566.3,310.1h1.25v1.25h-1.25zM566.3,314.8h1.25v1.25h-1.25zM566.3,319.6h1.25v1.25h-1.25zM566.3,324.4h1.25v1.25h-1.25zM566.3,329.2h1.25v1.25h-1.25zM566.3,343.5h1.25v1.25h-1.25zM566.3,348.3h1.25v1.25h-1.25zM566.3,353.1h1.25v1.25h-1.25zM566.3,357.9h1.25v1.25h-1.25zM566.3,362.7h1.25v1.25h-1.25zM571.0,310.1h1.25v1.25h-1.25zM571.0,314.8h1.25v1.25h-1.25zM571.0,319.6h1.25v1.25h-1.25zM571.0,324.4h1.25v1.25h-1.25zM571.0,329.2h1.25v1.25h-1.25zM571.0,343.5h1.25v1.25h-1.25zM571.0,348.3h1.25v1.25h-1.25zM571.0,353.1h1.25v1.25h-1.25zM571.0,357.9h1.25v1.25h-1.25zM571.0,362.7h1.25v1.25h-1.25zM575.8,310.1h1.25v1.25h-1.25zM575.8,314.8h1.25v1.25h-1.25zM575.8,319.6h1.25v1.25h-1.25zM575.8,324.4h1.25v1.25h-1.25zM575.8,329.2h1.25v1.25h-1.25zM575.8,343.5h1.25v1.25h-1.25zM575.8,348.3h1.25v1.25h-1.25zM575.8,353.1h1.25v1.25h-1.25zM575.8,357.9h1.25v1.25h-1.25zM575.8,362.7h1.25v1.25h-1.25zM580.6,310.1h1.25v1.25h-1.25zM580.6,314.8h1.25v1.25h-1.25zM580.6,319.6h1.25v1.25h-1.25zM580.6,324.4h1.25v1.25h-1.25zM580.6,329.2h1.25v1.25h-1.25zM580.6,343.5h1.25v1.25h-1.25zM580.6,348.3h1.25v1.25h-1.25zM580.6,353.1h1.25v1.25h-1.25zM580.6,357.9h1.25v1.25h-1.25zM580.6,362.7h1.25v1.25h-1.25zM585.4,310.1h1.25v1.25h-1.25zM585.4,314.8h1.25v1.25h-1.25zM585.4,319.6h1.25v1.25h-1.25zM585.4,324.4h1.25v1.25h-1.25zM585.4,329.2h1.25v1.25h-1.25zM585.4,343.5h1.25v1.25h-1.25zM585.4,348.3h1.25v1.25h-1.25zM585.4,353.1h1.25v1.25h-1.25zM585.4,357.9h1.25v1.25h-1.25zM585.4,362.7h1.25v1.25h-1.25zM590.2,310.1h1.25v1.25h-1.25zM590.2,314.8h1.25v1.25h-1.25zM590.2,319.6h1.25v1.25h-1.25zM590.2,324.4h1.25v1.25h-1.25zM590.2,329.2h1.25v1.25h-1.25zM590.2,343.5h1.25v1.25h-1.25zM590.2,348.3h1.25v1.25h-1.25zM590.2,353.1h1.25v1.25h-1.25zM590.2,357.9h1.25v1.25h-1.25zM590.2,362.7h1.25v1.25h-1.25zM595.0,310.1h1.25v1.25h-1.25zM595.0,314.8h1.25v1.25h-1.25zM595.0,319.6h1.25v1.25h-1.25zM595.0,324.4h1.25v1.25h-1.25zM595.0,329.2h1.25v1.25h-1.25zM595.0,343.5h1.25v1.25h-1.25zM595.0,348.3h1.25v1.25h-1.25zM595.0,353.1h1.25v1.25h-1.25zM595.0,357.9h1.25v1.25h-1.25zM595.0,362.7h1.25v1.25h-1.25zM599.8,310.1h1.25v1.25h-1.25zM599.8,314.8h1.25v1.25h-1.25zM599.8,319.6h1.25v1.25h-1.25zM599.8,324.4h1.25v1.25h-1.25zM599.8,329.2h1.25v1.25h-1.25zM599.8,343.5h1.25v1.25h-1.25zM599.8,348.3h1.25v1.25h-1.25zM599.8,353.1h1.25v1.25h-1.25zM599.8,357.9h1.25v1.25h-1.25zM599.8,362.7h1.25v1.25h-1.25zM604.6,310.1h1.25v1.25h-1.25zM604.6,314.8h1.25v1.25h-1.25zM604.6,319.6h1.25v1.25h-1.25zM604.6,324.4h1.25v1.25h-1.25zM604.6,329.2h1.25v1.25h-1.25zM604.6,343.5h1.25v1.25h-1.25zM604.6,348.3h1.25v1.25h-1.25zM604.6,353.1h1.25v1.25h-1.25zM604.6,357.9h1.25v1.25h-1.25zM604.6,362.7h1.25v1.25h-1.25zM609.3,310.1h1.25v1.25h-1.25zM609.3,314.8h1.25v1.25h-1.25zM609.3,319.6h1.25v1.25h-1.25zM609.3,324.4h1.25v1.25h-1.25zM609.3,329.2h1.25v1.25h-1.25zM609.3,343.5h1.25v1.25h-1.25zM609.3,348.3h1.25v1.25h-1.25zM609.3,353.1h1.25v1.25h-1.25zM609.3,357.9h1.25v1.25h-1.25zM609.3,362.7h1.25v1.25h-1.25zM614.1,310.1h1.25v1.25h-1.25zM614.1,314.8h1.25v1.25h-1.25zM614.1,319.6h1.25v1.25h-1.25zM614.1,324.4h1.25v1.25h-1.25zM614.1,329.2h1.25v1.25h-1.25zM614.1,343.5h1.25v1.25h-1.25zM614.1,348.3h1.25v1.25h-1.25zM614.1,353.1h1.25v1.25h-1.25zM614.1,357.9h1.25v1.25h-1.25zM614.1,362.7h1.25v1.25h-1.25zM618.9,310.1h1.25v1.25h-1.25zM618.9,314.8h1.25v1.25h-1.25zM618.9,319.6h1.25v1.25h-1.25zM618.9,324.4h1.25v1.25h-1.25zM618.9,329.2h1.25v1.25h-1.25zM618.9,343.5h1.25v1.25h-1.25zM618.9,348.3h1.25v1.25h-1.25zM618.9,353.1h1.25v1.25h-1.25zM618.9,357.9h1.25v1.25h-1.25zM618.9,362.7h1.25v1.25h-1.25zM623.7,310.1h1.25v1.25h-1.25zM623.7,314.8h1.25v1.25h-1.25zM623.7,319.6h1.25v1.25h-1.25zM623.7,324.4h1.25v1.25h-1.25zM623.7,329.2h1.25v1.25h-1.25zM623.7,343.5h1.25v1.25h-1.25zM623.7,348.3h1.25v1.25h-1.25zM623.7,353.1h1.25v1.25h-1.25zM623.7,357.9h1.25v1.25h-1.25zM623.7,362.7h1.25v1.25h-1.25zM628.5,310.1h1.25v1.25h-1.25zM628.5,314.8h1.25v1.25h-1.25zM628.5,319.6h1.25v1.25h-1.25zM628.5,324.4h1.25v1.25h-1.25zM628.5,329.2h1.25v1.25h-1.25zM628.5,343.5h1.25v1.25h-1.25zM628.5,348.3h1.25v1.25h-1.25zM628.5,353.1h1.25v1.25h-1.25zM628.5,357.9h1.25v1.25h-1.25zM628.5,362.7h1.25v1.25h-1.25zM633.3,310.1h1.25v1.25h-1.25zM633.3,314.8h1.25v1.25h-1.25zM633.3,319.6h1.25v1.25h-1.25zM633.3,324.4h1.25v1.25h-1.25zM633.3,329.2h1.25v1.25h-1.25zM633.3,343.5h1.25v1.25h-1.25zM633.3,348.3h1.25v1.25h-1.25zM633.3,353.1h1.25v1.25h-1.25zM633.3,357.9h1.25v1.25h-1.25zM633.3,362.7h1.25v1.25h-1.25zM638.1,310.1h1.25v1.25h-1.25zM638.1,314.8h1.25v1.25h-1.25zM638.1,319.6h1.25v1.25h-1.25zM638.1,324.4h1.25v1.25h-1.25zM638.1,329.2h1.25v1.25h-1.25zM638.1,343.5h1.25v1.25h-1.25zM638.1,348.3h1.25v1.25h-1.25zM638.1,353.1h1.25v1.25h-1.25zM638.1,357.9h1.25v1.25h-1.25zM638.1,362.7h1.25v1.25h-1.25zM642.8,310.1h1.25v1.25h-1.25zM642.8,314.8h1.25v1.25h-1.25zM642.8,319.6h1.25v1.25h-1.25zM642.8,324.4h1.25v1.25h-1.25zM642.8,329.2h1.25v1.25h-1.25zM642.8,343.5h1.25v1.25h-1.25zM642.8,348.3h1.25v1.25h-1.25zM642.8,353.1h1.25v1.25h-1.25zM642.8,357.9h1.25v1.25h-1.25zM642.8,362.7h1.25v1.25h-1.25zM647.6,310.1h1.25v1.25h-1.25zM647.6,314.8h1.25v1.25h-1.25zM647.6,319.6h1.25v1.25h-1.25zM647.6,324.4h1.25v1.25h-1.25zM647.6,329.2h1.25v1.25h-1.25zM647.6,343.5h1.25v1.25h-1.25zM647.6,348.3h1.25v1.25h-1.25zM647.6,353.1h1.25v1.25h-1.25zM647.6,357.9h1.25v1.25h-1.25zM647.6,362.7h1.25v1.25h-1.25zM652.4,310.1h1.25v1.25h-1.25zM652.4,314.8h1.25v1.25h-1.25zM652.4,319.6h1.25v1.25h-1.25zM652.4,324.4h1.25v1.25h-1.25zM652.4,329.2h1.25v1.25h-1.25zM652.4,343.5h1.25v1.25h-1.25zM652.4,348.3h1.25v1.25h-1.25zM652.4,353.1h1.25v1.25h-1.25zM652.4,357.9h1.25v1.25h-1.25zM652.4,362.7h1.25v1.25h-1.25zM657.2,310.1h1.25v1.25h-1.25zM657.2,314.8h1.25v1.25h-1.25zM657.2,319.6h1.25v1.25h-1.25zM657.2,324.4h1.25v1.25h-1.25zM657.2,329.2h1.25v1.25h-1.25zM657.2,343.5h1.25v1.25h-1.25zM657.2,348.3h1.25v1.25h-1.25zM657.2,353.1h1.25v1.25h-1.25zM657.2,357.9h1.25v1.25h-1.25zM657.2,362.7h1.25v1.25h-1.25zM662.0,310.1h1.25v1.25h-1.25zM662.0,314.8h1.25v1.25h-1.25zM662.0,319.6h1.25v1.25h-1.25zM662.0,324.4h1.25v1.25h-1.25zM662.0,329.2h1.25v1.25h-1.25zM662.0,343.5h1.25v1.25h-1.25zM662.0,348.3h1.25v1.25h-1.25zM662.0,353.1h1.25v1.25h-1.25zM662.0,357.9h1.25v1.25h-1.25zM662.0,362.7h1.25v1.25h-1.25zM666.8,310.1h1.25v1.25h-1.25zM666.8,314.8h1.25v1.25h-1.25zM666.8,319.6h1.25v1.25h-1.25zM666.8,324.4h1.25v1.25h-1.25zM666.8,329.2h1.25v1.25h-1.25zM666.8,343.5h1.25v1.25h-1.25zM666.8,348.3h1.25v1.25h-1.25zM666.8,353.1h1.25v1.25h-1.25zM666.8,357.9h1.25v1.25h-1.25zM666.8,362.7h1.25v1.25h-1.25zM671.6,310.1h1.25v1.25h-1.25zM671.6,314.8h1.25v1.25h-1.25zM671.6,319.6h1.25v1.25h-1.25zM671.6,324.4h1.25v1.25h-1.25zM671.6,329.2h1.25v1.25h-1.25zM671.6,343.5h1.25v1.25h-1.25zM671.6,348.3h1.25v1.25h-1.25zM671.6,353.1h1.25v1.25h-1.25zM671.6,357.9h1.25v1.25h-1.25zM671.6,362.7h1.25v1.25h-1.25zM676.4,310.1h1.25v1.25h-1.25zM676.4,314.8h1.25v1.25h-1.25zM676.4,319.6h1.25v1.25h-1.25zM676.4,324.4h1.25v1.25h-1.25zM676.4,329.2h1.25v1.25h-1.25zM676.4,343.5h1.25v1.25h-1.25zM676.4,348.3h1.25v1.25h-1.25zM676.4,353.1h1.25v1.25h-1.25zM676.4,357.9h1.25v1.25h-1.25zM676.4,362.7h1.25v1.25h-1.25zM681.1,310.1h1.25v1.25h-1.25zM681.1,314.8h1.25v1.25h-1.25zM681.1,319.6h1.25v1.25h-1.25zM681.1,324.4h1.25v1.25h-1.25zM681.1,329.2h1.25v1.25h-1.25zM681.1,343.5h1.25v1.25h-1.25zM681.1,348.3h1.25v1.25h-1.25zM681.1,353.1h1.25v1.25h-1.25zM681.1,357.9h1.25v1.25h-1.25zM681.1,362.7h1.25v1.25h-1.25zM384.3,290.8h1.25v1.25h-1.25zM384.3,295.8h1.25v1.25h-1.25zM384.3,377.1h1.25v1.25h-1.25zM384.3,381.9h1.25v1.25h-1.25zM389.1,290.8h1.25v1.25h-1.25zM389.1,295.8h1.25v1.25h-1.25zM389.1,377.1h1.25v1.25h-1.25zM389.1,381.9h1.25v1.25h-1.25zM393.9,290.8h1.25v1.25h-1.25zM393.9,295.8h1.25v1.25h-1.25zM393.9,377.1h1.25v1.25h-1.25zM393.9,381.9h1.25v1.25h-1.25zM398.7,290.8h1.25v1.25h-1.25zM398.7,295.8h1.25v1.25h-1.25zM398.7,377.1h1.25v1.25h-1.25zM398.7,381.9h1.25v1.25h-1.25zM403.5,290.8h1.25v1.25h-1.25zM403.5,295.8h1.25v1.25h-1.25zM403.5,377.1h1.25v1.25h-1.25zM403.5,381.9h1.25v1.25h-1.25zM413.1,290.8h1.25v1.25h-1.25zM413.1,295.8h1.25v1.25h-1.25zM413.1,377.1h1.25v1.25h-1.25zM413.1,381.9h1.25v1.25h-1.25zM417.9,290.8h1.25v1.25h-1.25zM417.9,295.8h1.25v1.25h-1.25zM417.9,377.1h1.25v1.25h-1.25zM417.9,381.9h1.25v1.25h-1.25zM422.6,290.8h1.25v1.25h-1.25zM422.6,295.8h1.25v1.25h-1.25zM422.6,377.1h1.25v1.25h-1.25zM422.6,381.9h1.25v1.25h-1.25zM427.4,290.8h1.25v1.25h-1.25zM427.4,295.8h1.25v1.25h-1.25zM427.4,377.1h1.25v1.25h-1.25zM427.4,381.9h1.25v1.25h-1.25zM432.2,290.8h1.25v1.25h-1.25zM432.2,295.8h1.25v1.25h-1.25zM432.2,377.1h1.25v1.25h-1.25zM432.2,381.9h1.25v1.25h-1.25zM441.8,290.8h1.25v1.25h-1.25zM441.8,295.8h1.25v1.25h-1.25zM441.8,377.1h1.25v1.25h-1.25zM441.8,381.9h1.25v1.25h-1.25zM446.6,290.8h1.25v1.25h-1.25zM446.6,295.8h1.25v1.25h-1.25zM446.6,377.1h1.25v1.25h-1.25zM446.6,381.9h1.25v1.25h-1.25zM451.4,290.8h1.25v1.25h-1.25zM451.4,295.8h1.25v1.25h-1.25zM451.4,377.1h1.25v1.25h-1.25zM451.4,381.9h1.25v1.25h-1.25zM456.2,290.8h1.25v1.25h-1.25zM456.2,295.8h1.25v1.25h-1.25zM456.2,377.1h1.25v1.25h-1.25zM456.2,381.9h1.25v1.25h-1.25zM460.9,290.8h1.25v1.25h-1.25zM460.9,295.8h1.25v1.25h-1.25zM460.9,377.1h1.25v1.25h-1.25zM460.9,381.9h1.25v1.25h-1.25zM470.5,290.8h1.25v1.25h-1.25zM470.5,295.8h1.25v1.25h-1.25zM470.5,377.1h1.25v1.25h-1.25zM470.5,381.9h1.25v1.25h-1.25zM475.3,290.8h1.25v1.25h-1.25zM475.3,295.8h1.25v1.25h-1.25zM475.3,377.1h1.25v1.25h-1.25zM475.3,381.9h1.25v1.25h-1.25zM480.1,290.8h1.25v1.25h-1.25zM480.1,295.8h1.25v1.25h-1.25zM480.1,377.1h1.25v1.25h-1.25zM480.1,381.9h1.25v1.25h-1.25zM484.9,290.8h1.25v1.25h-1.25zM484.9,295.8h1.25v1.25h-1.25zM484.9,377.1h1.25v1.25h-1.25zM484.9,381.9h1.25v1.25h-1.25zM489.7,290.8h1.25v1.25h-1.25zM489.7,295.8h1.25v1.25h-1.25zM489.7,377.1h1.25v1.25h-1.25zM489.7,381.9h1.25v1.25h-1.25zM499.2,290.8h1.25v1.25h-1.25zM499.2,295.8h1.25v1.25h-1.25zM499.2,377.1h1.25v1.25h-1.25zM499.2,381.9h1.25v1.25h-1.25zM504.0,290.8h1.25v1.25h-1.25zM504.0,295.8h1.25v1.25h-1.25zM504.0,377.1h1.25v1.25h-1.25zM504.0,381.9h1.25v1.25h-1.25zM508.8,290.8h1.25v1.25h-1.25zM508.8,295.8h1.25v1.25h-1.25zM508.8,377.1h1.25v1.25h-1.25zM508.8,381.9h1.25v1.25h-1.25zM513.6,290.8h1.25v1.25h-1.25zM513.6,295.8h1.25v1.25h-1.25zM513.6,377.1h1.25v1.25h-1.25zM513.6,381.9h1.25v1.25h-1.25zM518.4,290.8h1.25v1.25h-1.25zM518.4,295.8h1.25v1.25h-1.25zM518.4,377.1h1.25v1.25h-1.25zM518.4,381.9h1.25v1.25h-1.25zM532.7,290.8h1.25v1.25h-1.25zM532.7,295.8h1.25v1.25h-1.25zM532.7,377.1h1.25v1.25h-1.25zM532.7,381.9h1.25v1.25h-1.25zM537.5,290.8h1.25v1.25h-1.25zM537.5,295.8h1.25v1.25h-1.25zM537.5,377.1h1.25v1.25h-1.25zM537.5,381.9h1.25v1.25h-1.25zM542.3,290.8h1.25v1.25h-1.25zM542.3,295.8h1.25v1.25h-1.25zM542.3,377.1h1.25v1.25h-1.25zM542.3,381.9h1.25v1.25h-1.25zM547.1,290.8h1.25v1.25h-1.25zM547.1,295.8h1.25v1.25h-1.25zM547.1,377.1h1.25v1.25h-1.25zM547.1,381.9h1.25v1.25h-1.25zM551.9,290.8h1.25v1.25h-1.25zM551.9,295.8h1.25v1.25h-1.25zM551.9,377.1h1.25v1.25h-1.25zM551.9,381.9h1.25v1.25h-1.25zM561.5,290.8h1.25v1.25h-1.25zM561.5,295.8h1.25v1.25h-1.25zM561.5,377.1h1.25v1.25h-1.25zM561.5,381.9h1.25v1.25h-1.25zM566.3,290.8h1.25v1.25h-1.25zM566.3,295.8h1.25v1.25h-1.25zM566.3,377.1h1.25v1.25h-1.25zM566.3,381.9h1.25v1.25h-1.25zM571.0,290.8h1.25v1.25h-1.25zM571.0,295.8h1.25v1.25h-1.25zM571.0,377.1h1.25v1.25h-1.25zM571.0,381.9h1.25v1.25h-1.25zM575.8,290.8h1.25v1.25h-1.25zM575.8,295.8h1.25v1.25h-1.25zM575.8,377.1h1.25v1.25h-1.25zM575.8,381.9h1.25v1.25h-1.25zM580.6,290.8h1.25v1.25h-1.25zM580.6,295.8h1.25v1.25h-1.25zM580.6,377.1h1.25v1.25h-1.25zM580.6,381.9h1.25v1.25h-1.25zM590.2,290.8h1.25v1.25h-1.25zM590.2,295.8h1.25v1.25h-1.25zM590.2,377.1h1.25v1.25h-1.25zM590.2,381.9h1.25v1.25h-1.25zM595.0,290.8h1.25v1.25h-1.25zM595.0,295.8h1.25v1.25h-1.25zM595.0,377.1h1.25v1.25h-1.25zM595.0,381.9h1.25v1.25h-1.25zM599.8,290.8h1.25v1.25h-1.25zM599.8,295.8h1.25v1.25h-1.25zM599.8,377.1h1.25v1.25h-1.25zM599.8,381.9h1.25v1.25h-1.25zM604.6,290.8h1.25v1.25h-1.25zM604.6,295.8h1.25v1.25h-1.25zM604.6,377.1h1.25v1.25h-1.25zM604.6,381.9h1.25v1.25h-1.25zM609.3,290.8h1.25v1.25h-1.25zM609.3,295.8h1.25v1.25h-1.25zM609.3,377.1h1.25v1.25h-1.25zM609.3,381.9h1.25v1.25h-1.25zM618.9,290.8h1.25v1.25h-1.25zM618.9,295.8h1.25v1.25h-1.25zM618.9,377.1h1.25v1.25h-1.25zM618.9,381.9h1.25v1.25h-1.25zM623.7,290.8h1.25v1.25h-1.25zM623.7,295.8h1.25v1.25h-1.25zM623.7,377.1h1.25v1.25h-1.25zM623.7,381.9h1.25v1.25h-1.25zM628.5,290.8h1.25v1.25h-1.25zM628.5,295.8h1.25v1.25h-1.25zM628.5,377.1h1.25v1.25h-1.25zM628.5,381.9h1.25v1.25h-1.25zM633.3,290.8h1.25v1.25h-1.25zM633.3,295.8h1.25v1.25h-1.25zM633.3,377.1h1.25v1.25h-1.25zM633.3,381.9h1.25v1.25h-1.25zM638.1,290.8h1.25v1.25h-1.25zM638.1,295.8h1.25v1.25h-1.25zM638.1,377.1h1.25v1.25h-1.25zM638.1,381.9h1.25v1.25h-1.25zM647.6,290.8h1.25v1.25h-1.25zM647.6,295.8h1.25v1.25h-1.25zM647.6,377.1h1.25v1.25h-1.25zM647.6,381.9h1.25v1.25h-1.25zM652.4,290.8h1.25v1.25h-1.25zM652.4,295.8h1.25v1.25h-1.25zM652.4,377.1h1.25v1.25h-1.25zM652.4,381.9h1.25v1.25h-1.25zM657.2,290.8h1.25v1.25h-1.25zM657.2,295.8h1.25v1.25h-1.25zM657.2,377.1h1.25v1.25h-1.25zM657.2,381.9h1.25v1.25h-1.25zM662.0,290.8h1.25v1.25h-1.25zM662.0,295.8h1.25v1.25h-1.25zM662.0,377.1h1.25v1.25h-1.25zM662.0,381.9h1.25v1.25h-1.25zM666.8,290.8h1.25v1.25h-1.25zM666.8,295.8h1.25v1.25h-1.25zM666.8,377.1h1.25v1.25h-1.25zM666.8,381.9h1.25v1.25h-1.25z" fill="#5c5c5c"/>
<rect x="378.3" y="291.0" width="2.4" height="0.8" fill="#b8d4ee"/>
<rect x="378.3" y="296.0" width="2.4" height="0.8" fill="#f2b8b8"/>
<rect x="378.3" y="377.3" width="2.4" height="0.8" fill="#b8d4ee"/>
<rect x="378.3" y="382.1" width="2.4" height="0.8" fill="#f2b8b8"/>
<rect x="361" y="290" width="4" height="100.7" fill="#e1e1e1"/>
<rect x="361" y="178" width="4" height="104" fill="#e1e1e1"/>
<rect x="571" y="282.6" width="119" height="1.0" fill="#0a0a0a"/>
<rect x="36" y="176.2" width="328" height="0.8" fill="#111"/><circle cx="131.3" cy="96.3" r="2.1" fill="#3a3a3a"/><circle cx="64.3" cy="96.3" r="2.1" fill="#3a3a3a"/><circle cx="64.3" cy="96.3" r="2.1" fill="#3a3a3a"/><circle cx="78.6" cy="96.3" r="2.1" fill="#3a3a3a"/><circle cx="97.8" cy="96.3" r="2.1" fill="#3a3a3a"/><circle cx="112.1" cy="96.3" r="2.1" fill="#3a3a3a"/><circle cx="145.6" cy="96.3" r="2.1" fill="#3a3a3a"/><circle cx="54.7" cy="96.3" r="2.1" fill="#3a3a3a"/><circle cx="107.3" cy="96.3" r="2.1" fill="#3a3a3a"/><circle cx="59.5" cy="96.3" r="2.1" fill="#3a3a3a"/><circle cx="69.0" cy="96.3" r="2.1" fill="#3a3a3a"/><circle cx="73.8" cy="96.3" r="2.1" fill="#3a3a3a"/><circle cx="88.2" cy="96.3" r="2.1" fill="#3a3a3a"/><circle cx="93.0" cy="96.3" r="2.1" fill="#3a3a3a"/><circle cx="102.6" cy="96.3" r="2.1" fill="#3a3a3a"/><circle cx="54.7" cy="101.0" r="2.1" fill="#3a3a3a"/><circle cx="59.5" cy="101.0" r="2.1" fill="#3a3a3a"/><circle cx="69.0" cy="101.0" r="2.1" fill="#3a3a3a"/><circle cx="73.8" cy="101.0" r="2.1" fill="#3a3a3a"/><circle cx="73.8" cy="101.0" r="2.1" fill="#3a3a3a"/><circle cx="93.0" cy="101.0" r="2.1" fill="#3a3a3a"/><circle cx="88.2" cy="101.0" r="2.1" fill="#3a3a3a"/><circle cx="93.0" cy="101.0" r="2.1" fill="#3a3a3a"/><circle cx="59.5" cy="101.0" r="2.1" fill="#3a3a3a"/><circle cx="126.5" cy="96.3" r="2.1" fill="#3a3a3a"/><circle cx="73.8" cy="105.8" r="2.1" fill="#3a3a3a"/><circle cx="126.5" cy="105.8" r="2.1" fill="#3a3a3a"/><circle cx="88.2" cy="105.8" r="2.1" fill="#3a3a3a"/><circle cx="93.0" cy="101.0" r="2.1" fill="#3a3a3a"/><circle cx="121.7" cy="96.3" r="2.1" fill="#3a3a3a"/><circle cx="116.9" cy="134.5" r="2.1" fill="#3a3a3a"/><circle cx="289.2" cy="96.3" r="2.1" fill="#3a3a3a"/><circle cx="308.4" cy="96.3" r="2.1" fill="#3a3a3a"/><circle cx="179.1" cy="101.0" r="2.1" fill="#3a3a3a"/><circle cx="136.1" cy="96.3" r="2.1" fill="#3a3a3a"/><circle cx="140.9" cy="96.3" r="2.1" fill="#3a3a3a"/><circle cx="160.0" cy="96.3" r="2.1" fill="#3a3a3a"/><circle cx="164.8" cy="96.3" r="2.1" fill="#3a3a3a"/><circle cx="169.6" cy="96.3" r="2.1" fill="#3a3a3a"/><circle cx="136.1" cy="101.0" r="2.1" fill="#3a3a3a"/><circle cx="174.4" cy="101.0" r="2.1" fill="#3a3a3a"/><circle cx="155.2" cy="101.0" r="2.1" fill="#3a3a3a"/><circle cx="64.3" cy="82.0" r="2.1" fill="#3a3a3a"/><circle cx="49.9" cy="96.3" r="2.1" fill="#3a3a3a"/><circle cx="88.2" cy="82.0" r="2.1" fill="#3a3a3a"/><circle cx="83.4" cy="96.3" r="2.1" fill="#3a3a3a"/><circle cx="116.9" cy="82.0" r="2.1" fill="#3a3a3a"/><circle cx="116.9" cy="96.3" r="2.1" fill="#3a3a3a"/><circle cx="150.4" cy="82.0" r="2.1" fill="#3a3a3a"/><circle cx="150.4" cy="96.3" r="2.1" fill="#3a3a3a"/><circle cx="183.9" cy="82.0" r="2.1" fill="#3a3a3a"/><circle cx="183.9" cy="96.3" r="2.1" fill="#3a3a3a"/><circle cx="217.4" cy="82.0" r="2.1" fill="#3a3a3a"/><circle cx="217.4" cy="96.3" r="2.1" fill="#3a3a3a"/><circle cx="322.8" cy="82.0" r="2.1" fill="#3a3a3a"/><circle cx="322.8" cy="96.3" r="2.1" fill="#3a3a3a"/><circle cx="318.0" cy="101.0" r="2.1" fill="#3a3a3a"/><circle cx="284.5" cy="96.3" r="2.1" fill="#3a3a3a"/><circle cx="294.0" cy="96.3" r="2.1" fill="#3a3a3a"/><circle cx="303.6" cy="96.3" r="2.1" fill="#3a3a3a"/><circle cx="308.4" cy="101.0" r="2.1" fill="#3a3a3a"/><circle cx="313.2" cy="96.3" r="2.1" fill="#3a3a3a"/><circle cx="327.5" cy="101.0" r="2.1" fill="#3a3a3a"/><circle cx="327.5" cy="96.3" r="2.1" fill="#3a3a3a"/><circle cx="318.0" cy="96.3" r="2.1" fill="#3a3a3a"/><circle cx="332.3" cy="96.3" r="2.1" fill="#3a3a3a"/><circle cx="322.8" cy="96.3" r="2.1" fill="#3a3a3a"/><circle cx="341.9" cy="77.0" r="2.1" fill="#3a3a3a"/><circle cx="341.9" cy="82.0" r="2.1" fill="#3a3a3a"/><circle cx="337.1" cy="168.1" r="2.1" fill="#3a3a3a"/><circle cx="284.5" cy="115.4" r="2.1" fill="#3a3a3a"/><circle cx="284.5" cy="129.7" r="2.1" fill="#3a3a3a"/><circle cx="289.2" cy="115.4" r="2.1" fill="#3a3a3a"/><circle cx="289.2" cy="129.7" r="2.1" fill="#3a3a3a"/><circle cx="294.0" cy="115.4" r="2.1" fill="#3a3a3a"/><circle cx="294.0" cy="129.7" r="2.1" fill="#3a3a3a"/><circle cx="298.8" cy="115.4" r="2.1" fill="#3a3a3a"/><circle cx="298.8" cy="129.7" r="2.1" fill="#3a3a3a"/><circle cx="303.6" cy="115.4" r="2.1" fill="#3a3a3a"/><circle cx="303.6" cy="129.7" r="2.1" fill="#3a3a3a"/><circle cx="308.4" cy="115.4" r="2.1" fill="#3a3a3a"/><circle cx="308.4" cy="129.7" r="2.1" fill="#3a3a3a"/><circle cx="313.2" cy="115.4" r="2.1" fill="#3a3a3a"/><circle cx="313.2" cy="129.7" r="2.1" fill="#3a3a3a"/><circle cx="318.0" cy="115.4" r="2.1" fill="#3a3a3a"/><circle cx="318.0" cy="129.7" r="2.1" fill="#3a3a3a"/><circle cx="69.0" cy="134.5" r="2.1" fill="#3a3a3a"/><circle cx="49.9" cy="134.5" r="2.1" fill="#3a3a3a"/><circle cx="54.7" cy="134.5" r="2.1" fill="#3a3a3a"/><circle cx="54.7" cy="134.5" r="2.1" fill="#3a3a3a"/><circle cx="59.5" cy="134.5" r="2.1" fill="#3a3a3a"/><circle cx="59.5" cy="134.5" r="2.1" fill="#3a3a3a"/><circle cx="64.3" cy="134.5" r="2.1" fill="#3a3a3a"/><circle cx="64.3" cy="134.5" r="2.1" fill="#3a3a3a"/><circle cx="69.0" cy="134.5" r="2.1" fill="#3a3a3a"/><circle cx="126.5" cy="148.9" r="2.1" fill="#3a3a3a"/><circle cx="107.3" cy="148.9" r="2.1" fill="#3a3a3a"/><circle cx="73.8" cy="148.9" r="2.1" fill="#3a3a3a"/><circle cx="93.0" cy="148.9" r="2.1" fill="#3a3a3a"/><circle cx="54.7" cy="148.9" r="2.1" fill="#3a3a3a"/><circle cx="97.8" cy="148.9" r="2.1" fill="#3a3a3a"/><circle cx="102.6" cy="148.9" r="2.1" fill="#3a3a3a"/><circle cx="121.7" cy="148.9" r="2.1" fill="#3a3a3a"/><circle cx="83.4" cy="148.9" r="2.1" fill="#3a3a3a"/><circle cx="88.2" cy="148.9" r="2.1" fill="#3a3a3a"/><circle cx="78.6" cy="148.9" r="2.1" fill="#3a3a3a"/><circle cx="78.6" cy="163.3" r="2.1" fill="#3a3a3a"/><circle cx="112.1" cy="148.9" r="2.1" fill="#3a3a3a"/><circle cx="107.3" cy="163.3" r="2.1" fill="#3a3a3a"/><circle cx="145.6" cy="148.9" r="2.1" fill="#3a3a3a"/><circle cx="145.6" cy="163.3" r="2.1" fill="#3a3a3a"/><circle cx="179.1" cy="148.9" r="2.1" fill="#3a3a3a"/><circle cx="179.1" cy="163.3" r="2.1" fill="#3a3a3a"/><circle cx="212.7" cy="148.9" r="2.1" fill="#3a3a3a"/><circle cx="212.7" cy="163.3" r="2.1" fill="#3a3a3a"/><circle cx="246.2" cy="148.9" r="2.1" fill="#3a3a3a"/><circle cx="246.2" cy="163.3" r="2.1" fill="#3a3a3a"/><circle cx="131.3" cy="139.3" r="2.1" fill="#3a3a3a"/><circle cx="284.5" cy="139.3" r="2.1" fill="#3a3a3a"/><circle cx="136.1" cy="144.1" r="2.1" fill="#3a3a3a"/><circle cx="298.8" cy="134.5" r="2.1" fill="#3a3a3a"/><circle cx="145.6" cy="148.9" r="2.1" fill="#3a3a3a"/><circle cx="155.2" cy="148.9" r="2.1" fill="#3a3a3a"/><circle cx="179.1" cy="148.9" r="2.1" fill="#3a3a3a"/><circle cx="303.6" cy="144.1" r="2.1" fill="#3a3a3a"/><circle cx="268.8" cy="204.2" r="2.1" fill="#3a3a3a"/><circle cx="318.0" cy="144.1" r="2.1" fill="#3a3a3a"/><circle cx="278.5" cy="204.2" r="2.1" fill="#3a3a3a"/><circle cx="332.3" cy="144.1" r="2.1" fill="#3a3a3a"/><circle cx="287.9" cy="204.2" r="2.1" fill="#3a3a3a"/><circle cx="341.9" cy="144.1" r="2.1" fill="#3a3a3a"/><circle cx="297.3" cy="204.2" r="2.1" fill="#3a3a3a"/><circle cx="322.8" cy="144.1" r="2.1" fill="#3a3a3a"/><circle cx="284.5" cy="148.9" r="2.1" fill="#3a3a3a"/><circle cx="346.7" cy="148.9" r="2.1" fill="#3a3a3a"/><circle cx="289.2" cy="148.9" r="2.1" fill="#3a3a3a"/><circle cx="298.8" cy="148.9" r="2.1" fill="#3a3a3a"/><circle cx="313.2" cy="148.9" r="2.1" fill="#3a3a3a"/><circle cx="322.8" cy="148.9" r="2.1" fill="#3a3a3a"/><circle cx="332.3" cy="148.9" r="2.1" fill="#3a3a3a"/><circle cx="341.9" cy="148.9" r="2.1" fill="#3a3a3a"/><circle cx="308.4" cy="144.1" r="2.1" fill="#3a3a3a"/><circle cx="298.8" cy="139.3" r="2.1" fill="#3a3a3a"/><circle cx="294.0" cy="144.1" r="2.1" fill="#3a3a3a"/><circle cx="351.5" cy="148.9" r="2.1" fill="#3a3a3a"/><circle cx="327.5" cy="163.3" r="2.1" fill="#3a3a3a"/><circle cx="332.3" cy="163.3" r="2.1" fill="#3a3a3a"/><circle cx="337.1" cy="163.3" r="2.1" fill="#3a3a3a"/><circle cx="327.5" cy="168.1" r="2.1" fill="#3a3a3a"/><circle cx="327.5" cy="168.1" r="2.1" fill="#3a3a3a"/><circle cx="326.0" cy="189.9" r="2.1" fill="#3a3a3a"/><circle cx="332.3" cy="163.3" r="2.1" fill="#3a3a3a"/><circle cx="330.8" cy="184.9" r="2.1" fill="#3a3a3a"/><circle cx="580.6" cy="188.4" r="2.1" fill="#3a3a3a"/><circle cx="647.7" cy="188.4" r="2.1" fill="#3a3a3a"/><circle cx="618.9" cy="188.4" r="2.1" fill="#3a3a3a"/><circle cx="666.8" cy="183.4" r="2.1" fill="#3a3a3a"/><circle cx="666.8" cy="269.7" r="2.1" fill="#3a3a3a"/><circle cx="666.8" cy="188.4" r="2.1" fill="#3a3a3a"/><circle cx="666.8" cy="274.5" r="2.1" fill="#3a3a3a"/><circle cx="676.4" cy="255.3" r="2.1" fill="#3a3a3a"/><circle cx="662.0" cy="269.7" r="2.1" fill="#3a3a3a"/><circle cx="427.5" cy="202.7" r="2.1" fill="#3a3a3a"/><circle cx="556.7" cy="207.4" r="2.1" fill="#3a3a3a"/><circle cx="623.7" cy="207.4" r="2.1" fill="#3a3a3a"/><circle cx="537.6" cy="212.2" r="2.1" fill="#3a3a3a"/><circle cx="638.1" cy="212.2" r="2.1" fill="#3a3a3a"/><circle cx="571.1" cy="212.2" r="2.1" fill="#3a3a3a"/><circle cx="590.2" cy="207.4" r="2.1" fill="#3a3a3a"/><circle cx="618.9" cy="207.4" r="2.1" fill="#3a3a3a"/><circle cx="623.7" cy="207.4" r="2.1" fill="#3a3a3a"/><circle cx="633.3" cy="207.4" r="2.1" fill="#3a3a3a"/><circle cx="628.5" cy="207.4" r="2.1" fill="#3a3a3a"/><circle cx="437.0" cy="207.4" r="2.1" fill="#3a3a3a"/><circle cx="427.5" cy="202.7" r="2.1" fill="#3a3a3a"/><circle cx="556.7" cy="202.7" r="2.1" fill="#3a3a3a"/><circle cx="432.2" cy="202.7" r="2.1" fill="#3a3a3a"/><circle cx="441.8" cy="207.4" r="2.1" fill="#3a3a3a"/><circle cx="537.6" cy="207.4" r="2.1" fill="#3a3a3a"/><circle cx="413.1" cy="212.2" r="2.1" fill="#3a3a3a"/><circle cx="518.4" cy="212.2" r="2.1" fill="#3a3a3a"/><circle cx="504.0" cy="212.2" r="2.1" fill="#3a3a3a"/><circle cx="518.4" cy="217.0" r="2.1" fill="#3a3a3a"/><circle cx="551.9" cy="217.0" r="2.1" fill="#3a3a3a"/><circle cx="528.0" cy="217.0" r="2.1" fill="#3a3a3a"/><circle cx="532.8" cy="217.0" r="2.1" fill="#3a3a3a"/><circle cx="561.5" cy="217.0" r="2.1" fill="#3a3a3a"/><circle cx="566.3" cy="217.0" r="2.1" fill="#3a3a3a"/><circle cx="595.0" cy="217.0" r="2.1" fill="#3a3a3a"/><circle cx="609.4" cy="217.0" r="2.1" fill="#3a3a3a"/><circle cx="417.9" cy="211.6" r="2.1" fill="#3a3a3a"/><circle cx="408.3" cy="216.7" r="2.1" fill="#3a3a3a"/><circle cx="499.3" cy="216.4" r="2.1" fill="#3a3a3a"/><circle cx="413.1" cy="217.0" r="2.1" fill="#3a3a3a"/><circle cx="422.7" cy="217.0" r="2.1" fill="#3a3a3a"/><circle cx="441.8" cy="217.0" r="2.1" fill="#3a3a3a"/><circle cx="451.4" cy="217.0" r="2.1" fill="#3a3a3a"/><circle cx="465.8" cy="217.0" r="2.1" fill="#3a3a3a"/><circle cx="470.5" cy="217.0" r="2.1" fill="#3a3a3a"/><circle cx="484.9" cy="217.0" r="2.1" fill="#3a3a3a"/><circle cx="489.7" cy="217.0" r="2.1" fill="#3a3a3a"/><circle cx="494.5" cy="217.0" r="2.1" fill="#3a3a3a"/><circle cx="484.9" cy="202.7" r="2.1" fill="#3a3a3a"/><circle cx="590.2" cy="202.7" r="2.1" fill="#3a3a3a"/><circle cx="571.1" cy="207.4" r="2.1" fill="#3a3a3a"/><circle cx="523.2" cy="207.4" r="2.1" fill="#3a3a3a"/><circle cx="542.3" cy="217.0" r="2.1" fill="#3a3a3a"/><circle cx="575.9" cy="217.0" r="2.1" fill="#3a3a3a"/><circle cx="465.8" cy="207.4" r="2.1" fill="#3a3a3a"/><circle cx="652.4" cy="207.4" r="2.1" fill="#3a3a3a"/><circle cx="604.6" cy="202.7" r="2.1" fill="#3a3a3a"/><circle cx="671.6" cy="202.7" r="2.1" fill="#3a3a3a"/><circle cx="623.7" cy="203.0" r="2.1" fill="#3a3a3a"/><circle cx="657.2" cy="203.0" r="2.1" fill="#3a3a3a"/><circle cx="662.0" cy="217.0" r="2.1" fill="#3a3a3a"/><circle cx="666.8" cy="217.0" r="2.1" fill="#3a3a3a"/><circle cx="508.8" cy="217.0" r="2.1" fill="#3a3a3a"/><circle cx="642.9" cy="212.2" r="2.1" fill="#3a3a3a"/><circle cx="676.4" cy="217.0" r="2.1" fill="#3a3a3a"/><circle cx="384.4" cy="269.7" r="2.1" fill="#3a3a3a"/><circle cx="385.0" cy="296.4" r="2.1" fill="#3a3a3a"/><circle cx="384.4" cy="274.5" r="2.1" fill="#3a3a3a"/><circle cx="385.0" cy="291.4" r="2.1" fill="#3a3a3a"/><circle cx="417.9" cy="240.9" r="2.1" fill="#3a3a3a"/><circle cx="441.8" cy="240.9" r="2.1" fill="#3a3a3a"/><circle cx="413.1" cy="240.9" r="2.1" fill="#3a3a3a"/><circle cx="427.5" cy="240.9" r="2.1" fill="#3a3a3a"/><circle cx="408.3" cy="245.7" r="2.1" fill="#3a3a3a"/><circle cx="451.4" cy="245.7" r="2.1" fill="#3a3a3a"/><circle cx="432.2" cy="245.7" r="2.1" fill="#3a3a3a"/><circle cx="422.7" cy="250.9" r="2.1" fill="#3a3a3a"/><circle cx="480.1" cy="250.9" r="2.1" fill="#3a3a3a"/><circle cx="451.4" cy="245.7" r="2.1" fill="#3a3a3a"/><circle cx="480.1" cy="245.7" r="2.1" fill="#3a3a3a"/><circle cx="465.8" cy="245.7" r="2.1" fill="#3a3a3a"/><circle cx="470.5" cy="245.7" r="2.1" fill="#3a3a3a"/><circle cx="484.9" cy="245.7" r="2.1" fill="#3a3a3a"/><circle cx="499.3" cy="245.7" r="2.1" fill="#3a3a3a"/><circle cx="489.7" cy="245.7" r="2.1" fill="#3a3a3a"/><circle cx="494.5" cy="245.7" r="2.1" fill="#3a3a3a"/><circle cx="484.9" cy="250.5" r="2.1" fill="#3a3a3a"/><circle cx="528.0" cy="250.5" r="2.1" fill="#3a3a3a"/><circle cx="446.6" cy="255.3" r="2.1" fill="#3a3a3a"/><circle cx="580.6" cy="255.3" r="2.1" fill="#3a3a3a"/><circle cx="580.6" cy="240.9" r="2.1" fill="#3a3a3a"/><circle cx="633.3" cy="240.9" r="2.1" fill="#3a3a3a"/><circle cx="614.1" cy="240.9" r="2.1" fill="#3a3a3a"/><circle cx="628.5" cy="240.9" r="2.1" fill="#3a3a3a"/><circle cx="566.3" cy="245.7" r="2.1" fill="#3a3a3a"/><circle cx="618.9" cy="245.7" r="2.1" fill="#3a3a3a"/><circle cx="585.4" cy="245.7" r="2.1" fill="#3a3a3a"/><circle cx="599.8" cy="245.7" r="2.1" fill="#3a3a3a"/><circle cx="623.7" cy="245.7" r="2.1" fill="#3a3a3a"/><circle cx="551.9" cy="250.5" r="2.1" fill="#3a3a3a"/><circle cx="599.8" cy="250.5" r="2.1" fill="#3a3a3a"/><circle cx="523.2" cy="255.3" r="2.1" fill="#3a3a3a"/><circle cx="537.6" cy="255.3" r="2.1" fill="#3a3a3a"/><circle cx="571.1" cy="255.3" r="2.1" fill="#3a3a3a"/><circle cx="542.3" cy="269.7" r="2.1" fill="#3a3a3a"/><circle cx="575.9" cy="269.7" r="2.1" fill="#3a3a3a"/><circle cx="441.8" cy="240.9" r="2.1" fill="#3a3a3a"/><circle cx="532.8" cy="240.9" r="2.1" fill="#3a3a3a"/><circle cx="446.6" cy="240.9" r="2.1" fill="#3a3a3a"/><circle cx="451.4" cy="240.9" r="2.1" fill="#3a3a3a"/><circle cx="456.2" cy="240.9" r="2.1" fill="#3a3a3a"/><circle cx="461.0" cy="240.9" r="2.1" fill="#3a3a3a"/><circle cx="556.7" cy="240.9" r="2.1" fill="#3a3a3a"/><circle cx="561.5" cy="240.9" r="2.1" fill="#3a3a3a"/><circle cx="499.3" cy="245.7" r="2.1" fill="#3a3a3a"/><circle cx="518.4" cy="245.7" r="2.1" fill="#3a3a3a"/><circle cx="437.0" cy="255.3" r="2.1" fill="#3a3a3a"/><circle cx="480.1" cy="250.5" r="2.1" fill="#3a3a3a"/><circle cx="484.9" cy="255.3" r="2.1" fill="#3a3a3a"/><circle cx="499.3" cy="255.3" r="2.1" fill="#3a3a3a"/><circle cx="551.9" cy="255.3" r="2.1" fill="#3a3a3a"/><circle cx="547.1" cy="250.5" r="2.1" fill="#3a3a3a"/><circle cx="513.6" cy="255.3" r="2.1" fill="#3a3a3a"/><circle cx="566.3" cy="255.3" r="2.1" fill="#3a3a3a"/><circle cx="590.2" cy="255.3" r="2.1" fill="#3a3a3a"/><circle cx="604.6" cy="255.3" r="2.1" fill="#3a3a3a"/><circle cx="609.4" cy="269.7" r="2.1" fill="#3a3a3a"/><circle cx="638.1" cy="269.7" r="2.1" fill="#3a3a3a"/><circle cx="475.3" cy="269.7" r="2.1" fill="#3a3a3a"/><circle cx="508.8" cy="255.3" r="2.1" fill="#3a3a3a"/><circle cx="508.8" cy="269.7" r="2.1" fill="#3a3a3a"/><circle cx="475.3" cy="255.3" r="2.1" fill="#3a3a3a"/><circle cx="480.1" cy="255.3" r="2.1" fill="#3a3a3a"/><circle cx="523.2" cy="255.3" r="2.1" fill="#3a3a3a"/><circle cx="532.8" cy="255.3" r="2.1" fill="#3a3a3a"/><circle cx="537.6" cy="255.3" r="2.1" fill="#3a3a3a"/><circle cx="571.1" cy="255.3" r="2.1" fill="#3a3a3a"/><circle cx="575.9" cy="255.3" r="2.1" fill="#3a3a3a"/><circle cx="585.4" cy="255.3" r="2.1" fill="#3a3a3a"/><circle cx="532.8" cy="255.3" r="2.1" fill="#3a3a3a"/><circle cx="652.4" cy="255.3" r="2.1" fill="#3a3a3a"/><circle cx="666.8" cy="255.3" r="2.1" fill="#3a3a3a"/><circle cx="614.1" cy="250.5" r="2.1" fill="#3a3a3a"/><circle cx="647.7" cy="250.5" r="2.1" fill="#3a3a3a"/><circle cx="657.2" cy="250.5" r="2.1" fill="#3a3a3a"/><circle cx="662.0" cy="250.5" r="2.1" fill="#3a3a3a"/><circle cx="504.0" cy="250.5" r="2.1" fill="#3a3a3a"/><circle cx="638.1" cy="240.9" r="2.1" fill="#3a3a3a"/><circle cx="671.6" cy="255.3" r="2.1" fill="#3a3a3a"/><circle cx="389.8" cy="296.4" r="2.1" fill="#3a3a3a"/><circle cx="375.4" cy="310.7" r="2.1" fill="#3a3a3a"/><circle cx="413.7" cy="296.4" r="2.1" fill="#3a3a3a"/><circle cx="413.7" cy="310.7" r="2.1" fill="#3a3a3a"/><circle cx="447.2" cy="296.4" r="2.1" fill="#3a3a3a"/><circle cx="447.2" cy="310.7" r="2.1" fill="#3a3a3a"/><circle cx="480.7" cy="296.4" r="2.1" fill="#3a3a3a"/><circle cx="480.7" cy="310.7" r="2.1" fill="#3a3a3a"/><circle cx="514.2" cy="296.4" r="2.1" fill="#3a3a3a"/><circle cx="514.2" cy="310.7" r="2.1" fill="#3a3a3a"/><circle cx="547.7" cy="296.4" r="2.1" fill="#3a3a3a"/><circle cx="547.7" cy="310.7" r="2.1" fill="#3a3a3a"/><circle cx="581.2" cy="296.4" r="2.1" fill="#3a3a3a"/><circle cx="581.2" cy="310.7" r="2.1" fill="#3a3a3a"/><circle cx="619.5" cy="296.4" r="2.1" fill="#3a3a3a"/><circle cx="614.8" cy="310.7" r="2.1" fill="#3a3a3a"/><circle cx="418.5" cy="348.9" r="2.1" fill="#3a3a3a"/><circle cx="432.8" cy="348.9" r="2.1" fill="#3a3a3a"/><circle cx="432.8" cy="310.7" r="2.1" fill="#3a3a3a"/><circle cx="437.6" cy="310.7" r="2.1" fill="#3a3a3a"/><circle cx="485.5" cy="310.7" r="2.1" fill="#3a3a3a"/><circle cx="490.3" cy="310.7" r="2.1" fill="#3a3a3a"/><circle cx="495.1" cy="310.7" r="2.1" fill="#3a3a3a"/><circle cx="504.6" cy="310.7" r="2.1" fill="#3a3a3a"/><circle cx="519.0" cy="325.0" r="2.1" fill="#3a3a3a"/><circle cx="523.8" cy="325.0" r="2.1" fill="#3a3a3a"/><circle cx="538.2" cy="325.0" r="2.1" fill="#3a3a3a"/><circle cx="571.7" cy="310.7" r="2.1" fill="#3a3a3a"/><circle cx="566.9" cy="310.7" r="2.1" fill="#3a3a3a"/><circle cx="576.5" cy="325.0" r="2.1" fill="#3a3a3a"/><circle cx="375.4" cy="348.9" r="2.1" fill="#3a3a3a"/><circle cx="495.1" cy="348.9" r="2.1" fill="#3a3a3a"/><circle cx="499.9" cy="348.9" r="2.1" fill="#3a3a3a"/><circle cx="547.7" cy="348.9" r="2.1" fill="#3a3a3a"/><circle cx="557.3" cy="348.9" r="2.1" fill="#3a3a3a"/><circle cx="562.1" cy="348.9" r="2.1" fill="#3a3a3a"/><circle cx="528.6" cy="363.3" r="2.1" fill="#3a3a3a"/><circle cx="533.4" cy="363.3" r="2.1" fill="#3a3a3a"/><circle cx="552.5" cy="348.9" r="2.1" fill="#3a3a3a"/><circle cx="566.9" cy="348.9" r="2.1" fill="#3a3a3a"/><circle cx="389.8" cy="310.7" r="2.1" fill="#3a3a3a"/><circle cx="404.1" cy="310.7" r="2.1" fill="#3a3a3a"/><circle cx="418.5" cy="310.7" r="2.1" fill="#3a3a3a"/><circle cx="423.3" cy="315.4" r="2.1" fill="#3a3a3a"/><circle cx="471.1" cy="325.0" r="2.1" fill="#3a3a3a"/><circle cx="475.9" cy="325.0" r="2.1" fill="#3a3a3a"/><circle cx="456.8" cy="325.0" r="2.1" fill="#3a3a3a"/><circle cx="442.4" cy="325.0" r="2.1" fill="#3a3a3a"/><circle cx="452.0" cy="325.0" r="2.1" fill="#3a3a3a"/><circle cx="509.4" cy="325.0" r="2.1" fill="#3a3a3a"/><circle cx="528.6" cy="325.0" r="2.1" fill="#3a3a3a"/><circle cx="533.4" cy="325.0" r="2.1" fill="#3a3a3a"/><circle cx="542.9" cy="325.0" r="2.1" fill="#3a3a3a"/><circle cx="552.5" cy="325.0" r="2.1" fill="#3a3a3a"/><circle cx="557.3" cy="325.0" r="2.1" fill="#3a3a3a"/><circle cx="442.4" cy="325.0" r="2.1" fill="#3a3a3a"/><circle cx="428.1" cy="316.0" r="2.1" fill="#3a3a3a"/><circle cx="672.2" cy="316.0" r="2.1" fill="#3a3a3a"/><circle cx="461.6" cy="325.0" r="2.1" fill="#3a3a3a"/><circle cx="562.1" cy="325.0" r="2.1" fill="#3a3a3a"/><circle cx="667.4" cy="291.4" r="2.1" fill="#3a3a3a"/><circle cx="667.4" cy="310.7" r="2.1" fill="#3a3a3a"/><circle cx="662.6" cy="310.7" r="2.1" fill="#3a3a3a"/><circle cx="677.0" cy="320.2" r="2.1" fill="#3a3a3a"/><circle cx="590.8" cy="348.9" r="2.1" fill="#3a3a3a"/><circle cx="523.8" cy="363.3" r="2.1" fill="#3a3a3a"/><circle cx="490.3" cy="363.3" r="2.1" fill="#3a3a3a"/><circle cx="667.4" cy="363.3" r="2.1" fill="#3a3a3a"/><circle cx="667.4" cy="377.7" r="2.1" fill="#3a3a3a"/><circle cx="385.0" cy="377.7" r="2.1" fill="#3a3a3a"/><circle cx="385.0" cy="382.5" r="2.1" fill="#3a3a3a"/><circle cx="335.6" cy="387.0" r="2.1" fill="#3a3a3a"/><circle cx="423.3" cy="348.9" r="2.1" fill="#3a3a3a"/><circle cx="428.1" cy="348.9" r="2.1" fill="#3a3a3a"/><circle cx="404.1" cy="363.3" r="2.1" fill="#3a3a3a"/><circle cx="404.1" cy="377.7" r="2.1" fill="#3a3a3a"/><circle cx="437.6" cy="348.9" r="2.1" fill="#3a3a3a"/><circle cx="466.4" cy="348.9" r="2.1" fill="#3a3a3a"/><circle cx="452.0" cy="348.9" r="2.1" fill="#3a3a3a"/><circle cx="456.8" cy="348.9" r="2.1" fill="#3a3a3a"/><circle cx="461.6" cy="348.9" r="2.1" fill="#3a3a3a"/><circle cx="471.1" cy="348.9" r="2.1" fill="#3a3a3a"/><circle cx="480.7" cy="348.9" r="2.1" fill="#3a3a3a"/><circle cx="504.6" cy="348.9" r="2.1" fill="#3a3a3a"/><circle cx="514.2" cy="348.9" r="2.1" fill="#3a3a3a"/><circle cx="571.7" cy="348.9" r="2.1" fill="#3a3a3a"/><circle cx="581.2" cy="348.9" r="2.1" fill="#3a3a3a"/><circle cx="538.2" cy="348.9" r="2.1" fill="#3a3a3a"/><circle cx="519.0" cy="348.9" r="2.1" fill="#3a3a3a"/><circle cx="586.0" cy="348.9" r="2.1" fill="#3a3a3a"/><circle cx="442.4" cy="363.3" r="2.1" fill="#3a3a3a"/><circle cx="442.4" cy="377.7" r="2.1" fill="#3a3a3a"/><circle cx="475.9" cy="363.3" r="2.1" fill="#3a3a3a"/><circle cx="475.9" cy="377.7" r="2.1" fill="#3a3a3a"/><circle cx="509.4" cy="363.3" r="2.1" fill="#3a3a3a"/><circle cx="509.4" cy="377.7" r="2.1" fill="#3a3a3a"/><circle cx="542.9" cy="363.3" r="2.1" fill="#3a3a3a"/><circle cx="542.9" cy="377.7" r="2.1" fill="#3a3a3a"/><circle cx="576.5" cy="363.3" r="2.1" fill="#3a3a3a"/><circle cx="576.5" cy="377.7" r="2.1" fill="#3a3a3a"/><circle cx="610.0" cy="363.3" r="2.1" fill="#3a3a3a"/><circle cx="610.0" cy="377.7" r="2.1" fill="#3a3a3a"/><circle cx="643.5" cy="363.3" r="2.1" fill="#3a3a3a"/><circle cx="638.7" cy="377.7" r="2.1" fill="#3a3a3a"/><circle cx="375.4" cy="348.9" r="2.1" fill="#3a3a3a"/><circle cx="385.0" cy="348.9" r="2.1" fill="#3a3a3a"/><circle cx="389.8" cy="348.9" r="2.1" fill="#3a3a3a"/><circle cx="413.7" cy="348.9" r="2.1" fill="#3a3a3a"/><circle cx="380.2" cy="353.7" r="2.1" fill="#3a3a3a"/><circle cx="335.6" cy="382.2" r="2.1" fill="#3a3a3a"/><circle cx="456.2" cy="240.9" r="2.1" fill="#3a3a3a"/><circle cx="380.2" cy="310.7" r="2.1" fill="#3a3a3a"/><circle cx="461.0" cy="217.0" r="2.1" fill="#3a3a3a"/><circle cx="385.0" cy="310.7" r="2.1" fill="#3a3a3a"/><circle cx="470.5" cy="245.7" r="2.1" fill="#3a3a3a"/><circle cx="394.5" cy="310.7" r="2.1" fill="#3a3a3a"/><circle cx="475.3" cy="217.0" r="2.1" fill="#3a3a3a"/><circle cx="399.3" cy="310.7" r="2.1" fill="#3a3a3a"/><path d="M361.6,158.0L361.6,277.0" stroke="#f5d60a" stroke-width="3.2" fill="none" stroke-linecap="round" stroke-linejoin="round"/>
<path d="M361.9,272.0L361.9,298.0" stroke="#f5d60a" stroke-width="3.8" fill="none" stroke-linecap="round" stroke-linejoin="round"/>
<path d="M41.0,283.0L41.0,91.3Q41.0,86.8 45.5,86.8L126.8,86.8Q131.3,86.8 131.3,91.3L131.3,96.3" stroke="#ef8205" stroke-width="1.8" fill="none" stroke-linecap="round" stroke-linejoin="round"/>
<path d="M43.6,283.0L43.6,93.1Q43.6,89.6 47.1,89.6L59.8,89.6Q63.3,89.6 63.8,92.9L64.3,96.3" stroke="#ef8205" stroke-width="1.7" fill="none" stroke-linecap="round" stroke-linejoin="round"/>
<path d="M55.3,86.8L59.8,86.8Q64.3,86.8 64.3,91.3L64.3,96.3" stroke="#ef8205" stroke-width="1.6" fill="none" stroke-linecap="round" stroke-linejoin="round"/>
<path d="M69.6,86.8L74.1,86.8Q78.6,86.8 78.6,91.3L78.6,96.3" stroke="#ef8205" stroke-width="1.6" fill="none" stroke-linecap="round" stroke-linejoin="round"/>
<path d="M88.8,86.8L93.3,86.8Q97.8,86.8 97.8,91.3L97.8,96.3" stroke="#ef8205" stroke-width="1.6" fill="none" stroke-linecap="round" stroke-linejoin="round"/>
<path d="M103.1,86.8L107.6,86.8Q112.1,86.8 112.1,91.3L112.1,96.3" stroke="#ef8205" stroke-width="1.6" fill="none" stroke-linecap="round" stroke-linejoin="round"/>
<path d="M42.0,156.0L42.0,283.0" stroke="#ef8205" stroke-width="5.8" fill="none" stroke-linecap="round" stroke-linejoin="round"/>
<path d="M145.6,96.3L145.6,89.8Q145.6,86.3 149.1,86.3L356.0,86.3Q359.5,86.3 359.5,89.8L359.5,150.0" stroke="#ef8205" stroke-width="1.0" fill="none" stroke-linecap="round" stroke-linejoin="round"/>
<path d="M54.7,96.3L54.7,94.1Q54.7,91.9 57.7,91.9L104.3,91.9Q107.3,91.9 107.3,94.1L107.3,96.3" stroke="#f5d60a" stroke-width="1.5" fill="none" stroke-linecap="round" stroke-linejoin="round"/>
<path d="M55.5,92.5L57.5,92.5Q59.5,92.5 59.5,94.4L59.5,96.3" stroke="#f5d60a" stroke-width="1.5" fill="none" stroke-linecap="round" stroke-linejoin="round"/>
<path d="M65.0,92.5L67.0,92.5Q69.0,92.5 69.0,94.4L69.0,96.3" stroke="#f5d60a" stroke-width="1.5" fill="none" stroke-linecap="round" stroke-linejoin="round"/>
<path d="M69.8,92.5L71.8,92.5Q73.8,92.5 73.8,94.4L73.8,96.3" stroke="#f5d60a" stroke-width="1.5" fill="none" stroke-linecap="round" stroke-linejoin="round"/>
<path d="M84.2,92.5L86.2,92.5Q88.2,92.5 88.2,94.4L88.2,96.3" stroke="#f5d60a" stroke-width="1.5" fill="none" stroke-linecap="round" stroke-linejoin="round"/>
<path d="M89.0,92.5L91.0,92.5Q93.0,92.5 93.0,94.4L93.0,96.3" stroke="#f5d60a" stroke-width="1.5" fill="none" stroke-linecap="round" stroke-linejoin="round"/>
<path d="M98.6,92.5L100.6,92.5Q102.6,92.5 102.6,94.4L102.6,96.3" stroke="#f5d60a" stroke-width="1.5" fill="none" stroke-linecap="round" stroke-linejoin="round"/>
<path d="M54.7,101.0L59.5,101.0" stroke="#f5d60a" stroke-width="1.5" fill="none" stroke-linecap="round" stroke-linejoin="round"/>
<path d="M69.0,101.0L73.8,101.0" stroke="#f5d60a" stroke-width="1.5" fill="none" stroke-linecap="round" stroke-linejoin="round"/>
<path d="M73.8,101.0L74.3,101.8Q74.8,102.6 75.8,102.6L87.2,102.6Q88.2,102.6 89.1,102.3L93.0,101.0" stroke="#f5d60a" stroke-width="1.5" fill="none" stroke-linecap="round" stroke-linejoin="round"/>
<path d="M88.2,101.0L93.0,101.0" stroke="#f5d60a" stroke-width="1.5" fill="none" stroke-linecap="round" stroke-linejoin="round"/>
<path d="M59.5,101.0L59.5,99.3Q59.5,97.6 62.0,97.6L90.5,97.6Q93.0,97.6 93.0,95.1L93.0,94.8Q93.0,92.3 95.5,92.3L124.0,92.3Q126.5,92.3 126.5,94.3L126.5,96.3" stroke="#40b63a" stroke-width="1.5" fill="none" stroke-linecap="round" stroke-linejoin="round"/>
<path d="M73.8,105.8L85.7,105.8Q88.2,105.8 90.7,105.8L126.5,105.8" stroke="#40b63a" stroke-width="1.5" fill="none" stroke-linecap="round" stroke-linejoin="round"/>
<path d="M93.0,101.0L93.7,101.8Q94.5,102.7 96.5,102.7L119.7,102.7Q121.7,102.7 121.7,100.7L121.7,96.3" stroke="#40b63a" stroke-width="1.5" fill="none" stroke-linecap="round" stroke-linejoin="round"/>
<path d="M116.9,134.5L116.9,93.1Q116.9,89.6 120.4,89.6L285.8,89.6Q289.2,89.6 289.2,92.9L289.2,96.3" stroke="#40b63a" stroke-width="1.5" fill="none" stroke-linecap="round" stroke-linejoin="round"/>
<path d="M132.1,91.3L303.9,91.3Q307.4,91.3 307.9,93.8L308.4,96.3" stroke="#40b63a" stroke-width="1.5" fill="none" stroke-linecap="round" stroke-linejoin="round"/>
<path d="M179.1,101.0L179.1,91.6Q179.1,88.6 176.1,88.6L164.8,88.6" stroke="#40b63a" stroke-width="1.5" fill="none" stroke-linecap="round" stroke-linejoin="round"/>
<path d="M140.1,91.0L138.1,91.0Q136.1,91.0 136.1,93.7L136.1,96.3" stroke="#40b63a" stroke-width="1.5" fill="none" stroke-linecap="round" stroke-linejoin="round"/>
<path d="M144.9,91.0L142.9,91.0Q140.9,91.0 140.9,93.7L140.9,96.3" stroke="#40b63a" stroke-width="1.5" fill="none" stroke-linecap="round" stroke-linejoin="round"/>
<path d="M164.0,91.0L162.0,91.0Q160.0,91.0 160.0,93.7L160.0,96.3" stroke="#40b63a" stroke-width="1.5" fill="none" stroke-linecap="round" stroke-linejoin="round"/>
<path d="M168.8,91.0L166.8,91.0Q164.8,91.0 164.8,93.7L164.8,96.3" stroke="#40b63a" stroke-width="1.5" fill="none" stroke-linecap="round" stroke-linejoin="round"/>
<path d="M173.6,91.0L171.6,91.0Q169.6,91.0 169.6,93.7L169.6,96.3" stroke="#40b63a" stroke-width="1.5" fill="none" stroke-linecap="round" stroke-linejoin="round"/>
<path d="M136.1,101.0L136.1,102.1Q136.1,103.2 138.1,103.2L172.4,103.2Q174.4,103.2 174.4,102.1L174.4,101.0" stroke="#40b63a" stroke-width="1.5" fill="none" stroke-linecap="round" stroke-linejoin="round"/>
<path d="M64.3,82.0L49.9,96.3" stroke="#e6222a" stroke-width="1.1" fill="none" stroke-linecap="round" stroke-linejoin="round"/>
<path d="M88.2,82.0L83.4,96.3" stroke="#e6222a" stroke-width="1.1" fill="none" stroke-linecap="round" stroke-linejoin="round"/>
<path d="M116.9,82.0L116.9,96.3" stroke="#e6222a" stroke-width="1.1" fill="none" stroke-linecap="round" stroke-linejoin="round"/>
<path d="M150.4,82.0L150.4,96.3" stroke="#e6222a" stroke-width="1.1" fill="none" stroke-linecap="round" stroke-linejoin="round"/>
<path d="M183.9,82.0L183.9,96.3" stroke="#e6222a" stroke-width="1.1" fill="none" stroke-linecap="round" stroke-linejoin="round"/>
<path d="M217.4,82.0L217.4,96.3" stroke="#e6222a" stroke-width="1.1" fill="none" stroke-linecap="round" stroke-linejoin="round"/>
<path d="M322.8,82.0L322.8,96.3" stroke="#e6222a" stroke-width="1.1" fill="none" stroke-linecap="round" stroke-linejoin="round"/>
<path d="M212.7,105.8L212.7,91.3Q212.7,87.3 216.7,87.3L353.5,87.3Q357.5,87.3 359.1,89.2L359.1,89.2Q360.7,91.0 360.7,95.0L360.7,172.0Q360.7,176.0 361.0,178.0L361.0,178.0Q361.4,180.0 361.4,184.0L361.4,283.0" stroke="#f5d60a" stroke-width="1.5" fill="none" stroke-linecap="round" stroke-linejoin="round"/>
<path d="M330.0,88.6L355.5,88.6Q358.5,88.6 360.1,90.3L360.1,90.3Q361.7,92.0 361.7,95.0L361.7,177.0" stroke="#40b63a" stroke-width="1.0" fill="none" stroke-linecap="round" stroke-linejoin="round"/>
<path d="M174.4,92.3L312.0,92.3Q315.5,92.3 316.4,95.7L318.0,101.0" stroke="#f5d60a" stroke-width="1.5" fill="none" stroke-linecap="round" stroke-linejoin="round"/>
<path d="M281.5,92.6L283.0,92.6Q284.5,92.6 284.5,94.4L284.5,96.3" stroke="#f5d60a" stroke-width="1.5" fill="none" stroke-linecap="round" stroke-linejoin="round"/>
<path d="M291.0,92.6L292.5,92.6Q294.0,92.6 294.0,94.4L294.0,96.3" stroke="#f5d60a" stroke-width="1.5" fill="none" stroke-linecap="round" stroke-linejoin="round"/>
<path d="M300.6,92.6L302.1,92.6Q303.6,92.6 303.6,94.4L303.6,96.3" stroke="#f5d60a" stroke-width="1.5" fill="none" stroke-linecap="round" stroke-linejoin="round"/>
<path d="M207.9,105.8L207.9,102.2Q207.9,99.7 210.4,99.7L303.4,99.7Q305.9,99.7 307.1,100.3L308.4,101.0" stroke="#1a96d2" stroke-width="1.4" fill="none" stroke-linecap="round" stroke-linejoin="round"/>
<path d="M188.8,100.7L279.7,100.7" stroke="#1a96d2" stroke-width="1.4" fill="none" stroke-linecap="round" stroke-linejoin="round"/>
<path d="M198.3,105.8L195.9,105.8Q193.5,105.8 193.5,104.3L193.5,104.3Q193.5,102.9 196.0,102.9L289.0,102.9Q291.5,102.9 292.8,104.3L294.0,105.8" stroke="#1a96d2" stroke-width="1.3" fill="none" stroke-linecap="round" stroke-linejoin="round"/>
<path d="M313.2,96.3L327.5,101.0" stroke="#1a96d2" stroke-width="1.5" fill="none" stroke-linecap="round" stroke-linejoin="round"/>
<path d="M327.5,96.3L327.5,93.7Q327.5,91.0 331.0,91.0L352.9,91.0Q356.4,91.0 357.9,92.5L357.9,92.5Q359.4,94.0 359.4,97.5L359.4,156.0" stroke="#1a96d2" stroke-width="1.5" fill="none" stroke-linecap="round" stroke-linejoin="round"/>
<path d="M318.0,96.3L332.3,96.3" stroke="#40b63a" stroke-width="1.5" fill="none" stroke-linecap="round" stroke-linejoin="round"/>
<path d="M341.9,77.0L354.5,77.0Q357.5,77.0 359.1,78.5L359.1,78.5Q360.6,80.0 360.6,83.0L360.6,150.0" stroke="#373737" stroke-width="1.3" fill="none" stroke-linecap="round" stroke-linejoin="round"/>
<path d="M341.9,82.0L351.0,82.0Q354.5,82.0 356.0,83.5L356.0,83.5Q357.5,85.0 357.5,88.5L357.5,161.0Q357.5,164.5 355.8,166.3L355.8,166.3Q354.0,168.1 350.5,168.1L337.1,168.1" stroke="#e6222a" stroke-width="1.2" fill="none" stroke-linecap="round" stroke-linejoin="round"/>
<path d="M284.5,115.4L284.5,129.7" stroke="#373737" stroke-width="1.2" fill="none" stroke-linecap="round" stroke-linejoin="round"/>
<path d="M289.2,115.4L289.2,129.7" stroke="#373737" stroke-width="1.2" fill="none" stroke-linecap="round" stroke-linejoin="round"/>
<path d="M294.0,115.4L294.0,129.7" stroke="#373737" stroke-width="1.2" fill="none" stroke-linecap="round" stroke-linejoin="round"/>
<path d="M298.8,115.4L298.8,129.7" stroke="#373737" stroke-width="1.2" fill="none" stroke-linecap="round" stroke-linejoin="round"/>
<path d="M303.6,115.4L303.6,129.7" stroke="#373737" stroke-width="1.2" fill="none" stroke-linecap="round" stroke-linejoin="round"/>
<path d="M308.4,115.4L308.4,129.7" stroke="#373737" stroke-width="1.2" fill="none" stroke-linecap="round" stroke-linejoin="round"/>
<path d="M313.2,115.4L313.2,129.7" stroke="#373737" stroke-width="1.2" fill="none" stroke-linecap="round" stroke-linejoin="round"/>
<path d="M318.0,115.4L318.0,129.7" stroke="#373737" stroke-width="1.2" fill="none" stroke-linecap="round" stroke-linejoin="round"/>
<path d="M69.0,134.5L69.0,133.2Q69.0,131.9 66.5,131.9L47.7,131.9Q45.2,131.9 45.2,134.4L45.2,151.9Q45.2,154.4 47.7,154.4L88.2,154.4" stroke="#f5d60a" stroke-width="1.2" fill="none" stroke-linecap="round" stroke-linejoin="round"/>
<path d="M49.9,134.5L54.7,134.5" stroke="#f5d60a" stroke-width="1.5" fill="none" stroke-linecap="round" stroke-linejoin="round"/>
<path d="M54.7,134.5L59.5,134.5" stroke="#f5d60a" stroke-width="1.5" fill="none" stroke-linecap="round" stroke-linejoin="round"/>
<path d="M59.5,134.5L64.3,134.5" stroke="#f5d60a" stroke-width="1.5" fill="none" stroke-linecap="round" stroke-linejoin="round"/>
<path d="M64.3,134.5L69.0,134.5" stroke="#f5d60a" stroke-width="1.5" fill="none" stroke-linecap="round" stroke-linejoin="round"/>
<path d="M42.0,155.7L123.5,155.7Q126.5,155.7 126.5,152.7L126.5,148.9" stroke="#ef8205" stroke-width="1.6" fill="none" stroke-linecap="round" stroke-linejoin="round"/>
<path d="M42.0,156.7L104.3,156.7Q107.3,156.7 107.3,153.7L107.3,148.9" stroke="#ef8205" stroke-width="1.6" fill="none" stroke-linecap="round" stroke-linejoin="round"/>
<path d="M42.0,152.6L70.8,152.6Q73.8,152.6 73.8,150.8L73.8,148.9" stroke="#ef8205" stroke-width="1.4" fill="none" stroke-linecap="round" stroke-linejoin="round"/>
<path d="M60.0,153.0L90.0,153.0Q93.0,153.0 93.0,150.9L93.0,148.9" stroke="#ef8205" stroke-width="1.4" fill="none" stroke-linecap="round" stroke-linejoin="round"/>
<path d="M54.7,148.9L54.7,150.7Q54.7,152.5 57.7,152.5L78.6,152.5" stroke="#40b63a" stroke-width="1.5" fill="none" stroke-linecap="round" stroke-linejoin="round"/>
<path d="M97.8,148.9L97.8,150.6Q97.8,152.3 100.8,152.3L345.0,152.3" stroke="#40b63a" stroke-width="1.5" fill="none" stroke-linecap="round" stroke-linejoin="round"/>
<path d="M102.6,148.9L102.6,150.4Q102.6,151.8 105.1,151.8L119.2,151.8Q121.7,151.8 121.7,150.4L121.7,148.9" stroke="#40b63a" stroke-width="1.5" fill="none" stroke-linecap="round" stroke-linejoin="round"/>
<path d="M83.4,148.9L83.4,151.1Q83.4,153.2 86.4,153.2L89.4,153.2" stroke="#f5d60a" stroke-width="1.5" fill="none" stroke-linecap="round" stroke-linejoin="round"/>
<path d="M88.2,148.9L88.2,151.4Q88.2,153.8 91.2,153.8L94.2,153.8" stroke="#f5d60a" stroke-width="1.5" fill="none" stroke-linecap="round" stroke-linejoin="round"/>
<path d="M140.9,148.9L140.9,151.9Q140.9,155.0 144.1,155.0L353.8,155.0Q357.0,155.0 358.9,157.0L360.9,159.0" stroke="#f5d60a" stroke-width="1.75" fill="none" stroke-linecap="round" stroke-linejoin="round"/>
<path d="M160.0,148.9L160.0,153.4Q160.0,156.6 163.2,156.6L353.8,156.6Q357.0,156.6 358.9,158.6L360.9,160.6" stroke="#f5d60a" stroke-width="1.75" fill="none" stroke-linecap="round" stroke-linejoin="round"/>
<path d="M174.4,148.9L174.4,155.1Q174.4,158.3 177.6,158.3L353.8,158.3Q357.0,158.3 358.9,160.3L360.9,162.3" stroke="#f5d60a" stroke-width="1.75" fill="none" stroke-linecap="round" stroke-linejoin="round"/>
<path d="M193.5,148.9L193.5,156.8Q193.5,160.0 196.7,160.0L353.8,160.0Q357.0,160.0 358.9,162.0L360.9,164.0" stroke="#f5d60a" stroke-width="1.75" fill="none" stroke-linecap="round" stroke-linejoin="round"/>
<path d="M88.2,154.2L140.9,154.6" stroke="#f5d60a" stroke-width="1.6" fill="none" stroke-linecap="round" stroke-linejoin="round"/>
<path d="M78.6,148.9L78.6,163.3" stroke="#373737" stroke-width="1.1" fill="none" stroke-linecap="round" stroke-linejoin="round"/>
<path d="M112.1,148.9L107.3,163.3" stroke="#373737" stroke-width="1.1" fill="none" stroke-linecap="round" stroke-linejoin="round"/>
<path d="M145.6,148.9L145.6,163.3" stroke="#373737" stroke-width="1.1" fill="none" stroke-linecap="round" stroke-linejoin="round"/>
<path d="M179.1,148.9L179.1,163.3" stroke="#373737" stroke-width="1.1" fill="none" stroke-linecap="round" stroke-linejoin="round"/>
<path d="M212.7,148.9L212.7,163.3" stroke="#373737" stroke-width="1.1" fill="none" stroke-linecap="round" stroke-linejoin="round"/>
<path d="M246.2,148.9L246.2,163.3" stroke="#373737" stroke-width="1.1" fill="none" stroke-linecap="round" stroke-linejoin="round"/>
<path d="M131.3,134.5L164.8,134.5" stroke="#1a96d2" stroke-width="1.5" fill="none" stroke-linecap="round" stroke-linejoin="round"/>
<path d="M131.3,139.3L284.5,139.3" stroke="#1a96d2" stroke-width="1.5" fill="none" stroke-linecap="round" stroke-linejoin="round"/>
<path d="M136.1,144.1L283.2,144.1Q289.2,144.1 293.5,139.9L298.8,134.5" stroke="#1a96d2" stroke-width="1.5" fill="none" stroke-linecap="round" stroke-linejoin="round"/>
<path d="M136.1,148.9L183.9,148.9" stroke="#1a96d2" stroke-width="1.5" fill="none" stroke-linecap="round" stroke-linejoin="round"/>
<path d="M169.6,134.5L169.6,153.7" stroke="#1a96d2" stroke-width="1.5" fill="none" stroke-linecap="round" stroke-linejoin="round"/>
<path d="M150.4,144.1L150.4,150.7Q150.4,153.7 153.4,153.7L263.0,153.7Q266.0,153.7 267.4,155.3L267.4,155.3Q268.8,157.0 268.8,160.0L268.8,200.0" stroke="#1a96d2" stroke-width="1.5" fill="none" stroke-linecap="round" stroke-linejoin="round"/>
<path d="M155.2,148.9L155.2,153.0" stroke="#1a96d2" stroke-width="1.5" fill="none" stroke-linecap="round" stroke-linejoin="round"/>
<path d="M188.7,148.9L188.7,153.7" stroke="#1a96d2" stroke-width="1.5" fill="none" stroke-linecap="round" stroke-linejoin="round"/>
<path d="M303.6,144.1L303.6,150.7Q303.6,153.2 302.1,153.4L302.1,153.4Q300.6,153.7 298.1,153.7L274.3,153.7Q271.8,153.7 270.3,155.2L270.3,155.2Q268.8,156.7 268.8,159.2L268.8,204.2" stroke="#1a96d2" stroke-width="1.5" fill="none" stroke-linecap="round" stroke-linejoin="round"/>
<path d="M318.0,144.1L318.0,152.3Q318.0,154.8 316.5,155.1L316.5,155.1Q315.0,155.3 312.5,155.3L284.0,155.3Q281.5,155.3 280.0,156.8L280.0,156.8Q278.5,158.3 278.5,160.8L278.5,204.2" stroke="#1a96d2" stroke-width="1.5" fill="none" stroke-linecap="round" stroke-linejoin="round"/>
<path d="M332.3,144.1L332.3,153.9Q332.3,156.4 330.8,156.7L330.8,156.7Q329.3,156.9 326.8,156.9L293.4,156.9Q290.9,156.9 289.4,158.4L289.4,158.4Q287.9,159.9 287.9,162.4L287.9,204.2" stroke="#1a96d2" stroke-width="1.5" fill="none" stroke-linecap="round" stroke-linejoin="round"/>
<path d="M341.9,144.1L341.9,155.3Q341.9,157.8 340.4,158.1L340.4,158.1Q338.9,158.3 336.4,158.3L302.8,158.3Q300.3,158.3 298.8,159.8L298.8,159.8Q297.3,161.3 297.3,163.8L297.3,204.2" stroke="#1a96d2" stroke-width="1.5" fill="none" stroke-linecap="round" stroke-linejoin="round"/>
<path d="M322.8,144.1L322.8,152.5Q322.8,154.5 320.8,155.0L318.8,155.5" stroke="#1a96d2" stroke-width="1.5" fill="none" stroke-linecap="round" stroke-linejoin="round"/>
<path d="M284.5,148.9L346.7,148.9" stroke="#40b63a" stroke-width="1.2" fill="none" stroke-linecap="round" stroke-linejoin="round"/>
<path d="M284.5,144.1L284.5,152.3" stroke="#40b63a" stroke-width="1.2" fill="none" stroke-linecap="round" stroke-linejoin="round"/>
<path d="M298.8,139.3L298.8,148.9" stroke="#40b63a" stroke-width="1.2" fill="none" stroke-linecap="round" stroke-linejoin="round"/>
<path d="M294.0,144.1L294.0,153.5" stroke="#f5d60a" stroke-width="1.5" fill="none" stroke-linecap="round" stroke-linejoin="round"/>
<path d="M308.4,144.1L308.4,153.5" stroke="#f5d60a" stroke-width="1.5" fill="none" stroke-linecap="round" stroke-linejoin="round"/>
<path d="M298.8,148.9L298.8,153.5" stroke="#f5d60a" stroke-width="1.5" fill="none" stroke-linecap="round" stroke-linejoin="round"/>
<path d="M351.5,148.9L351.5,159.5Q351.5,161.5 350.0,162.4L350.0,162.4Q348.5,163.3 346.5,163.3L327.5,163.3" stroke="#373737" stroke-width="1.2" fill="none" stroke-linecap="round" stroke-linejoin="round"/>
<path d="M201.6,189.9L206.4,189.9" stroke="#e6222a" stroke-width="1.3" fill="none" stroke-linecap="round" stroke-linejoin="round"/>
<path d="M230.3,189.9L235.1,189.9" stroke="#e6222a" stroke-width="1.3" fill="none" stroke-linecap="round" stroke-linejoin="round"/>
<path d="M259.0,189.9L263.8,189.9" stroke="#e6222a" stroke-width="1.3" fill="none" stroke-linecap="round" stroke-linejoin="round"/>
<path d="M394.1,167.3L394.1,174.0Q394.1,177.0 391.1,177.0L311.5,177.0Q308.5,177.0 307.4,179.0L307.4,179.0Q306.4,181.0 306.4,184.0L306.4,192.4" stroke="#40b63a" stroke-width="1.5" fill="none" stroke-linecap="round" stroke-linejoin="round"/>
<path d="M398.7,167.9L398.7,175.6Q398.7,178.6 395.7,178.6L315.8,178.6Q312.8,178.6 312.1,179.8L312.1,179.8Q311.4,181.0 311.4,182.9L311.4,184.9" stroke="#40b63a" stroke-width="1.5" fill="none" stroke-linecap="round" stroke-linejoin="round"/>
<path d="M301.5,184.5L305.7,192.4" stroke="#40b63a" stroke-width="1.5" fill="none" stroke-linecap="round" stroke-linejoin="round"/>
<path d="M316.5,189.9L321.3,189.9" stroke="#40b63a" stroke-width="1.5" fill="none" stroke-linecap="round" stroke-linejoin="round"/>
<path d="M327.5,168.1L326.0,189.9" stroke="#e6222a" stroke-width="1.3" fill="none" stroke-linecap="round" stroke-linejoin="round"/>
<path d="M332.3,163.3L330.8,184.9" stroke="#373737" stroke-width="1.3" fill="none" stroke-linecap="round" stroke-linejoin="round"/>
<path d="M340.4,184.9L353.5,184.9Q356.5,184.9 358.2,186.4L358.2,186.4Q360.0,188.0 360.0,191.0L360.0,264.0Q360.0,267.0 358.0,269.1L358.0,269.1Q356.0,271.2 353.0,271.2L340.4,271.2" stroke="#373737" stroke-width="1.3" fill="none" stroke-linecap="round" stroke-linejoin="round"/>
<path d="M340.4,189.9L355.0,189.9Q358.5,189.9 360.6,191.9L360.6,191.9Q362.8,194.0 362.8,197.5L362.8,268.0Q362.8,271.5 360.9,273.8L360.9,273.8Q359.0,276.0 355.5,276.0L340.4,276.0" stroke="#e6222a" stroke-width="1.3" fill="none" stroke-linecap="round" stroke-linejoin="round"/>
<path d="M335.6,185.7L335.6,182.8Q335.6,180.3 338.1,180.3L381.9,180.3Q384.4,180.3 384.4,181.9L384.4,183.4" stroke="#373737" stroke-width="1.3" fill="none" stroke-linecap="round" stroke-linejoin="round"/>
<path d="M335.6,189.9L335.6,192.9Q335.6,196.0 339.1,196.0L377.0,196.0Q380.5,196.0 382.5,194.0L382.5,194.0Q384.5,192.0 385.2,190.3L385.2,190.3Q386.0,188.6 387.6,188.5L389.2,188.4" stroke="#e6222a" stroke-width="1.3" fill="none" stroke-linecap="round" stroke-linejoin="round"/>
<path d="M379.6,217.0L317.5,217.7Q314.0,217.7 312.3,219.3L312.3,219.3Q310.6,221.0 310.6,224.5L310.6,243.5" stroke="#1a96d2" stroke-width="1.5" fill="none" stroke-linecap="round" stroke-linejoin="round"/>
<path d="M310.6,236.0L310.6,238.4Q310.6,240.4 308.9,241.4L308.7,241.4Q307.0,242.4 305.0,242.4L289.8,242.4Q287.8,242.4 289.7,242.4L393.9,240.9" stroke="#1a96d2" stroke-width="1.5" fill="none" stroke-linecap="round" stroke-linejoin="round"/>
<path d="M278.2,247.2L384.4,245.7" stroke="#1a96d2" stroke-width="1.5" fill="none" stroke-linecap="round" stroke-linejoin="round"/>
<path d="M268.6,252.0L374.8,250.5" stroke="#1a96d2" stroke-width="1.5" fill="none" stroke-linecap="round" stroke-linejoin="round"/>
<path d="M273.4,256.8L273.4,271.2" stroke="#ef8205" stroke-width="1.5" fill="none" stroke-linecap="round" stroke-linejoin="round"/>
<path d="M283.0,256.8L283.0,271.2" stroke="#ef8205" stroke-width="1.5" fill="none" stroke-linecap="round" stroke-linejoin="round"/>
<path d="M292.5,256.8L292.5,271.2" stroke="#ef8205" stroke-width="1.5" fill="none" stroke-linecap="round" stroke-linejoin="round"/>
<path d="M302.1,256.8L302.1,271.2" stroke="#ef8205" stroke-width="1.5" fill="none" stroke-linecap="round" stroke-linejoin="round"/>
<path d="M268.6,256.8L268.6,307.3Q268.6,310.3 266.6,310.6L266.6,310.6Q264.6,310.8 261.6,310.9L115.0,315.6" stroke="#ef8205" stroke-width="1.5" fill="none" stroke-linecap="round" stroke-linejoin="round"/>
<path d="M278.2,256.8L278.2,356.0Q278.2,359.5 276.2,361.4L276.2,361.4Q274.2,363.2 270.7,363.2L249.4,363.2" stroke="#ef8205" stroke-width="1.5" fill="none" stroke-linecap="round" stroke-linejoin="round"/>
<path d="M287.8,256.8L287.8,352.0Q287.8,355.5 285.8,357.2L285.8,357.2Q283.8,359.0 280.3,359.2L279.5,359.3Q276.0,359.5 272.5,359.9L196.0,368.0" stroke="#ef8205" stroke-width="1.5" fill="none" stroke-linecap="round" stroke-linejoin="round"/>
<path d="M297.3,256.8L297.3,271.0Q297.3,274.5 299.3,276.4L299.3,276.4Q301.3,278.3 304.8,278.3L313.5,278.3Q317.0,278.3 319.1,280.1L319.1,280.1Q321.2,282.0 321.2,285.5L321.2,315.2" stroke="#ef8205" stroke-width="1.5" fill="none" stroke-linecap="round" stroke-linejoin="round"/>
<path d="M44.0,283.2L364.0,283.2" stroke="#ef8205" stroke-width="2.8" fill="none" stroke-linecap="round" stroke-linejoin="round"/>
<path d="M62.8,242.1L45.5,242.1Q42.0,242.1 40.3,244.1L40.3,244.1Q38.6,246.0 38.6,249.5L38.6,279.5Q38.6,283.0 38.2,286.0L38.2,286.0Q37.9,289.0 37.9,292.5L37.9,348.5Q37.9,352.0 40.6,354.2L41.3,354.8Q44.0,357.0 47.5,357.0L60.0,357.0" stroke="#f5d60a" stroke-width="1.5" fill="none" stroke-linecap="round" stroke-linejoin="round"/>
<path d="M77.1,242.4L77.1,243.4Q77.1,244.4 74.1,244.4L48.0,244.4Q45.0,244.4 43.3,246.7L43.3,246.7Q41.6,249.0 41.6,252.0L41.6,280.0Q41.6,283.0 42.1,286.0L42.2,286.0Q42.7,289.0 42.7,292.0L42.7,315.0Q42.7,318.0 45.6,318.7L68.0,324.5" stroke="#f5d60a" stroke-width="1.5" fill="none" stroke-linecap="round" stroke-linejoin="round"/>
<path d="M91.5,242.4L91.5,243.6Q91.5,244.8 88.5,244.8L51.0,244.8Q48.0,244.8 46.5,247.4L46.5,247.4Q45.0,250.0 45.0,253.0L45.0,280.0Q45.0,283.0 44.8,286.0L44.7,286.0Q44.5,289.0 44.5,292.0L44.5,310.0Q44.5,313.0 47.4,313.7L59.1,316.3Q62.0,317.0 64.7,318.4L67.5,319.9" stroke="#f5d60a" stroke-width="1.5" fill="none" stroke-linecap="round" stroke-linejoin="round"/>
<path d="M91.5,242.4L235.1,242.4" stroke="#f5d60a" stroke-width="1.5" fill="none" stroke-linecap="round" stroke-linejoin="round"/>
<path d="M147.1,247.2L220.7,247.2" stroke="#f5d60a" stroke-width="1.5" fill="none" stroke-linecap="round" stroke-linejoin="round"/>
<path d="M163.3,252.0L238.7,252.0Q241.7,252.0 243.2,253.5L243.2,253.5Q244.7,255.0 244.7,258.0L244.7,329.5" stroke="#f5d60a" stroke-width="1.5" fill="none" stroke-linecap="round" stroke-linejoin="round"/>
<path d="M192.0,252.0L253.0,252.0Q256.0,252.0 257.5,253.5L257.5,253.5Q259.0,255.0 259.0,258.0L259.0,329.5" stroke="#f5d60a" stroke-width="1.5" fill="none" stroke-linecap="round" stroke-linejoin="round"/>
<path d="M163.3,256.8L257.8,256.8Q260.8,256.8 262.3,258.3L262.3,258.3Q263.8,259.8 263.8,262.8L263.8,329.5" stroke="#f5d60a" stroke-width="1.5" fill="none" stroke-linecap="round" stroke-linejoin="round"/>
<path d="M249.5,242.4L249.5,329.5" stroke="#f5d60a" stroke-width="1.5" fill="none" stroke-linecap="round" stroke-linejoin="round"/>
<path d="M91.5,242.4L91.5,334.3" stroke="#f5d60a" stroke-width="1.5" fill="none" stroke-linecap="round" stroke-linejoin="round"/>
<path d="M105.8,242.4L102.3,242.4Q99.3,242.4 97.8,243.9L97.8,243.9Q96.3,245.4 96.3,248.4L96.3,334.3" stroke="#f5d60a" stroke-width="1.5" fill="none" stroke-linecap="round" stroke-linejoin="round"/>
<path d="M120.2,242.4L111.8,242.4Q108.8,242.4 107.3,243.9L107.3,243.9Q105.8,245.4 105.8,248.4L105.8,296.0Q105.8,299.0 104.3,300.7L104.3,300.7Q102.8,302.4 99.8,302.4L61.0,302.4Q58.0,302.4 55.6,304.2L55.6,304.2Q53.2,306.0 53.2,309.0L53.2,329.5" stroke="#f5d60a" stroke-width="1.5" fill="none" stroke-linecap="round" stroke-linejoin="round"/>
<path d="M120.2,242.4L120.2,299.5Q120.2,302.5 118.7,304.1L118.7,304.1Q117.2,305.8 114.2,305.8L67.0,305.8Q64.0,305.8 61.4,307.2L60.6,307.6Q58.0,309.0 58.0,312.0L58.0,329.5" stroke="#f5d60a" stroke-width="1.5" fill="none" stroke-linecap="round" stroke-linejoin="round"/>
<path d="M134.6,242.4L134.6,293.5Q134.6,296.5 133.1,298.0L133.1,298.0Q131.6,299.5 128.6,299.5L66.0,299.5" stroke="#f5d60a" stroke-width="1.5" fill="none" stroke-linecap="round" stroke-linejoin="round"/>
<path d="M144.1,250.2L144.1,329.5" stroke="#f5d60a" stroke-width="1.5" fill="none" stroke-linecap="round" stroke-linejoin="round"/>
<path d="M144.1,250.2L144.1,250.1Q144.1,250.1 144.1,250.1L147.1,247.2Q147.1,247.2 147.1,247.2L163.3,247.2" stroke="#f5d60a" stroke-width="1.5" fill="none" stroke-linecap="round" stroke-linejoin="round"/>
<path d="M148.9,242.4L148.9,329.5" stroke="#f5d60a" stroke-width="1.5" fill="none" stroke-linecap="round" stroke-linejoin="round"/>
<path d="M177.6,243.2L174.1,243.2Q171.1,243.2 169.6,244.8L169.6,244.8Q168.1,246.4 168.1,249.4L168.1,329.5" stroke="#f5d60a" stroke-width="1.5" fill="none" stroke-linecap="round" stroke-linejoin="round"/>
<path d="M192.0,248.2L178.9,248.2Q175.9,248.2 174.4,249.7L174.4,249.7Q172.9,251.2 172.9,254.2L172.9,329.5" stroke="#f5d60a" stroke-width="1.5" fill="none" stroke-linecap="round" stroke-linejoin="round"/>
<path d="M163.3,252.0L176.4,252.0Q179.4,252.0 180.9,253.5L180.9,253.5Q182.4,255.0 182.4,258.0L182.4,329.5" stroke="#f5d60a" stroke-width="1.5" fill="none" stroke-linecap="round" stroke-linejoin="round"/>
<path d="M163.3,250.4L181.2,250.4Q184.2,250.4 185.7,251.9L185.7,251.9Q187.2,253.5 187.2,256.5L187.2,329.5" stroke="#f5d60a" stroke-width="1.5" fill="none" stroke-linecap="round" stroke-linejoin="round"/>
<path d="M144.1,247.2L201.6,247.2" stroke="#f5d60a" stroke-width="1.5" fill="none" stroke-linecap="round" stroke-linejoin="round"/>
<path d="M58.0,271.2L53.0,271.2Q50.0,271.2 48.4,273.1L48.4,273.1Q46.8,275.0 46.8,278.0L46.8,284.0Q46.8,287.0 48.4,289.5L48.4,289.5Q50.0,292.0 52.7,293.3L58.0,295.9" stroke="#373737" stroke-width="1.3" fill="none" stroke-linecap="round" stroke-linejoin="round"/>
<path d="M58.0,276.0L43.0,276.0Q40.0,276.0 39.0,278.0L39.0,278.0Q38.0,280.0 38.0,283.0L38.0,289.0Q38.0,292.0 40.2,294.0L41.8,295.5Q44.0,297.5 46.9,298.2L58.0,300.9" stroke="#e6222a" stroke-width="1.2" fill="none" stroke-linecap="round" stroke-linejoin="round"/>
<path d="M58.0,300.9L54.2,301.9Q50.4,302.9 49.4,305.9L49.4,305.9Q48.4,309.0 48.4,312.1L48.4,315.2" stroke="#e6222a" stroke-width="1.2" fill="none" stroke-linecap="round" stroke-linejoin="round"/>
<path d="M86.7,300.9L86.7,315.2" stroke="#e6222a" stroke-width="1.2" fill="none" stroke-linecap="round" stroke-linejoin="round"/>
<path d="M125.0,300.9L125.0,315.2" stroke="#e6222a" stroke-width="1.2" fill="none" stroke-linecap="round" stroke-linejoin="round"/>
<path d="M163.3,300.9L163.3,315.2" stroke="#e6222a" stroke-width="1.2" fill="none" stroke-linecap="round" stroke-linejoin="round"/>
<path d="M292.5,300.9L292.5,315.2" stroke="#e6222a" stroke-width="1.2" fill="none" stroke-linecap="round" stroke-linejoin="round"/>
<path d="M239.9,300.9L239.9,319.9" stroke="#e6222a" stroke-width="1.2" fill="none" stroke-linecap="round" stroke-linejoin="round"/>
<path d="M163.3,319.9L177.6,319.9" stroke="#e6222a" stroke-width="1.2" fill="none" stroke-linecap="round" stroke-linejoin="round"/>
<path d="M101.1,319.9L129.8,319.9" stroke="#40b63a" stroke-width="1.3" fill="none" stroke-linecap="round" stroke-linejoin="round"/>
<path d="M177.6,319.9L225.5,319.9" stroke="#40b63a" stroke-width="1.3" fill="none" stroke-linecap="round" stroke-linejoin="round"/>
<path d="M77.1,324.7L101.1,324.7" stroke="#40b63a" stroke-width="1.3" fill="none" stroke-linecap="round" stroke-linejoin="round"/>
<path d="M134.6,324.7L156.5,324.7Q158.5,324.7 159.4,325.9L159.4,325.9Q160.3,327.2 160.3,329.2L160.3,350.0Q160.3,352.0 160.6,354.0L162.2,364.6Q162.5,366.6 164.5,366.8L180.4,368.6Q182.4,368.8 183.9,368.8L185.4,368.8" stroke="#40b63a" stroke-width="1.3" fill="none" stroke-linecap="round" stroke-linejoin="round"/>
<path d="M254.2,324.7L297.3,324.7" stroke="#40b63a" stroke-width="1.3" fill="none" stroke-linecap="round" stroke-linejoin="round"/>
<path d="M268.6,329.5L302.1,329.5" stroke="#40b63a" stroke-width="1.3" fill="none" stroke-linecap="round" stroke-linejoin="round"/>
<path d="M215.9,329.5L220.7,329.5" stroke="#40b63a" stroke-width="1.3" fill="none" stroke-linecap="round" stroke-linejoin="round"/>
<path d="M306.9,329.5L311.7,329.5" stroke="#f5d60a" stroke-width="1.3" fill="none" stroke-linecap="round" stroke-linejoin="round"/>
<path d="M198.8,324.7L211.2,324.7" stroke="#f5d60a" stroke-width="1.2" fill="none" stroke-linecap="round" stroke-linejoin="round"/>
<path d="M198.8,329.5L206.4,329.5" stroke="#f5d60a" stroke-width="1.2" fill="none" stroke-linecap="round" stroke-linejoin="round"/>
<path d="M62.8,329.5L62.8,337.3" stroke="#40b63a" stroke-width="1.3" fill="none" stroke-linecap="round" stroke-linejoin="round"/>
<path d="M110.6,329.5L110.6,337.3" stroke="#40b63a" stroke-width="1.3" fill="none" stroke-linecap="round" stroke-linejoin="round"/>
<path d="M177.6,329.5L177.6,337.3" stroke="#40b63a" stroke-width="1.3" fill="none" stroke-linecap="round" stroke-linejoin="round"/>
<path d="M316.5,329.5L316.5,337.3" stroke="#40b63a" stroke-width="1.3" fill="none" stroke-linecap="round" stroke-linejoin="round"/>
<path d="M139.4,329.8L144.1,328.5" stroke="#40b63a" stroke-width="1.3" fill="none" stroke-linecap="round" stroke-linejoin="round"/>
<path d="M192.0,324.7L194.1,323.2Q195.8,322.1 196.3,322.9L196.3,322.9Q196.8,323.7 196.8,325.7L196.8,348.0Q196.8,350.0 198.3,351.3L199.3,352.2Q200.8,353.5 202.8,353.5L220.7,353.6" stroke="#40b63a" stroke-width="1.3" fill="none" stroke-linecap="round" stroke-linejoin="round"/>
<path d="M230.3,329.5L232.5,327.9Q234.1,326.7 234.6,327.6L234.6,327.6Q235.1,328.5 235.1,330.5L235.1,348.0Q235.1,350.0 236.3,351.6L236.9,352.4Q238.1,354.0 239.8,355.1L244.7,358.2" stroke="#40b63a" stroke-width="1.3" fill="none" stroke-linecap="round" stroke-linejoin="round"/>
<path d="M67.5,329.5L79.9,318.6Q82.9,316.0 86.9,316.0L156.0,316.2Q160.0,316.2 163.9,317.0L204.0,325.2" stroke="#f5d60a" stroke-width="1.3" fill="none" stroke-linecap="round" stroke-linejoin="round"/>
<path d="M116.0,324.6L204.0,330.0" stroke="#f5d60a" stroke-width="1.2" fill="none" stroke-linecap="round" stroke-linejoin="round"/>
<path d="M45.0,317.0L68.0,319.5" stroke="#f5d60a" stroke-width="1.2" fill="none" stroke-linecap="round" stroke-linejoin="round"/>
<path d="M45.0,322.0L53.0,325.0" stroke="#f5d60a" stroke-width="1.2" fill="none" stroke-linecap="round" stroke-linejoin="round"/>
<path d="M67.5,300.0L67.5,315.2" stroke="#f5d60a" stroke-width="1.4" fill="none" stroke-linecap="round" stroke-linejoin="round"/>
<path d="M72.3,302.0L72.3,315.2" stroke="#f5d60a" stroke-width="1.4" fill="none" stroke-linecap="round" stroke-linejoin="round"/>
<path d="M66.0,299.5L70.5,299.6" stroke="#f5d60a" stroke-width="1.5" fill="none" stroke-linecap="round" stroke-linejoin="round"/>
<path d="M62.8,347.6L62.8,352.7Q62.8,354.2 64.3,354.2L99.6,354.2Q101.1,354.2 101.1,353.8L101.1,353.4" stroke="#40b63a" stroke-width="1.3" fill="none" stroke-linecap="round" stroke-linejoin="round"/>
<path d="M72.3,358.2L91.5,358.2" stroke="#40b63a" stroke-width="1.3" fill="none" stroke-linecap="round" stroke-linejoin="round"/>
<path d="M110.6,347.6L110.6,353.4" stroke="#40b63a" stroke-width="1.3" fill="none" stroke-linecap="round" stroke-linejoin="round"/>
<path d="M134.6,353.4L163.3,353.4" stroke="#40b63a" stroke-width="1.3" fill="none" stroke-linecap="round" stroke-linejoin="round"/>
<path d="M172.9,353.4L177.6,353.4" stroke="#40b63a" stroke-width="1.3" fill="none" stroke-linecap="round" stroke-linejoin="round"/>
<path d="M206.4,353.4L215.9,353.4" stroke="#40b63a" stroke-width="1.3" fill="none" stroke-linecap="round" stroke-linejoin="round"/>
<path d="M220.7,353.4L235.1,353.4" stroke="#40b63a" stroke-width="1.3" fill="none" stroke-linecap="round" stroke-linejoin="round"/>
<path d="M259.0,353.4L292.5,353.4" stroke="#40b63a" stroke-width="1.3" fill="none" stroke-linecap="round" stroke-linejoin="round"/>
<path d="M302.1,353.4L306.9,353.4" stroke="#f5d60a" stroke-width="1.3" fill="none" stroke-linecap="round" stroke-linejoin="round"/>
<path d="M316.5,347.6L316.5,353.4" stroke="#40b63a" stroke-width="1.3" fill="none" stroke-linecap="round" stroke-linejoin="round"/>
<path d="M196.0,339.0L198.2,345.2Q199.5,349.0 203.3,350.3L206.2,351.3Q210.0,352.6 213.0,353.0L215.9,353.4" stroke="#40b63a" stroke-width="1.3" fill="none" stroke-linecap="round" stroke-linejoin="round"/>
<path d="M77.1,367.8L77.1,382.2" stroke="#373737" stroke-width="1.3" fill="none" stroke-linecap="round" stroke-linejoin="round"/>
<path d="M115.4,358.2L115.4,382.2" stroke="#373737" stroke-width="1.3" fill="none" stroke-linecap="round" stroke-linejoin="round"/>
<path d="M153.7,358.2L153.7,382.2" stroke="#373737" stroke-width="1.3" fill="none" stroke-linecap="round" stroke-linejoin="round"/>
<path d="M192.0,353.4L192.0,382.2" stroke="#373737" stroke-width="1.3" fill="none" stroke-linecap="round" stroke-linejoin="round"/>
<path d="M268.6,363.0L268.6,382.2" stroke="#373737" stroke-width="1.3" fill="none" stroke-linecap="round" stroke-linejoin="round"/>
<path d="M321.3,367.8L321.3,382.2" stroke="#373737" stroke-width="1.3" fill="none" stroke-linecap="round" stroke-linejoin="round"/>
<path d="M192.0,363.2L230.3,363.2" stroke="#373737" stroke-width="1.2" fill="none" stroke-linecap="round" stroke-linejoin="round"/>
<path d="M62.8,363.0L62.8,367.5Q62.8,370.5 64.3,372.1L64.3,372.1Q65.8,373.6 68.8,373.6L291.3,373.6Q294.3,373.6 295.8,372.1L295.8,372.1Q297.3,370.5 297.3,369.1L297.3,367.8" stroke="#ef8205" stroke-width="1.5" fill="none" stroke-linecap="round" stroke-linejoin="round"/>
<path d="M187.0,367.9L204.0,367.9" stroke="#ef8205" stroke-width="1.4" fill="none" stroke-linecap="round" stroke-linejoin="round"/>
<path d="M40.4,283.0L40.4,377.0Q40.4,381.0 42.7,383.1L42.7,383.1Q45.0,385.2 49.0,385.2L559.9,385.2Q563.9,385.2 565.4,383.6L566.9,382.0" stroke="#ef8205" stroke-width="2.4" fill="none" stroke-linecap="round" stroke-linejoin="round"/>
<path d="M40.0,330.0L42.8,341.1Q44.0,346.0 47.0,348.6L47.0,348.6Q50.0,351.2 55.0,351.2L263.8,351.2" stroke="#f5d60a" stroke-width="1.3" fill="none" stroke-linecap="round" stroke-linejoin="round"/>
<path d="M38.6,340.0L39.6,349.0Q40.0,353.0 43.6,354.6L44.4,355.0Q48.0,356.6 52.0,356.3L101.9,352.3Q105.8,352.0 109.8,352.7L134.1,357.1Q138.0,357.8 142.0,357.8L247.9,357.8" stroke="#f5d60a" stroke-width="1.3" fill="none" stroke-linecap="round" stroke-linejoin="round"/>
<path d="M52.0,362.0L122.0,362.0" stroke="#f5d60a" stroke-width="1.3" fill="none" stroke-linecap="round" stroke-linejoin="round"/>
<path d="M48.0,365.1L306.7,365.1Q308.7,365.1 310.2,366.4L311.7,367.8" stroke="#f5d60a" stroke-width="1.4" fill="none" stroke-linecap="round" stroke-linejoin="round"/>
<path d="M38.0,352.0L38.4,360.5Q38.5,364.0 40.8,366.2L40.8,366.2Q43.0,368.4 46.5,368.4L247.7,368.2Q251.2,368.2 252.7,366.6L252.7,366.6Q254.2,365.0 254.2,361.5L254.2,353.4" stroke="#f5d60a" stroke-width="1.4" fill="none" stroke-linecap="round" stroke-linejoin="round"/>
<path d="M42.0,371.4L253.0,371.4Q256.0,371.4 257.5,369.7L257.5,369.7Q259.0,368.0 259.0,365.0L259.0,353.4" stroke="#f5d60a" stroke-width="1.4" fill="none" stroke-linecap="round" stroke-linejoin="round"/>
<path d="M53.2,363.0L53.2,369.5Q53.2,373.0 55.2,374.8L55.2,374.8Q57.2,376.6 60.7,376.6L132.5,377.2Q136.0,377.2 139.2,375.7L139.8,375.5Q143.0,374.0 143.3,370.5L144.0,363.0" stroke="#f5d60a" stroke-width="1.3" fill="none" stroke-linecap="round" stroke-linejoin="round"/>
<path d="M63.8,375.0L65.8,377.5Q67.8,380.0 71.3,380.0L116.5,380.4Q120.0,380.4 123.3,379.2L125.7,378.2Q129.0,377.0 129.2,373.5L129.5,368.0" stroke="#f5d60a" stroke-width="1.3" fill="none" stroke-linecap="round" stroke-linejoin="round"/>
<path d="M408.3,220.8L408.3,237.1" stroke="#373737" stroke-width="1.3" fill="none" stroke-linecap="round" stroke-linejoin="round"/>
<path d="M413.1,220.8L413.1,237.1" stroke="#373737" stroke-width="1.3" fill="none" stroke-linecap="round" stroke-linejoin="round"/>
<path d="M417.9,220.8L417.9,237.1" stroke="#373737" stroke-width="1.3" fill="none" stroke-linecap="round" stroke-linejoin="round"/>
<path d="M422.7,220.8L422.7,237.1" stroke="#373737" stroke-width="1.3" fill="none" stroke-linecap="round" stroke-linejoin="round"/>
<path d="M427.5,220.8L427.5,237.1" stroke="#373737" stroke-width="1.3" fill="none" stroke-linecap="round" stroke-linejoin="round"/>
<path d="M432.2,220.8L432.2,237.1" stroke="#373737" stroke-width="1.3" fill="none" stroke-linecap="round" stroke-linejoin="round"/>
<path d="M437.0,220.8L437.0,237.1" stroke="#373737" stroke-width="1.3" fill="none" stroke-linecap="round" stroke-linejoin="round"/>
<path d="M441.8,220.8L441.8,237.1" stroke="#373737" stroke-width="1.3" fill="none" stroke-linecap="round" stroke-linejoin="round"/>
<path d="M374.8,202.7L374.8,198.9Q374.8,195.0 376.3,192.8L376.3,192.8Q377.8,190.5 381.7,189.8L389.2,188.4" stroke="#e6222a" stroke-width="1.3" fill="none" stroke-linecap="round" stroke-linejoin="round"/>
<path d="M446.6,188.4L446.6,202.7" stroke="#e6222a" stroke-width="1.2" fill="none" stroke-linecap="round" stroke-linejoin="round"/>
<path d="M480.1,188.4L480.1,202.7" stroke="#e6222a" stroke-width="1.2" fill="none" stroke-linecap="round" stroke-linejoin="round"/>
<path d="M513.6,188.4L513.6,202.7" stroke="#e6222a" stroke-width="1.2" fill="none" stroke-linecap="round" stroke-linejoin="round"/>
<path d="M547.1,188.4L547.1,202.7" stroke="#e6222a" stroke-width="1.2" fill="none" stroke-linecap="round" stroke-linejoin="round"/>
<path d="M580.6,188.4L580.6,202.7" stroke="#e6222a" stroke-width="1.2" fill="none" stroke-linecap="round" stroke-linejoin="round"/>
<path d="M647.7,188.4L647.7,202.7" stroke="#e6222a" stroke-width="1.2" fill="none" stroke-linecap="round" stroke-linejoin="round"/>
<path d="M618.9,188.4L617.3,188.4Q615.6,188.4 614.9,189.4L614.9,189.4Q614.1,190.4 614.1,192.4L614.1,202.7" stroke="#e6222a" stroke-width="1.3" fill="none" stroke-linecap="round" stroke-linejoin="round"/>
<path d="M666.8,183.4L676.0,183.4Q679.0,183.4 680.6,185.2L680.6,185.2Q682.3,187.0 682.3,190.0L682.3,263.0Q682.3,266.0 680.6,267.9L680.6,267.9Q679.0,269.7 676.0,269.7L666.8,269.7" stroke="#373737" stroke-width="1.3" fill="none" stroke-linecap="round" stroke-linejoin="round"/>
<path d="M666.8,188.4L680.0,188.4Q683.5,188.4 685.5,190.7L685.5,190.7Q687.5,193.0 687.5,196.5L687.5,266.5Q687.5,270.0 685.5,272.2L685.5,272.2Q683.5,274.5 680.0,274.5L666.8,274.5" stroke="#e6222a" stroke-width="1.3" fill="none" stroke-linecap="round" stroke-linejoin="round"/>
<path d="M676.4,255.3L662.0,269.7" stroke="#373737" stroke-width="1.2" fill="none" stroke-linecap="round" stroke-linejoin="round"/>
<path d="M379.6,202.7L427.5,202.7" stroke="#1a96d2" stroke-width="1.5" fill="none" stroke-linecap="round" stroke-linejoin="round"/>
<path d="M556.7,207.4L556.7,208.3Q556.7,209.2 558.2,209.2L622.2,209.2Q623.7,209.2 623.7,208.3L623.7,207.4" stroke="#1a96d2" stroke-width="1.5" fill="none" stroke-linecap="round" stroke-linejoin="round"/>
<path d="M537.6,212.2L638.1,212.2" stroke="#1a96d2" stroke-width="1.5" fill="none" stroke-linecap="round" stroke-linejoin="round"/>
<path d="M590.2,207.4L618.9,207.4" stroke="#1a96d2" stroke-width="1.5" fill="none" stroke-linecap="round" stroke-linejoin="round"/>
<path d="M623.7,207.4L633.3,207.4" stroke="#1a96d2" stroke-width="1.5" fill="none" stroke-linecap="round" stroke-linejoin="round"/>
<path d="M384.4,202.7L384.4,204.4Q384.4,206.0 386.9,206.0L434.5,206.0Q437.0,206.0 437.0,206.7L437.0,207.4" stroke="#40b63a" stroke-width="1.5" fill="none" stroke-linecap="round" stroke-linejoin="round"/>
<path d="M427.5,202.7L427.5,200.9Q427.5,199.0 430.5,199.0L550.7,199.0Q553.7,199.0 555.2,200.9L556.7,202.7" stroke="#40b63a" stroke-width="1.5" fill="none" stroke-linecap="round" stroke-linejoin="round"/>
<path d="M432.2,203.1L484.9,203.1" stroke="#40b63a" stroke-width="1.5" fill="none" stroke-linecap="round" stroke-linejoin="round"/>
<path d="M441.8,207.4L537.6,207.4" stroke="#40b63a" stroke-width="1.5" fill="none" stroke-linecap="round" stroke-linejoin="round"/>
<path d="M413.1,212.2L518.4,212.2" stroke="#40b63a" stroke-width="1.5" fill="none" stroke-linecap="round" stroke-linejoin="round"/>
<path d="M504.0,212.2L504.5,211.6Q505.0,211.0 506.0,211.0L556.7,211.0" stroke="#40b63a" stroke-width="1.5" fill="none" stroke-linecap="round" stroke-linejoin="round"/>
<path d="M518.4,217.0L518.4,215.8Q518.4,214.6 520.4,214.6L549.9,214.6Q551.9,214.6 551.9,215.8L551.9,217.0" stroke="#40b63a" stroke-width="1.5" fill="none" stroke-linecap="round" stroke-linejoin="round"/>
<path d="M528.0,217.0L532.8,217.0" stroke="#40b63a" stroke-width="1.5" fill="none" stroke-linecap="round" stroke-linejoin="round"/>
<path d="M561.5,217.0L566.3,217.0" stroke="#40b63a" stroke-width="1.5" fill="none" stroke-linecap="round" stroke-linejoin="round"/>
<path d="M595.0,217.0L595.0,224.8" stroke="#40b63a" stroke-width="1.5" fill="none" stroke-linecap="round" stroke-linejoin="round"/>
<path d="M609.4,217.0L609.4,224.8" stroke="#40b63a" stroke-width="1.5" fill="none" stroke-linecap="round" stroke-linejoin="round"/>
<path d="M417.9,211.6L485.7,211.3Q487.7,211.3 488.7,212.5L488.7,212.5Q489.7,213.7 489.7,215.3L489.7,217.0" stroke="#f5d60a" stroke-width="2.0" fill="none" stroke-linecap="round" stroke-linejoin="round"/>
<path d="M408.3,216.7L499.3,216.4" stroke="#f5d60a" stroke-width="2.4" fill="none" stroke-linecap="round" stroke-linejoin="round"/>
<path d="M484.9,202.7L590.2,202.7" stroke="#f5d60a" stroke-width="2.2" fill="none" stroke-linecap="round" stroke-linejoin="round"/>
<path d="M571.1,207.4L571.6,206.4Q572.1,205.5 574.1,205.5L614.1,205.5" stroke="#f5d60a" stroke-width="1.5" fill="none" stroke-linecap="round" stroke-linejoin="round"/>
<path d="M542.3,217.0L542.3,224.8" stroke="#f5d60a" stroke-width="1.5" fill="none" stroke-linecap="round" stroke-linejoin="round"/>
<path d="M575.9,217.0L575.9,224.8" stroke="#f5d60a" stroke-width="1.5" fill="none" stroke-linecap="round" stroke-linejoin="round"/>
<path d="M465.8,207.4L466.8,206.1Q467.8,204.8 470.3,204.8L646.2,204.8Q648.7,204.8 650.6,206.1L652.4,207.4" stroke="#a8773f" stroke-width="1.5" fill="none" stroke-linecap="round" stroke-linejoin="round"/>
<path d="M604.6,202.7L604.6,200.6Q604.6,198.5 607.1,198.5L669.1,198.5Q671.6,198.5 671.6,200.6L671.6,202.7" stroke="#a8773f" stroke-width="1.5" fill="none" stroke-linecap="round" stroke-linejoin="round"/>
<path d="M623.7,203.0L657.2,203.0" stroke="#a8773f" stroke-width="1.5" fill="none" stroke-linecap="round" stroke-linejoin="round"/>
<path d="M662.0,217.0L666.8,217.0" stroke="#a8773f" stroke-width="1.5" fill="none" stroke-linecap="round" stroke-linejoin="round"/>
<path d="M508.8,217.0L510.3,217.2Q511.8,217.5 513.7,219.2L513.7,219.2Q515.5,221.0 515.5,224.0L515.5,300.0" stroke="#ef8205" stroke-width="1.4" fill="none" stroke-linecap="round" stroke-linejoin="round"/>
<path d="M642.9,212.2L642.9,300.0" stroke="#ef8205" stroke-width="1.4" fill="none" stroke-linecap="round" stroke-linejoin="round"/>
<path d="M676.4,217.0L678.7,217.0Q681.0,217.0 682.6,219.0L682.6,219.0Q684.3,221.0 684.3,224.5L684.3,295.5Q684.3,299.0 682.1,301.3L682.1,301.3Q680.0,303.6 676.5,303.6L588.0,303.6" stroke="#ef8205" stroke-width="1.5" fill="none" stroke-linecap="round" stroke-linejoin="round"/>
<path d="M393.9,255.3L393.9,256.9Q393.9,258.4 395.0,259.5L395.0,259.5Q396.1,260.5 397.6,260.8L397.6,260.8Q399.1,261.1 403.6,261.1L403.7,261.1Q408.2,261.1 408.3,258.2L408.3,255.3" stroke="#1a96d2" stroke-width="1.5" fill="none" stroke-linecap="round" stroke-linejoin="round"/>
<path d="M389.2,255.3L389.2,256.9Q389.2,258.4 390.3,259.5L390.3,259.5Q391.4,260.5 395.2,261.8L395.2,261.8Q399.0,263.0 403.5,263.0L408.5,263.0Q413.0,263.0 413.0,259.1L413.1,255.3" stroke="#40b63a" stroke-width="1.5" fill="none" stroke-linecap="round" stroke-linejoin="round"/>
<path d="M384.4,255.3L384.4,256.9Q384.4,258.4 385.5,259.5L385.5,259.5Q386.6,260.5 390.8,262.0L394.8,263.5Q399.1,265.0 403.6,265.0L413.3,265.0Q417.8,265.0 417.8,260.5L417.9,255.3" stroke="#1a96d2" stroke-width="1.5" fill="none" stroke-linecap="round" stroke-linejoin="round"/>
<path d="M379.6,255.3L379.6,256.9Q379.6,258.4 380.7,259.5L380.7,259.5Q381.8,260.5 386.0,262.1L395.5,265.6Q399.7,267.2 404.2,267.2L418.1,267.2Q422.6,267.2 422.6,262.7L422.7,255.3" stroke="#40b63a" stroke-width="1.5" fill="none" stroke-linecap="round" stroke-linejoin="round"/>
<path d="M374.8,255.3L374.8,256.9Q374.8,258.4 375.9,259.5L375.9,259.5Q377.0,260.5 381.2,262.1L396.1,267.8Q400.3,269.4 404.8,269.4L422.9,269.4Q427.4,269.4 427.4,264.9L427.5,255.3" stroke="#1a96d2" stroke-width="1.5" fill="none" stroke-linecap="round" stroke-linejoin="round"/>
<path d="M398.7,240.9L398.7,262.0Q398.7,266.5 400.2,268.4L400.2,268.4Q401.7,270.2 406.2,270.2L427.7,270.2Q432.2,270.2 432.2,265.7L432.2,255.3" stroke="#40b63a" stroke-width="1.5" fill="none" stroke-linecap="round" stroke-linejoin="round"/>
<path d="M403.5,255.3L403.5,269.7" stroke="#373737" stroke-width="1.0" fill="none" stroke-linecap="round" stroke-linejoin="round"/>
<path d="M384.4,269.7L379.5,269.7Q375.5,269.7 373.4,271.9L373.4,271.9Q371.2,274.0 371.2,278.0L371.2,287.0Q371.2,291.0 373.6,293.7L373.6,293.7Q376.0,296.4 380.0,296.4L385.0,296.4" stroke="#40b63a" stroke-width="1.5" fill="none" stroke-linecap="round" stroke-linejoin="round"/>
<path d="M384.4,274.5L380.9,274.5Q377.5,274.5 375.6,276.5L375.6,276.5Q373.6,278.5 373.6,282.0L373.6,284.5Q373.6,288.0 375.8,289.7L375.8,289.7Q378.0,291.4 381.5,291.4L385.0,291.4" stroke="#40b63a" stroke-width="1.5" fill="none" stroke-linecap="round" stroke-linejoin="round"/>
<path d="M417.9,240.9L441.8,240.9" stroke="#f5d60a" stroke-width="1.8" fill="none" stroke-linecap="round" stroke-linejoin="round"/>
<path d="M408.3,245.7L437.5,245.7Q439.0,245.7 440.1,244.7L440.7,244.1Q441.8,243.1 443.3,243.1L448.9,243.1Q450.4,243.1 450.9,244.4L451.4,245.7" stroke="#f5d60a" stroke-width="2.0" fill="none" stroke-linecap="round" stroke-linejoin="round"/>
<path d="M422.7,250.9L480.1,250.9" stroke="#f5d60a" stroke-width="2.2" fill="none" stroke-linecap="round" stroke-linejoin="round"/>
<path d="M451.4,245.7L480.1,245.7" stroke="#f5d60a" stroke-width="1.5" fill="none" stroke-linecap="round" stroke-linejoin="round"/>
<path d="M484.9,245.7L499.3,245.7" stroke="#f5d60a" stroke-width="1.5" fill="none" stroke-linecap="round" stroke-linejoin="round"/>
<path d="M484.9,250.5L486.0,250.0Q486.9,249.6 487.9,249.6L527.0,249.6Q528.0,249.6 528.0,250.1L528.0,250.5" stroke="#f5d60a" stroke-width="1.5" fill="none" stroke-linecap="round" stroke-linejoin="round"/>
<path d="M446.6,255.3L446.6,258.3Q446.6,261.3 449.6,261.3L574.6,261.3Q577.6,261.3 579.0,258.6L580.6,255.3" stroke="#f5d60a" stroke-width="1.8" fill="none" stroke-linecap="round" stroke-linejoin="round"/>
<path d="M580.6,240.9L633.3,240.9" stroke="#f5d60a" stroke-width="1.8" fill="none" stroke-linecap="round" stroke-linejoin="round"/>
<path d="M566.3,245.7L618.9,245.7" stroke="#f5d60a" stroke-width="1.6" fill="none" stroke-linecap="round" stroke-linejoin="round"/>
<path d="M551.9,250.5L599.8,250.5" stroke="#f5d60a" stroke-width="1.5" fill="none" stroke-linecap="round" stroke-linejoin="round"/>
<path d="M523.2,255.3L523.2,300.0" stroke="#f5d60a" stroke-width="1.5" fill="none" stroke-linecap="round" stroke-linejoin="round"/>
<path d="M537.6,255.3L537.6,300.0" stroke="#f5d60a" stroke-width="1.5" fill="none" stroke-linecap="round" stroke-linejoin="round"/>
<path d="M571.1,255.3L571.1,300.0" stroke="#f5d60a" stroke-width="1.5" fill="none" stroke-linecap="round" stroke-linejoin="round"/>
<path d="M542.3,234.1L542.3,300.0" stroke="#f5d60a" stroke-width="1.5" fill="none" stroke-linecap="round" stroke-linejoin="round"/>
<path d="M575.9,234.1L575.9,300.0" stroke="#f5d60a" stroke-width="1.5" fill="none" stroke-linecap="round" stroke-linejoin="round"/>
<path d="M441.8,240.9L532.8,240.9" stroke="#40b63a" stroke-width="1.5" fill="none" stroke-linecap="round" stroke-linejoin="round"/>
<path d="M556.7,240.9L561.5,240.9" stroke="#40b63a" stroke-width="1.5" fill="none" stroke-linecap="round" stroke-linejoin="round"/>
<path d="M499.3,245.7L518.4,245.7" stroke="#40b63a" stroke-width="1.5" fill="none" stroke-linecap="round" stroke-linejoin="round"/>
<path d="M437.0,255.3L437.0,257.6Q437.0,260.0 440.0,260.0L476.1,260.0Q479.1,260.0 479.4,257.0L480.1,250.5" stroke="#40b63a" stroke-width="1.5" fill="none" stroke-linecap="round" stroke-linejoin="round"/>
<path d="M484.9,255.3L485.4,254.9Q485.9,254.6 487.4,254.6L496.8,254.6Q498.3,254.6 498.8,254.9L499.3,255.3" stroke="#40b63a" stroke-width="1.5" fill="none" stroke-linecap="round" stroke-linejoin="round"/>
<path d="M499.3,255.3L499.3,257.4Q499.3,259.4 501.8,259.4L547.4,259.4Q549.9,259.4 550.9,257.4L551.9,255.3" stroke="#40b63a" stroke-width="1.5" fill="none" stroke-linecap="round" stroke-linejoin="round"/>
<path d="M547.1,250.5L546.1,252.4Q545.1,254.2 543.1,254.2L515.6,254.2Q513.6,254.2 513.6,254.8L513.6,255.3" stroke="#40b63a" stroke-width="1.5" fill="none" stroke-linecap="round" stroke-linejoin="round"/>
<path d="M566.3,255.3L565.8,257.5Q565.3,259.4 563.3,259.4L551.9,259.4" stroke="#40b63a" stroke-width="1.5" fill="none" stroke-linecap="round" stroke-linejoin="round"/>
<path d="M590.2,255.3L590.2,292.0Q590.2,297.0 588.2,301.4L588.2,301.4Q586.2,305.7 581.2,305.7L450.0,305.7" stroke="#40b63a" stroke-width="1.5" fill="none" stroke-linecap="round" stroke-linejoin="round"/>
<path d="M595.0,234.1L595.0,298.0" stroke="#40b63a" stroke-width="1.5" fill="none" stroke-linecap="round" stroke-linejoin="round"/>
<path d="M604.6,255.3L604.6,300.0" stroke="#40b63a" stroke-width="1.5" fill="none" stroke-linecap="round" stroke-linejoin="round"/>
<path d="M609.4,234.1L609.4,300.0" stroke="#40b63a" stroke-width="1.5" fill="none" stroke-linecap="round" stroke-linejoin="round"/>
<path d="M623.7,245.7L623.7,300.0" stroke="#40b63a" stroke-width="1.5" fill="none" stroke-linecap="round" stroke-linejoin="round"/>
<path d="M508.8,255.3L508.8,269.7" stroke="#373737" stroke-width="1.2" fill="none" stroke-linecap="round" stroke-linejoin="round"/>
<path d="M532.8,255.3L532.8,258.1Q532.8,260.9 535.8,260.9L647.4,260.0Q650.4,260.0 651.4,257.6L652.4,255.3" stroke="#a8773f" stroke-width="1.5" fill="none" stroke-linecap="round" stroke-linejoin="round"/>
<path d="M585.4,255.3L585.4,257.5Q585.4,259.6 588.4,259.6L614.1,259.9" stroke="#a8773f" stroke-width="1.5" fill="none" stroke-linecap="round" stroke-linejoin="round"/>
<path d="M591.4,263.2L661.3,263.2Q664.3,263.2 665.2,260.3L666.8,255.3" stroke="#a8773f" stroke-width="1.5" fill="none" stroke-linecap="round" stroke-linejoin="round"/>
<path d="M614.1,250.5L647.7,250.5" stroke="#a8773f" stroke-width="1.5" fill="none" stroke-linecap="round" stroke-linejoin="round"/>
<path d="M657.2,250.5L662.0,250.5" stroke="#a8773f" stroke-width="1.5" fill="none" stroke-linecap="round" stroke-linejoin="round"/>
<path d="M504.0,250.5L504.0,300.0" stroke="#ef8205" stroke-width="1.4" fill="none" stroke-linecap="round" stroke-linejoin="round"/>
<path d="M638.1,240.9L638.1,300.0" stroke="#ef8205" stroke-width="1.4" fill="none" stroke-linecap="round" stroke-linejoin="round"/>
<path d="M671.6,255.3L671.6,300.0" stroke="#ef8205" stroke-width="1.4" fill="none" stroke-linecap="round" stroke-linejoin="round"/>
<path d="M364.0,283.4L566.0,283.4Q568.0,283.4 569.7,284.5L572.0,286.0" stroke="#ef8205" stroke-width="2.6" fill="none" stroke-linecap="round" stroke-linejoin="round"/>
<path d="M389.8,296.4L383.2,296.4Q380.2,296.4 377.8,297.9L377.8,297.9Q375.4,299.4 375.4,302.4L375.4,310.7" stroke="#e6222a" stroke-width="1.3" fill="none" stroke-linecap="round" stroke-linejoin="round"/>
<path d="M413.7,296.4L413.7,310.7" stroke="#e6222a" stroke-width="1.2" fill="none" stroke-linecap="round" stroke-linejoin="round"/>
<path d="M447.2,296.4L447.2,310.7" stroke="#e6222a" stroke-width="1.2" fill="none" stroke-linecap="round" stroke-linejoin="round"/>
<path d="M480.7,296.4L480.7,310.7" stroke="#e6222a" stroke-width="1.2" fill="none" stroke-linecap="round" stroke-linejoin="round"/>
<path d="M514.2,296.4L514.2,310.7" stroke="#e6222a" stroke-width="1.2" fill="none" stroke-linecap="round" stroke-linejoin="round"/>
<path d="M547.7,296.4L547.7,310.7" stroke="#e6222a" stroke-width="1.2" fill="none" stroke-linecap="round" stroke-linejoin="round"/>
<path d="M581.2,296.4L581.2,310.7" stroke="#e6222a" stroke-width="1.2" fill="none" stroke-linecap="round" stroke-linejoin="round"/>
<path d="M619.5,296.4L617.9,296.4Q616.2,296.4 615.5,297.4L615.5,297.4Q614.8,298.4 614.8,300.4L614.8,310.7" stroke="#e6222a" stroke-width="1.3" fill="none" stroke-linecap="round" stroke-linejoin="round"/>
<path d="M360.9,283.0L360.9,290.0Q360.9,295.0 363.4,297.4L363.4,297.4Q366.0,299.8 371.0,299.8L578.0,299.8Q583.0,299.8 584.5,301.4L584.5,301.4Q586.0,303.0 586.0,308.0L586.0,325.0" stroke="#f5d60a" stroke-width="1.7" fill="none" stroke-linecap="round" stroke-linejoin="round"/>
<path d="M362.0,283.0L362.0,292.0Q362.0,297.0 364.5,299.2L364.5,299.2Q367.0,301.4 372.0,301.4L583.0,301.4Q588.0,301.4 589.4,303.2L589.4,303.2Q590.8,305.0 590.8,310.0L590.8,325.0" stroke="#f5d60a" stroke-width="1.7" fill="none" stroke-linecap="round" stroke-linejoin="round"/>
<path d="M363.1,283.0L363.1,294.0Q363.1,299.0 365.6,301.0L365.6,301.0Q368.0,303.0 373.0,303.0L608.0,303.0" stroke="#f5d60a" stroke-width="1.6" fill="none" stroke-linecap="round" stroke-linejoin="round"/>
<path d="M363.6,283.0L363.6,295.0Q363.6,300.0 366.3,302.1L366.3,302.1Q369.0,304.3 374.0,304.3L560.0,304.3" stroke="#f5d60a" stroke-width="1.5" fill="none" stroke-linecap="round" stroke-linejoin="round"/>
<path d="M362.4,298.0L362.4,376.0Q362.4,380.0 364.7,382.2L364.7,382.2Q367.0,384.4 371.0,384.4L588.0,384.4Q592.0,384.4 593.8,382.2L593.8,382.2Q595.6,380.0 595.6,376.0L595.6,348.9" stroke="#f5d60a" stroke-width="2.0" fill="none" stroke-linecap="round" stroke-linejoin="round"/>
<path d="M363.6,300.0L363.6,378.0Q363.6,382.0 365.8,383.8L365.8,383.8Q368.0,385.6 372.0,385.6L480.0,385.6" stroke="#f5d60a" stroke-width="1.5" fill="none" stroke-linecap="round" stroke-linejoin="round"/>
<path d="M374.0,304.0L371.5,304.2Q369.0,304.5 367.3,306.2L367.3,306.2Q365.6,308.0 365.6,311.5L365.6,342.0Q365.6,345.5 367.3,347.4L367.3,347.4Q369.0,349.3 372.5,349.3L414.0,349.3Q417.5,349.3 418.0,349.1L418.5,348.9" stroke="#f5d60a" stroke-width="1.5" fill="none" stroke-linecap="round" stroke-linejoin="round"/>
<path d="M376.0,304.0L373.5,304.5Q371.0,305.0 369.0,307.0L369.0,307.0Q367.0,309.0 367.0,312.5L367.0,346.5Q367.0,350.0 369.0,351.8L369.0,351.8Q371.0,353.6 374.5,353.6L427.3,353.6Q430.8,353.6 431.8,351.2L432.8,348.9" stroke="#f5d60a" stroke-width="1.5" fill="none" stroke-linecap="round" stroke-linejoin="round"/>
<path d="M380.2,304.0L371.0,304.3Q368.0,304.4 366.2,306.2L366.2,306.2Q364.5,308.0 364.5,311.0L364.5,380.0" stroke="#ef8205" stroke-width="0.9" fill="none" stroke-linecap="round" stroke-linejoin="round"/>
<path d="M385.0,304.0L374.0,304.6Q371.0,304.8 369.4,306.4L369.4,306.4Q367.9,308.0 367.9,311.0L367.9,346.0" stroke="#ef8205" stroke-width="0.9" fill="none" stroke-linecap="round" stroke-linejoin="round"/>
<path d="M480.0,386.9L592.0,386.9Q596.0,386.9 598.2,384.9L598.2,384.9Q600.4,383.0 600.4,379.0L600.4,348.9" stroke="#f5d60a" stroke-width="1.6" fill="none" stroke-linecap="round" stroke-linejoin="round"/>
<path d="M432.8,310.7L432.8,306.0" stroke="#f5d60a" stroke-width="1.5" fill="none" stroke-linecap="round" stroke-linejoin="round"/>
<path d="M437.6,310.7L437.6,306.0" stroke="#f5d60a" stroke-width="1.5" fill="none" stroke-linecap="round" stroke-linejoin="round"/>
<path d="M485.5,310.7L485.5,306.5" stroke="#ef8205" stroke-width="1.4" fill="none" stroke-linecap="round" stroke-linejoin="round"/>
<path d="M490.3,310.7L490.3,306.5" stroke="#ef8205" stroke-width="1.4" fill="none" stroke-linecap="round" stroke-linejoin="round"/>
<path d="M495.1,310.7L495.1,331.8" stroke="#ef8205" stroke-width="1.4" fill="none" stroke-linecap="round" stroke-linejoin="round"/>
<path d="M504.6,310.7L504.6,298.0" stroke="#ef8205" stroke-width="1.4" fill="none" stroke-linecap="round" stroke-linejoin="round"/>
<path d="M515.5,296.0L515.5,316.0Q515.5,318.0 516.8,319.5L517.7,320.5Q519.0,322.0 519.0,323.5L519.0,325.0" stroke="#ef8205" stroke-width="1.4" fill="none" stroke-linecap="round" stroke-linejoin="round"/>
<path d="M523.8,325.0L523.8,284.0" stroke="#ef8205" stroke-width="1.4" fill="none" stroke-linecap="round" stroke-linejoin="round"/>
<path d="M538.2,325.0L538.2,284.0" stroke="#ef8205" stroke-width="1.4" fill="none" stroke-linecap="round" stroke-linejoin="round"/>
<path d="M518.4,300.0L518.4,284.0" stroke="#ef8205" stroke-width="1.4" fill="none" stroke-linecap="round" stroke-linejoin="round"/>
<path d="M568.0,284.6L569.3,284.8Q570.7,285.0 571.2,286.5L571.2,286.5Q571.7,288.0 571.7,290.0L571.7,310.7" stroke="#ef8205" stroke-width="1.4" fill="none" stroke-linecap="round" stroke-linejoin="round"/>
<path d="M562.0,284.6L563.9,285.1Q565.9,285.5 566.4,286.8L566.4,286.8Q566.9,288.0 566.9,290.0L566.9,310.7" stroke="#ef8205" stroke-width="1.4" fill="none" stroke-linecap="round" stroke-linejoin="round"/>
<path d="M576.5,325.0L574.8,332.8" stroke="#ef8205" stroke-width="1.4" fill="none" stroke-linecap="round" stroke-linejoin="round"/>
<path d="M638.1,296.0L638.1,298.0Q638.1,300.0 636.1,301.7L634.1,303.4" stroke="#ef8205" stroke-width="1.4" fill="none" stroke-linecap="round" stroke-linejoin="round"/>
<path d="M642.9,296.0L642.9,298.0Q642.9,300.0 640.9,301.7L638.9,303.4" stroke="#ef8205" stroke-width="1.4" fill="none" stroke-linecap="round" stroke-linejoin="round"/>
<path d="M671.6,296.0L671.6,298.0Q671.6,300.0 669.6,301.7L667.6,303.4" stroke="#ef8205" stroke-width="1.4" fill="none" stroke-linecap="round" stroke-linejoin="round"/>
<path d="M367.5,339.0L367.5,344.0Q367.5,346.0 368.8,347.1L368.8,347.1Q370.0,348.3 372.0,348.5L375.4,348.9" stroke="#ef8205" stroke-width="1.3" fill="none" stroke-linecap="round" stroke-linejoin="round"/>
<path d="M495.1,342.1L495.1,348.9" stroke="#ef8205" stroke-width="1.4" fill="none" stroke-linecap="round" stroke-linejoin="round"/>
<path d="M499.9,348.9L499.9,383.0" stroke="#ef8205" stroke-width="1.4" fill="none" stroke-linecap="round" stroke-linejoin="round"/>
<path d="M547.7,342.1L547.7,348.9" stroke="#ef8205" stroke-width="1.4" fill="none" stroke-linecap="round" stroke-linejoin="round"/>
<path d="M557.3,348.9L562.1,348.9" stroke="#ef8205" stroke-width="1.4" fill="none" stroke-linecap="round" stroke-linejoin="round"/>
<path d="M528.6,363.3L528.6,383.0" stroke="#ef8205" stroke-width="1.4" fill="none" stroke-linecap="round" stroke-linejoin="round"/>
<path d="M533.4,363.3L533.4,383.0" stroke="#ef8205" stroke-width="1.4" fill="none" stroke-linecap="round" stroke-linejoin="round"/>
<path d="M552.5,348.9L552.5,383.0" stroke="#ef8205" stroke-width="1.4" fill="none" stroke-linecap="round" stroke-linejoin="round"/>
<path d="M566.9,348.9L566.9,383.0" stroke="#ef8205" stroke-width="1.4" fill="none" stroke-linecap="round" stroke-linejoin="round"/>
<path d="M389.8,310.7L389.8,319.0Q389.8,322.0 391.5,324.5L392.9,326.5Q394.5,329.0 394.5,330.4L394.5,331.8" stroke="#40b63a" stroke-width="1.5" fill="none" stroke-linecap="round" stroke-linejoin="round"/>
<path d="M404.1,310.7L418.5,310.7" stroke="#40b63a" stroke-width="1.8" fill="none" stroke-linecap="round" stroke-linejoin="round"/>
<path d="M423.3,315.4L422.8,316.7Q422.3,318.0 419.3,318.0L406.0,318.0Q403.0,318.0 401.2,320.0L401.2,320.0Q399.3,322.0 399.3,325.0L399.3,331.8" stroke="#40b63a" stroke-width="1.5" fill="none" stroke-linecap="round" stroke-linejoin="round"/>
<path d="M450.0,305.7L448.6,307.4Q447.2,309.0 447.2,312.0L447.2,332.8" stroke="#40b63a" stroke-width="1.5" fill="none" stroke-linecap="round" stroke-linejoin="round"/>
<path d="M455.0,305.7L453.5,307.9Q452.0,310.0 452.0,313.0L452.0,332.8" stroke="#40b63a" stroke-width="1.5" fill="none" stroke-linecap="round" stroke-linejoin="round"/>
<path d="M471.1,325.0L471.1,312.0Q471.1,309.0 472.6,307.4L474.1,305.7" stroke="#40b63a" stroke-width="1.5" fill="none" stroke-linecap="round" stroke-linejoin="round"/>
<path d="M486.5,306.0L486.5,332.8" stroke="#40b63a" stroke-width="1.5" fill="none" stroke-linecap="round" stroke-linejoin="round"/>
<path d="M437.6,332.8L437.6,324.0Q437.6,321.0 438.6,320.1L438.6,320.1Q439.6,319.2 442.6,319.2L469.9,319.2Q472.9,319.2 474.3,321.9L475.9,325.0" stroke="#40b63a" stroke-width="1.5" fill="none" stroke-linecap="round" stroke-linejoin="round"/>
<path d="M436.1,332.8L436.1,327.0Q436.1,325.0 437.4,323.9L437.4,323.9Q438.6,322.8 440.6,322.8L452.8,322.8Q454.8,322.8 455.8,323.9L456.8,325.0" stroke="#40b63a" stroke-width="1.5" fill="none" stroke-linecap="round" stroke-linejoin="round"/>
<path d="M442.4,325.0L452.0,325.0" stroke="#40b63a" stroke-width="1.5" fill="none" stroke-linecap="round" stroke-linejoin="round"/>
<path d="M509.4,325.0L512.2,325.3Q514.2,325.5 514.9,327.4L516.6,331.8" stroke="#40b63a" stroke-width="1.5" fill="none" stroke-linecap="round" stroke-linejoin="round"/>
<path d="M528.6,325.0L533.4,325.0" stroke="#40b63a" stroke-width="1.5" fill="none" stroke-linecap="round" stroke-linejoin="round"/>
<path d="M542.9,325.0L543.4,323.9Q543.9,322.8 545.7,322.8L549.7,322.8Q551.5,322.8 552.0,323.9L552.5,325.0" stroke="#40b63a" stroke-width="1.5" fill="none" stroke-linecap="round" stroke-linejoin="round"/>
<path d="M557.3,325.0L553.0,332.8" stroke="#40b63a" stroke-width="1.5" fill="none" stroke-linecap="round" stroke-linejoin="round"/>
<path d="M595.6,320.2L600.4,320.2" stroke="#40b63a" stroke-width="1.5" fill="none" stroke-linecap="round" stroke-linejoin="round"/>
<path d="M610.0,320.2L619.5,320.2" stroke="#40b63a" stroke-width="1.5" fill="none" stroke-linecap="round" stroke-linejoin="round"/>
<path d="M624.3,320.2L624.3,332.8" stroke="#40b63a" stroke-width="1.5" fill="none" stroke-linecap="round" stroke-linejoin="round"/>
<path d="M604.6,296.0L604.6,298.0Q604.6,300.0 602.8,301.7L601.1,303.4" stroke="#40b63a" stroke-width="1.5" fill="none" stroke-linecap="round" stroke-linejoin="round"/>
<path d="M609.4,296.0L609.4,298.0Q609.4,300.0 607.6,301.7L607.6,301.7Q605.9,303.4 604.9,303.4L604.0,303.4" stroke="#40b63a" stroke-width="1.5" fill="none" stroke-linecap="round" stroke-linejoin="round"/>
<path d="M623.7,296.0L623.7,297.8Q623.7,299.5 622.0,301.1L622.0,301.1Q620.2,302.8 617.2,302.8L612.0,302.8" stroke="#40b63a" stroke-width="1.5" fill="none" stroke-linecap="round" stroke-linejoin="round"/>
<path d="M595.0,290.0L595.0,297.0Q595.0,300.0 593.0,302.2L591.0,304.5" stroke="#40b63a" stroke-width="1.5" fill="none" stroke-linecap="round" stroke-linejoin="round"/>
<path d="M440.0,325.0L443.5,318.8" stroke="#40b63a" stroke-width="1.5" fill="none" stroke-linecap="round" stroke-linejoin="round"/>
<path d="M436.5,334.0L437.8,324.0Q438.0,322.0 439.5,320.7L441.0,319.4" stroke="#40b63a" stroke-width="1.5" fill="none" stroke-linecap="round" stroke-linejoin="round"/>
<path d="M437.6,325.0L442.4,325.0" stroke="#40b63a" stroke-width="1.5" fill="none" stroke-linecap="round" stroke-linejoin="round"/>
<path d="M428.1,316.0L672.2,316.0" stroke="#d32c93" stroke-width="1.9" fill="none" stroke-linecap="round" stroke-linejoin="round"/>
<path d="M461.6,325.0L461.6,320.5Q461.6,319.0 463.0,318.8L466.4,318.2" stroke="#d32c93" stroke-width="1.5" fill="none" stroke-linecap="round" stroke-linejoin="round"/>
<path d="M562.1,325.0L633.0,325.0Q637.0,325.0 639.0,326.5L639.0,326.5Q641.0,328.0 643.4,331.2L649.0,339.0" stroke="#d32c93" stroke-width="1.3" fill="none" stroke-linecap="round" stroke-linejoin="round"/>
<path d="M667.4,291.4L667.4,310.7" stroke="#d32c93" stroke-width="1.4" fill="none" stroke-linecap="round" stroke-linejoin="round"/>
<path d="M662.6,310.7L660.6,311.9Q658.6,313.0 655.6,313.0L643.0,313.0Q640.0,313.0 638.1,314.5L638.1,314.5Q636.2,316.0 636.2,319.0L636.2,342.5Q636.2,345.5 634.6,347.4L634.6,347.4Q633.0,349.3 630.0,349.3L620.0,349.3" stroke="#d32c93" stroke-width="1.3" fill="none" stroke-linecap="round" stroke-linejoin="round"/>
<path d="M628.0,317.0L647.5,317.2Q650.0,317.2 652.5,317.5L677.0,320.2" stroke="#d32c93" stroke-width="1.3" fill="none" stroke-linecap="round" stroke-linejoin="round"/>
<path d="M628.0,320.4L658.0,320.4" stroke="#d32c93" stroke-width="1.2" fill="none" stroke-linecap="round" stroke-linejoin="round"/>
<path d="M649.0,339.0L657.8,363.3" stroke="#d32c93" stroke-width="1.3" fill="none" stroke-linecap="round" stroke-linejoin="round"/>
<path d="M590.8,348.9L617.5,348.9Q620.0,348.9 622.5,349.0L633.0,349.3" stroke="#d32c93" stroke-width="1.3" fill="none" stroke-linecap="round" stroke-linejoin="round"/>
<path d="M523.8,363.3L523.8,365.1Q523.8,367.0 525.3,368.3L525.3,368.3Q526.8,369.6 529.3,369.6L647.5,369.6Q650.0,369.6 652.5,369.2L657.5,368.2Q660.0,367.8 661.3,365.6L662.6,363.3" stroke="#d32c93" stroke-width="1.5" fill="none" stroke-linecap="round" stroke-linejoin="round"/>
<path d="M490.3,363.3L490.3,365.6Q490.3,368.0 491.8,369.7L491.8,369.7Q493.3,371.4 496.3,371.4L652.0,371.4Q655.0,371.4 657.9,370.7L665.1,369.2Q668.0,368.5 669.9,366.2L672.2,363.3" stroke="#d32c93" stroke-width="1.5" fill="none" stroke-linecap="round" stroke-linejoin="round"/>
<path d="M667.4,363.3L667.4,377.7" stroke="#d32c93" stroke-width="1.4" fill="none" stroke-linecap="round" stroke-linejoin="round"/>
<path d="M385.0,377.7L373.0,379.1Q370.0,379.4 367.0,379.7L348.0,381.3Q345.0,381.6 342.0,381.8L335.6,382.2" stroke="#d32c93" stroke-width="1.3" fill="none" stroke-linecap="round" stroke-linejoin="round"/>
<path d="M385.0,382.5L385.0,386.0Q385.0,389.0 383.5,390.4L383.5,390.4Q382.0,391.7 379.0,391.7L341.0,391.7Q338.0,391.7 336.8,390.4L336.8,390.4Q335.6,389.0 335.6,388.0L335.6,387.0" stroke="#d32c93" stroke-width="1.3" fill="none" stroke-linecap="round" stroke-linejoin="round"/>
<path d="M394.5,342.1L394.5,348.9" stroke="#40b63a" stroke-width="1.5" fill="none" stroke-linecap="round" stroke-linejoin="round"/>
<path d="M399.3,342.1L399.3,348.9" stroke="#40b63a" stroke-width="1.5" fill="none" stroke-linecap="round" stroke-linejoin="round"/>
<path d="M423.3,348.9L428.1,348.9" stroke="#40b63a" stroke-width="1.5" fill="none" stroke-linecap="round" stroke-linejoin="round"/>
<path d="M404.1,363.3L404.1,377.7" stroke="#40b63a" stroke-width="1.5" fill="none" stroke-linecap="round" stroke-linejoin="round"/>
<path d="M437.6,348.9L466.4,348.9" stroke="#40b63a" stroke-width="1.5" fill="none" stroke-linecap="round" stroke-linejoin="round"/>
<path d="M437.6,342.1L437.6,348.9" stroke="#40b63a" stroke-width="1.5" fill="none" stroke-linecap="round" stroke-linejoin="round"/>
<path d="M447.2,342.1L447.2,348.9" stroke="#40b63a" stroke-width="1.5" fill="none" stroke-linecap="round" stroke-linejoin="round"/>
<path d="M452.0,342.1L452.0,348.9" stroke="#40b63a" stroke-width="1.5" fill="none" stroke-linecap="round" stroke-linejoin="round"/>
<path d="M485.5,342.1L485.5,348.9" stroke="#40b63a" stroke-width="1.5" fill="none" stroke-linecap="round" stroke-linejoin="round"/>
<path d="M519.0,342.1L519.0,348.9" stroke="#40b63a" stroke-width="1.5" fill="none" stroke-linecap="round" stroke-linejoin="round"/>
<path d="M471.1,348.9L480.7,348.9" stroke="#40b63a" stroke-width="1.5" fill="none" stroke-linecap="round" stroke-linejoin="round"/>
<path d="M504.6,348.9L514.2,348.9" stroke="#40b63a" stroke-width="1.5" fill="none" stroke-linecap="round" stroke-linejoin="round"/>
<path d="M571.7,348.9L581.2,348.9" stroke="#40b63a" stroke-width="1.5" fill="none" stroke-linecap="round" stroke-linejoin="round"/>
<path d="M538.2,348.9L542.9,342.1" stroke="#40b63a" stroke-width="1.5" fill="none" stroke-linecap="round" stroke-linejoin="round"/>
<path d="M516.0,343.1L519.0,348.9" stroke="#40b63a" stroke-width="1.5" fill="none" stroke-linecap="round" stroke-linejoin="round"/>
<path d="M586.0,348.9L586.0,377.0Q586.0,380.0 584.5,381.5L584.5,381.5Q583.0,383.0 580.0,383.0L570.0,383.0" stroke="#40b63a" stroke-width="1.5" fill="none" stroke-linecap="round" stroke-linejoin="round"/>
<path d="M623.7,343.0L623.7,345.5Q623.7,348.0 621.9,349.6L621.9,349.6Q620.0,351.1 617.0,351.1L604.0,351.1" stroke="#40b63a" stroke-width="1.5" fill="none" stroke-linecap="round" stroke-linejoin="round"/>
<path d="M436.0,341.0L438.3,346.7Q439.0,348.6 440.9,349.1L445.0,350.0" stroke="#40b63a" stroke-width="1.5" fill="none" stroke-linecap="round" stroke-linejoin="round"/>
<path d="M442.4,363.3L442.4,377.7" stroke="#373737" stroke-width="1.3" fill="none" stroke-linecap="round" stroke-linejoin="round"/>
<path d="M475.9,363.3L475.9,377.7" stroke="#373737" stroke-width="1.3" fill="none" stroke-linecap="round" stroke-linejoin="round"/>
<path d="M509.4,363.3L509.4,377.7" stroke="#373737" stroke-width="1.3" fill="none" stroke-linecap="round" stroke-linejoin="round"/>
<path d="M542.9,363.3L542.9,377.7" stroke="#373737" stroke-width="1.3" fill="none" stroke-linecap="round" stroke-linejoin="round"/>
<path d="M576.5,363.3L576.5,377.7" stroke="#373737" stroke-width="1.3" fill="none" stroke-linecap="round" stroke-linejoin="round"/>
<path d="M610.0,363.3L610.0,377.7" stroke="#373737" stroke-width="1.3" fill="none" stroke-linecap="round" stroke-linejoin="round"/>
<path d="M643.5,363.3L643.5,372.5Q643.5,374.5 642.2,376.1L642.2,376.1Q641.0,377.7 639.8,377.7L638.7,377.7" stroke="#373737" stroke-width="1.3" fill="none" stroke-linecap="round" stroke-linejoin="round"/>
<path d="M340.4,295.9L350.6,293.4Q354.5,292.4 356.9,294.7L356.9,294.7Q359.2,297.0 359.2,301.0L359.2,368.0Q359.2,372.0 357.1,375.2L357.1,375.2Q355.0,378.5 351.1,379.3L335.6,382.2" stroke="#373737" stroke-width="1.3" fill="none" stroke-linecap="round" stroke-linejoin="round"/>
<path d="M340.4,300.9L361.0,297.0" stroke="#e6222a" stroke-width="1.3" fill="none" stroke-linecap="round" stroke-linejoin="round"/>
<path d="M340.4,387.0L364.0,383.2" stroke="#e6222a" stroke-width="1.2" fill="none" stroke-linecap="round" stroke-linejoin="round"/>
<path d="M456.2,240.9L456.2,295.3Q456.2,298.8 452.7,298.8L383.7,298.8Q380.2,298.8 380.2,302.3L380.2,310.7" stroke="#ef8205" stroke-width="1.3" fill="none" stroke-linecap="round" stroke-linejoin="round"/>
<path d="M461.0,217.0L461.0,295.9Q461.0,299.4 457.5,299.4L388.5,299.4Q385.0,299.4 385.0,302.9L385.0,310.7" stroke="#ef8205" stroke-width="1.3" fill="none" stroke-linecap="round" stroke-linejoin="round"/>
<path d="M470.5,245.7L470.5,296.5Q470.5,300.0 467.0,300.0L398.0,300.0Q394.5,300.0 394.5,303.5L394.5,310.7" stroke="#ef8205" stroke-width="1.3" fill="none" stroke-linecap="round" stroke-linejoin="round"/>
<path d="M475.3,217.0L475.3,303.0Q475.3,306.5 471.8,306.5L402.8,306.5Q399.3,306.5 399.3,308.6L399.3,310.7" stroke="#ef8205" stroke-width="1.3" fill="none" stroke-linecap="round" stroke-linejoin="round"/><rect x="47.5" y="117.7" width="33.5" height="9.8" fill="#363636"/>
<text x="64.3" y="124.0" font-size="3.75" fill="#d8d8d8" text-anchor="middle" font-weight="bold">74HC08</text>
<path d="M49.7,126.9l1.1,-1.6l1.1,1.6z" fill="#e8e8e8"/>
<path d="M47.5,121.4a1.2,1.2 0 0 1 0,2.4z" fill="#222"/>
<rect x="81.0" y="117.7" width="33.5" height="9.8" fill="#363636"/>
<text x="97.8" y="124.0" font-size="3.75" fill="#d8d8d8" text-anchor="middle" font-weight="bold">74HC86</text>
<path d="M83.2,126.9l1.1,-1.6l1.1,1.6z" fill="#e8e8e8"/>
<path d="M81.0,121.4a1.2,1.2 0 0 1 0,2.4z" fill="#222"/>
<rect x="114.5" y="117.7" width="33.5" height="9.8" fill="#363636"/>
<text x="131.3" y="124.0" font-size="3.75" fill="#d8d8d8" text-anchor="middle" font-weight="bold">74HC08</text>
<path d="M116.7,126.9l1.1,-1.6l1.1,1.6z" fill="#e8e8e8"/>
<path d="M114.5,121.4a1.2,1.2 0 0 1 0,2.4z" fill="#222"/>
<rect x="148.0" y="117.7" width="33.5" height="9.8" fill="#363636"/>
<text x="164.8" y="124.0" font-size="3.75" fill="#d8d8d8" text-anchor="middle" font-weight="bold">74HC86</text>
<path d="M150.2,126.9l1.1,-1.6l1.1,1.6z" fill="#e8e8e8"/>
<path d="M148.0,121.4a1.2,1.2 0 0 1 0,2.4z" fill="#222"/>
<rect x="181.5" y="117.7" width="33.5" height="9.8" fill="#363636"/>
<text x="198.3" y="124.0" font-size="3.75" fill="#d8d8d8" text-anchor="middle" font-weight="bold">74HC08</text>
<path d="M183.7,126.9l1.1,-1.6l1.1,1.6z" fill="#e8e8e8"/>
<path d="M181.5,121.4a1.2,1.2 0 0 1 0,2.4z" fill="#222"/>
<rect x="215.0" y="117.7" width="33.5" height="9.8" fill="#363636"/>
<text x="231.8" y="124.0" font-size="3.75" fill="#d8d8d8" text-anchor="middle" font-weight="bold">74HC86</text>
<path d="M217.2,126.9l1.1,-1.6l1.1,1.6z" fill="#e8e8e8"/>
<path d="M215.0,121.4a1.2,1.2 0 0 1 0,2.4z" fill="#222"/>
<rect x="320.4" y="117.7" width="33.5" height="9.8" fill="#363636"/>
<text x="337.2" y="124.0" font-size="3.75" fill="#d8d8d8" text-anchor="middle" font-weight="bold">74HC08</text>
<path d="M322.6,126.9l1.1,-1.6l1.1,1.6z" fill="#e8e8e8"/>
<path d="M320.4,121.4a1.2,1.2 0 0 1 0,2.4z" fill="#222"/>
<line x1="58.0" y1="189.9" x2="58.0" y2="209.4" stroke="#9a9a9a" stroke-width="0.9"/>
<path d="M55.3,194.2q0,-1.6 2.7,-1.6q2.7,0 2.7,1.6l-0.5,2.6v5.0l0.5,2.6q0,1.6 -2.7,1.6q-2.7,0 -2.7,-1.6l0.5,-2.6v-5.0z" fill="#e2b96f"/>
<rect x="55.9" y="197.8" width="4.2" height="1.1" fill="#a4551f"/>
<rect x="55.9" y="200.0" width="4.2" height="1.6" fill="#33261a"/>
<rect x="55.9" y="202.6" width="4.2" height="1.1" fill="#93301c"/>
<rect x="47.4" y="224.3" width="11.6" height="11.8" rx="0.8" fill="#c9c9c9"/>
<circle cx="48.9" cy="225.9" r="1.3" fill="#555"/>
<circle cx="48.9" cy="234.5" r="1.3" fill="#555"/>
<circle cx="57.5" cy="225.9" r="1.3" fill="#555"/>
<circle cx="57.5" cy="234.5" r="1.3" fill="#555"/>
<circle cx="53.2" cy="230.2" r="3.3" fill="#333"/>
<line x1="72.3" y1="189.9" x2="72.3" y2="209.4" stroke="#9a9a9a" stroke-width="0.9"/>
<path d="M69.6,194.2q0,-1.6 2.7,-1.6q2.7,0 2.7,1.6l-0.5,2.6v5.0l0.5,2.6q0,1.6 -2.7,1.6q-2.7,0 -2.7,-1.6l0.5,-2.6v-5.0z" fill="#e2b96f"/>
<rect x="70.2" y="197.8" width="4.2" height="1.1" fill="#a4551f"/>
<rect x="70.2" y="200.0" width="4.2" height="1.6" fill="#33261a"/>
<rect x="70.2" y="202.6" width="4.2" height="1.1" fill="#93301c"/>
<rect x="61.7" y="224.3" width="11.6" height="11.8" rx="0.8" fill="#c9c9c9"/>
<circle cx="63.2" cy="225.9" r="1.3" fill="#555"/>
<circle cx="63.2" cy="234.5" r="1.3" fill="#555"/>
<circle cx="71.8" cy="225.9" r="1.3" fill="#555"/>
<circle cx="71.8" cy="234.5" r="1.3" fill="#555"/>
<circle cx="67.5" cy="230.2" r="3.3" fill="#333"/>
<line x1="86.7" y1="189.9" x2="86.7" y2="209.4" stroke="#9a9a9a" stroke-width="0.9"/>
<path d="M84.0,194.2q0,-1.6 2.7,-1.6q2.7,0 2.7,1.6l-0.5,2.6v5.0l0.5,2.6q0,1.6 -2.7,1.6q-2.7,0 -2.7,-1.6l0.5,-2.6v-5.0z" fill="#e2b96f"/>
<rect x="84.6" y="197.8" width="4.2" height="1.1" fill="#a4551f"/>
<rect x="84.6" y="200.0" width="4.2" height="1.6" fill="#33261a"/>
<rect x="84.6" y="202.6" width="4.2" height="1.1" fill="#93301c"/>
<rect x="76.1" y="224.3" width="11.6" height="11.8" rx="0.8" fill="#c9c9c9"/>
<circle cx="77.6" cy="225.9" r="1.3" fill="#555"/>
<circle cx="77.6" cy="234.5" r="1.3" fill="#555"/>
<circle cx="86.2" cy="225.9" r="1.3" fill="#555"/>
<circle cx="86.2" cy="234.5" r="1.3" fill="#555"/>
<circle cx="81.9" cy="230.2" r="3.3" fill="#333"/>
<line x1="101.1" y1="189.9" x2="101.1" y2="209.4" stroke="#9a9a9a" stroke-width="0.9"/>
<path d="M98.4,194.2q0,-1.6 2.7,-1.6q2.7,0 2.7,1.6l-0.5,2.6v5.0l0.5,2.6q0,1.6 -2.7,1.6q-2.7,0 -2.7,-1.6l0.5,-2.6v-5.0z" fill="#e2b96f"/>
<rect x="99.0" y="197.8" width="4.2" height="1.1" fill="#a4551f"/>
<rect x="99.0" y="200.0" width="4.2" height="1.6" fill="#33261a"/>
<rect x="99.0" y="202.6" width="4.2" height="1.1" fill="#93301c"/>
<rect x="90.5" y="224.3" width="11.6" height="11.8" rx="0.8" fill="#c9c9c9"/>
<circle cx="92.0" cy="225.9" r="1.3" fill="#555"/>
<circle cx="92.0" cy="234.5" r="1.3" fill="#555"/>
<circle cx="100.6" cy="225.9" r="1.3" fill="#555"/>
<circle cx="100.6" cy="234.5" r="1.3" fill="#555"/>
<circle cx="96.3" cy="230.2" r="3.3" fill="#333"/>
<line x1="115.4" y1="189.9" x2="115.4" y2="209.4" stroke="#9a9a9a" stroke-width="0.9"/>
<path d="M112.7,194.2q0,-1.6 2.7,-1.6q2.7,0 2.7,1.6l-0.5,2.6v5.0l0.5,2.6q0,1.6 -2.7,1.6q-2.7,0 -2.7,-1.6l0.5,-2.6v-5.0z" fill="#e2b96f"/>
<rect x="113.3" y="197.8" width="4.2" height="1.1" fill="#a4551f"/>
<rect x="113.3" y="200.0" width="4.2" height="1.6" fill="#33261a"/>
<rect x="113.3" y="202.6" width="4.2" height="1.1" fill="#93301c"/>
<rect x="104.8" y="224.3" width="11.6" height="11.8" rx="0.8" fill="#c9c9c9"/>
<circle cx="106.3" cy="225.9" r="1.3" fill="#555"/>
<circle cx="106.3" cy="234.5" r="1.3" fill="#555"/>
<circle cx="114.9" cy="225.9" r="1.3" fill="#555"/>
<circle cx="114.9" cy="234.5" r="1.3" fill="#555"/>
<circle cx="110.6" cy="230.2" r="3.3" fill="#333"/>
<line x1="129.8" y1="189.9" x2="129.8" y2="209.4" stroke="#9a9a9a" stroke-width="0.9"/>
<path d="M127.1,194.2q0,-1.6 2.7,-1.6q2.7,0 2.7,1.6l-0.5,2.6v5.0l0.5,2.6q0,1.6 -2.7,1.6q-2.7,0 -2.7,-1.6l0.5,-2.6v-5.0z" fill="#e2b96f"/>
<rect x="127.7" y="197.8" width="4.2" height="1.1" fill="#a4551f"/>
<rect x="127.7" y="200.0" width="4.2" height="1.6" fill="#33261a"/>
<rect x="127.7" y="202.6" width="4.2" height="1.1" fill="#93301c"/>
<rect x="119.2" y="224.3" width="11.6" height="11.8" rx="0.8" fill="#c9c9c9"/>
<circle cx="120.7" cy="225.9" r="1.3" fill="#555"/>
<circle cx="120.7" cy="234.5" r="1.3" fill="#555"/>
<circle cx="129.3" cy="225.9" r="1.3" fill="#555"/>
<circle cx="129.3" cy="234.5" r="1.3" fill="#555"/>
<circle cx="125.0" cy="230.2" r="3.3" fill="#333"/>
<line x1="144.1" y1="189.9" x2="144.1" y2="209.4" stroke="#9a9a9a" stroke-width="0.9"/>
<path d="M141.4,194.2q0,-1.6 2.7,-1.6q2.7,0 2.7,1.6l-0.5,2.6v5.0l0.5,2.6q0,1.6 -2.7,1.6q-2.7,0 -2.7,-1.6l0.5,-2.6v-5.0z" fill="#e2b96f"/>
<rect x="142.0" y="197.8" width="4.2" height="1.1" fill="#a4551f"/>
<rect x="142.0" y="200.0" width="4.2" height="1.6" fill="#33261a"/>
<rect x="142.0" y="202.6" width="4.2" height="1.1" fill="#93301c"/>
<rect x="133.6" y="224.3" width="11.6" height="11.8" rx="0.8" fill="#c9c9c9"/>
<circle cx="135.1" cy="225.9" r="1.3" fill="#555"/>
<circle cx="135.1" cy="234.5" r="1.3" fill="#555"/>
<circle cx="143.7" cy="225.9" r="1.3" fill="#555"/>
<circle cx="143.7" cy="234.5" r="1.3" fill="#555"/>
<circle cx="139.4" cy="230.2" r="3.3" fill="#333"/>
<line x1="158.5" y1="189.9" x2="158.5" y2="209.4" stroke="#9a9a9a" stroke-width="0.9"/>
<path d="M155.8,194.2q0,-1.6 2.7,-1.6q2.7,0 2.7,1.6l-0.5,2.6v5.0l0.5,2.6q0,1.6 -2.7,1.6q-2.7,0 -2.7,-1.6l0.5,-2.6v-5.0z" fill="#e2b96f"/>
<rect x="156.4" y="197.8" width="4.2" height="1.1" fill="#a4551f"/>
<rect x="156.4" y="200.0" width="4.2" height="1.6" fill="#33261a"/>
<rect x="156.4" y="202.6" width="4.2" height="1.1" fill="#93301c"/>
<rect x="147.9" y="224.3" width="11.6" height="11.8" rx="0.8" fill="#c9c9c9"/>
<circle cx="149.4" cy="225.9" r="1.3" fill="#555"/>
<circle cx="149.4" cy="234.5" r="1.3" fill="#555"/>
<circle cx="158.0" cy="225.9" r="1.3" fill="#555"/>
<circle cx="158.0" cy="234.5" r="1.3" fill="#555"/>
<circle cx="153.7" cy="230.2" r="3.3" fill="#333"/>
<line x1="172.9" y1="189.9" x2="172.9" y2="209.4" stroke="#9a9a9a" stroke-width="0.9"/>
<path d="M170.2,194.2q0,-1.6 2.7,-1.6q2.7,0 2.7,1.6l-0.5,2.6v5.0l0.5,2.6q0,1.6 -2.7,1.6q-2.7,0 -2.7,-1.6l0.5,-2.6v-5.0z" fill="#e2b96f"/>
<rect x="170.8" y="197.8" width="4.2" height="1.1" fill="#a4551f"/>
<rect x="170.8" y="200.0" width="4.2" height="1.6" fill="#33261a"/>
<rect x="170.8" y="202.6" width="4.2" height="1.1" fill="#93301c"/>
<rect x="162.3" y="224.3" width="11.6" height="11.8" rx="0.8" fill="#c9c9c9"/>
<circle cx="163.8" cy="225.9" r="1.3" fill="#555"/>
<circle cx="163.8" cy="234.5" r="1.3" fill="#555"/>
<circle cx="172.4" cy="225.9" r="1.3" fill="#555"/>
<circle cx="172.4" cy="234.5" r="1.3" fill="#555"/>
<circle cx="168.1" cy="230.2" r="3.3" fill="#333"/>
<line x1="187.2" y1="189.9" x2="187.2" y2="209.4" stroke="#9a9a9a" stroke-width="0.9"/>
<path d="M184.5,194.2q0,-1.6 2.7,-1.6q2.7,0 2.7,1.6l-0.5,2.6v5.0l0.5,2.6q0,1.6 -2.7,1.6q-2.7,0 -2.7,-1.6l0.5,-2.6v-5.0z" fill="#e2b96f"/>
<rect x="185.1" y="197.8" width="4.2" height="1.1" fill="#a4551f"/>
<rect x="185.1" y="200.0" width="4.2" height="1.6" fill="#33261a"/>
<rect x="185.1" y="202.6" width="4.2" height="1.1" fill="#93301c"/>
<rect x="176.6" y="224.3" width="11.6" height="11.8" rx="0.8" fill="#c9c9c9"/>
<circle cx="178.1" cy="225.9" r="1.3" fill="#555"/>
<circle cx="178.1" cy="234.5" r="1.3" fill="#555"/>
<circle cx="186.7" cy="225.9" r="1.3" fill="#555"/>
<circle cx="186.7" cy="234.5" r="1.3" fill="#555"/>
<circle cx="182.4" cy="230.2" r="3.3" fill="#333"/>
<line x1="201.6" y1="189.9" x2="201.6" y2="209.4" stroke="#9a9a9a" stroke-width="0.9"/>
<path d="M198.9,194.2q0,-1.6 2.7,-1.6q2.7,0 2.7,1.6l-0.5,2.6v5.0l0.5,2.6q0,1.6 -2.7,1.6q-2.7,0 -2.7,-1.6l0.5,-2.6v-5.0z" fill="#e2b96f"/>
<rect x="199.5" y="197.8" width="4.2" height="1.1" fill="#a4551f"/>
<rect x="199.5" y="200.0" width="4.2" height="1.6" fill="#33261a"/>
<rect x="199.5" y="202.6" width="4.2" height="1.1" fill="#93301c"/>
<rect x="191.0" y="224.3" width="11.6" height="11.8" rx="0.8" fill="#c9c9c9"/>
<circle cx="192.5" cy="225.9" r="1.3" fill="#555"/>
<circle cx="192.5" cy="234.5" r="1.3" fill="#555"/>
<circle cx="201.1" cy="225.9" r="1.3" fill="#555"/>
<circle cx="201.1" cy="234.5" r="1.3" fill="#555"/>
<circle cx="196.8" cy="230.2" r="3.3" fill="#333"/>
<line x1="215.9" y1="189.9" x2="215.9" y2="209.4" stroke="#9a9a9a" stroke-width="0.9"/>
<path d="M213.2,194.2q0,-1.6 2.7,-1.6q2.7,0 2.7,1.6l-0.5,2.6v5.0l0.5,2.6q0,1.6 -2.7,1.6q-2.7,0 -2.7,-1.6l0.5,-2.6v-5.0z" fill="#e2b96f"/>
<rect x="213.8" y="197.8" width="4.2" height="1.1" fill="#a4551f"/>
<rect x="213.8" y="200.0" width="4.2" height="1.6" fill="#33261a"/>
<rect x="213.8" y="202.6" width="4.2" height="1.1" fill="#93301c"/>
<rect x="205.4" y="224.3" width="11.6" height="11.8" rx="0.8" fill="#c9c9c9"/>
<circle cx="206.9" cy="225.9" r="1.3" fill="#555"/>
<circle cx="206.9" cy="234.5" r="1.3" fill="#555"/>
<circle cx="215.5" cy="225.9" r="1.3" fill="#555"/>
<circle cx="215.5" cy="234.5" r="1.3" fill="#555"/>
<circle cx="211.2" cy="230.2" r="3.3" fill="#333"/>
<line x1="230.3" y1="189.9" x2="230.3" y2="209.4" stroke="#9a9a9a" stroke-width="0.9"/>
<path d="M227.6,194.2q0,-1.6 2.7,-1.6q2.7,0 2.7,1.6l-0.5,2.6v5.0l0.5,2.6q0,1.6 -2.7,1.6q-2.7,0 -2.7,-1.6l0.5,-2.6v-5.0z" fill="#e2b96f"/>
<rect x="228.2" y="197.8" width="4.2" height="1.1" fill="#a4551f"/>
<rect x="228.2" y="200.0" width="4.2" height="1.6" fill="#33261a"/>
<rect x="228.2" y="202.6" width="4.2" height="1.1" fill="#93301c"/>
<rect x="219.7" y="224.3" width="11.6" height="11.8" rx="0.8" fill="#c9c9c9"/>
<circle cx="221.2" cy="225.9" r="1.3" fill="#555"/>
<circle cx="221.2" cy="234.5" r="1.3" fill="#555"/>
<circle cx="229.8" cy="225.9" r="1.3" fill="#555"/>
<circle cx="229.8" cy="234.5" r="1.3" fill="#555"/>
<circle cx="225.5" cy="230.2" r="3.3" fill="#333"/>
<line x1="244.7" y1="189.9" x2="244.7" y2="209.4" stroke="#9a9a9a" stroke-width="0.9"/>
<path d="M242.0,194.2q0,-1.6 2.7,-1.6q2.7,0 2.7,1.6l-0.5,2.6v5.0l0.5,2.6q0,1.6 -2.7,1.6q-2.7,0 -2.7,-1.6l0.5,-2.6v-5.0z" fill="#e2b96f"/>
<rect x="242.6" y="197.8" width="4.2" height="1.1" fill="#a4551f"/>
<rect x="242.6" y="200.0" width="4.2" height="1.6" fill="#33261a"/>
<rect x="242.6" y="202.6" width="4.2" height="1.1" fill="#93301c"/>
<rect x="234.1" y="224.3" width="11.6" height="11.8" rx="0.8" fill="#c9c9c9"/>
<circle cx="235.6" cy="225.9" r="1.3" fill="#555"/>
<circle cx="235.6" cy="234.5" r="1.3" fill="#555"/>
<circle cx="244.2" cy="225.9" r="1.3" fill="#555"/>
<circle cx="244.2" cy="234.5" r="1.3" fill="#555"/>
<circle cx="239.9" cy="230.2" r="3.3" fill="#333"/>
<line x1="259.0" y1="189.9" x2="259.0" y2="209.4" stroke="#9a9a9a" stroke-width="0.9"/>
<path d="M256.3,194.2q0,-1.6 2.7,-1.6q2.7,0 2.7,1.6l-0.5,2.6v5.0l0.5,2.6q0,1.6 -2.7,1.6q-2.7,0 -2.7,-1.6l0.5,-2.6v-5.0z" fill="#e2b96f"/>
<rect x="256.9" y="197.8" width="4.2" height="1.1" fill="#a4551f"/>
<rect x="256.9" y="200.0" width="4.2" height="1.6" fill="#33261a"/>
<rect x="256.9" y="202.6" width="4.2" height="1.1" fill="#93301c"/>
<rect x="248.4" y="224.3" width="11.6" height="11.8" rx="0.8" fill="#c9c9c9"/>
<circle cx="249.9" cy="225.9" r="1.3" fill="#555"/>
<circle cx="249.9" cy="234.5" r="1.3" fill="#555"/>
<circle cx="258.5" cy="225.9" r="1.3" fill="#555"/>
<circle cx="258.5" cy="234.5" r="1.3" fill="#555"/>
<circle cx="254.2" cy="230.2" r="3.3" fill="#333"/>
<rect x="268.0" y="222.3" width="1.2" height="16" fill="#1b9bd8"/>
<rect x="268.8" y="224.0" width="6.4" height="10.4" rx="2.8" fill="#9c8420"/>
<rect x="277.6" y="222.3" width="1.2" height="16" fill="#1b9bd8"/>
<rect x="278.4" y="224.0" width="6.4" height="10.4" rx="2.8" fill="#9c8420"/>
<rect x="287.1" y="222.3" width="1.2" height="16" fill="#1b9bd8"/>
<rect x="287.9" y="224.0" width="6.4" height="10.4" rx="2.8" fill="#9c8420"/>
<rect x="296.7" y="222.3" width="1.2" height="16" fill="#1b9bd8"/>
<rect x="297.5" y="224.0" width="6.4" height="10.4" rx="2.8" fill="#9c8420"/>
<rect x="304.5" y="193.3" width="10.6" height="5.6" fill="#cfcfcf"/><rect x="306.5" y="194.3" width="6.6" height="2.2" fill="#e4e4e4"/>
<rect x="304.5" y="198.6" width="14" height="12" fill="#2e2e2e"/>
<text x="310.5" y="206.3" font-size="4.2" fill="#e8e8e8" text-anchor="middle" font-weight="bold">5V</text>
<rect x="306.5" y="210.6" width="0.8" height="2" fill="#999"/>
<rect x="311.3" y="210.6" width="0.8" height="2" fill="#999"/>
<rect x="316.1" y="210.6" width="0.8" height="2" fill="#999"/>
<line x1="316.5" y1="189.9" x2="316.5" y2="209.2" stroke="#9a9a9a" stroke-width="0.9"/>
<path d="M313.8,194.2q0,-1.6 2.7,-1.6q2.7,0 2.7,1.6l-0.5,2.6v5.0l0.5,2.6q0,1.6 -2.7,1.6q-2.7,0 -2.7,-1.6l0.5,-2.6v-5.0z" fill="#e2b96f"/>
<rect x="314.4" y="197.8" width="4.2" height="1.1" fill="#a4551f"/>
<rect x="314.4" y="200.0" width="4.2" height="1.6" fill="#33261a"/>
<rect x="314.4" y="202.6" width="4.2" height="1.1" fill="#93301c"/>
<rect x="46.0" y="336.7" width="33.5" height="9.8" fill="#363636"/>
<text x="62.8" y="343.0" font-size="3.75" fill="#d8d8d8" text-anchor="middle" font-weight="bold">74HC32</text>
<path d="M48.2,345.9l1.1,-1.6l1.1,1.6z" fill="#e8e8e8"/>
<path d="M46.0,340.4a1.2,1.2 0 0 1 0,2.4z" fill="#222"/>
<rect x="84.3" y="336.7" width="33.5" height="9.8" fill="#363636"/>
<text x="101.1" y="343.0" font-size="3.75" fill="#d8d8d8" text-anchor="middle" font-weight="bold">74HC32</text>
<path d="M86.5,345.9l1.1,-1.6l1.1,1.6z" fill="#e8e8e8"/>
<path d="M84.3,340.4a1.2,1.2 0 0 1 0,2.4z" fill="#222"/>
<rect x="122.6" y="336.7" width="33.5" height="9.8" fill="#363636"/>
<text x="139.3" y="343.0" font-size="3.75" fill="#d8d8d8" text-anchor="middle" font-weight="bold">74HC32</text>
<path d="M124.8,345.9l1.1,-1.6l1.1,1.6z" fill="#e8e8e8"/>
<path d="M122.6,340.4a1.2,1.2 0 0 1 0,2.4z" fill="#222"/>
<rect x="160.9" y="336.7" width="33.5" height="9.8" fill="#363636"/>
<text x="177.6" y="343.0" font-size="3.75" fill="#d8d8d8" text-anchor="middle" font-weight="bold">74HC32</text>
<path d="M163.1,345.9l1.1,-1.6l1.1,1.6z" fill="#e8e8e8"/>
<path d="M160.9,340.4a1.2,1.2 0 0 1 0,2.4z" fill="#222"/>
<rect x="199.2" y="336.7" width="33.5" height="9.8" fill="#363636"/>
<text x="215.9" y="343.0" font-size="3.75" fill="#d8d8d8" text-anchor="middle" font-weight="bold">74HC32</text>
<path d="M201.4,345.9l1.1,-1.6l1.1,1.6z" fill="#e8e8e8"/>
<path d="M199.2,340.4a1.2,1.2 0 0 1 0,2.4z" fill="#222"/>
<rect x="237.5" y="336.7" width="33.5" height="9.8" fill="#363636"/>
<text x="254.2" y="343.0" font-size="3.75" fill="#d8d8d8" text-anchor="middle" font-weight="bold">74HC32</text>
<path d="M239.7,345.9l1.1,-1.6l1.1,1.6z" fill="#e8e8e8"/>
<path d="M237.5,340.4a1.2,1.2 0 0 1 0,2.4z" fill="#222"/>
<rect x="290.1" y="336.7" width="33.5" height="9.8" fill="#363636"/>
<text x="306.9" y="343.0" font-size="3.75" fill="#d8d8d8" text-anchor="middle" font-weight="bold">74HC32</text>
<path d="M292.3,345.9l1.1,-1.6l1.1,1.6z" fill="#e8e8e8"/>
<path d="M290.1,340.4a1.2,1.2 0 0 1 0,2.4z" fill="#222"/>
<rect x="371.2" y="58.2" width="50.3" height="66" rx="2.5" fill="#333333"/>
<path d="M371.2,122.3h50.3v25.2q0,2 -2,2h-46.3q-2,0 -2,-2z" fill="#cf8c50"/>
<rect x="376" y="149.5" width="18.1" height="7.8" fill="#c4c4c4"/>
<rect x="399" y="149.5" width="14.6" height="3" fill="#c4c4c4"/><rect x="397.3" y="152.3" width="17.8" height="5.2" fill="#9b9b9b"/>
<rect x="373.2" y="157" width="45.3" height="5.8" rx="1" fill="#333"/>
<rect x="392.6" y="162.8" width="3" height="4.6" fill="#3a3a3a"/><rect x="397.1" y="162.6" width="3.2" height="5.4" fill="#d8262c"/>
<text transform="translate(396.3,96.2) rotate(180)" x="0" y="5.6" font-size="15.5" fill="#ececec" text-anchor="middle">9V</text>
<circle cx="384.9" cy="144.7" r="2.7" fill="none" stroke="#b5773f" stroke-width="0.6"/><rect x="383.4" y="144.2" width="3" height="1" fill="#b5773f"/>
<circle cx="406.5" cy="144.7" r="2.7" fill="none" stroke="#b5773f" stroke-width="0.6"/><rect x="405" y="144.2" width="3" height="1" fill="#a5672f"/><rect x="406" y="143.2" width="1" height="3" fill="#a5672f"/>
<rect x="372.4" y="224.1" width="33.5" height="9.8" fill="#363636"/>
<text x="389.2" y="230.4" font-size="3.75" fill="#d8d8d8" text-anchor="middle" font-weight="bold">74HC86</text>
<path d="M374.6,233.3l1.1,-1.6l1.1,1.6z" fill="#e8e8e8"/>
<path d="M372.4,227.8a1.2,1.2 0 0 1 0,2.4z" fill="#222"/>
<rect x="444.5" y="224.1" width="33.5" height="9.8" fill="#363636"/>
<text x="461.3" y="230.4" font-size="3.75" fill="#d8d8d8" text-anchor="middle" font-weight="bold">74HC86</text>
<path d="M446.7,233.3l1.1,-1.6l1.1,1.6z" fill="#e8e8e8"/>
<path d="M444.5,227.8a1.2,1.2 0 0 1 0,2.4z" fill="#222"/>
<rect x="478.0" y="224.1" width="33.5" height="9.8" fill="#363636"/>
<text x="494.8" y="230.4" font-size="3.75" fill="#d8d8d8" text-anchor="middle" font-weight="bold">74HC08</text>
<path d="M480.2,233.3l1.1,-1.6l1.1,1.6z" fill="#e8e8e8"/>
<path d="M478.0,227.8a1.2,1.2 0 0 1 0,2.4z" fill="#222"/>
<rect x="511.5" y="224.1" width="33.5" height="9.8" fill="#363636"/>
<text x="528.3" y="230.4" font-size="3.75" fill="#d8d8d8" text-anchor="middle" font-weight="bold">74HC86</text>
<path d="M513.7,233.3l1.1,-1.6l1.1,1.6z" fill="#e8e8e8"/>
<path d="M511.5,227.8a1.2,1.2 0 0 1 0,2.4z" fill="#222"/>
<rect x="545.0" y="224.1" width="33.5" height="9.8" fill="#363636"/>
<text x="561.8" y="230.4" font-size="3.75" fill="#d8d8d8" text-anchor="middle" font-weight="bold">74HC08</text>
<path d="M547.2,233.3l1.1,-1.6l1.1,1.6z" fill="#e8e8e8"/>
<path d="M545.0,227.8a1.2,1.2 0 0 1 0,2.4z" fill="#222"/>
<rect x="578.5" y="224.1" width="33.5" height="9.8" fill="#363636"/>
<text x="595.3" y="230.4" font-size="3.75" fill="#d8d8d8" text-anchor="middle" font-weight="bold">74HC86</text>
<path d="M580.7,233.3l1.1,-1.6l1.1,1.6z" fill="#e8e8e8"/>
<path d="M578.5,227.8a1.2,1.2 0 0 1 0,2.4z" fill="#222"/>
<rect x="612.0" y="224.1" width="33.5" height="9.8" fill="#363636"/>
<text x="628.8" y="230.4" font-size="3.75" fill="#d8d8d8" text-anchor="middle" font-weight="bold">74HC08</text>
<path d="M614.2,233.3l1.1,-1.6l1.1,1.6z" fill="#e8e8e8"/>
<path d="M612.0,227.8a1.2,1.2 0 0 1 0,2.4z" fill="#222"/>
<rect x="645.6" y="224.1" width="33.5" height="9.8" fill="#363636"/>
<text x="662.3" y="230.4" font-size="3.75" fill="#d8d8d8" text-anchor="middle" font-weight="bold">74HC86</text>
<path d="M647.8,233.3l1.1,-1.6l1.1,1.6z" fill="#e8e8e8"/>
<path d="M645.6,227.8a1.2,1.2 0 0 1 0,2.4z" fill="#222"/>
<rect x="373.0" y="332.0" width="33.5" height="9.8" fill="#363636"/>
<text x="389.8" y="338.3" font-size="3.75" fill="#d8d8d8" text-anchor="middle" font-weight="bold">74HC32</text>
<path d="M375.2,341.2l1.1,-1.6l1.1,1.6z" fill="#e8e8e8"/>
<path d="M373.0,335.7a1.2,1.2 0 0 1 0,2.4z" fill="#222"/>
<rect x="411.2" y="332.0" width="33.5" height="9.8" fill="#363636"/>
<text x="428.0" y="338.3" font-size="3.75" fill="#d8d8d8" text-anchor="middle" font-weight="bold">74HC08</text>
<path d="M413.4,341.2l1.1,-1.6l1.1,1.6z" fill="#e8e8e8"/>
<path d="M411.2,335.7a1.2,1.2 0 0 1 0,2.4z" fill="#222"/>
<rect x="444.7" y="332.0" width="33.5" height="9.8" fill="#363636"/>
<text x="461.5" y="338.3" font-size="3.75" fill="#d8d8d8" text-anchor="middle" font-weight="bold">74HC32</text>
<path d="M446.9,341.2l1.1,-1.6l1.1,1.6z" fill="#e8e8e8"/>
<path d="M444.7,335.7a1.2,1.2 0 0 1 0,2.4z" fill="#222"/>
<rect x="478.2" y="332.0" width="33.5" height="9.8" fill="#363636"/>
<text x="495.0" y="338.3" font-size="3.75" fill="#d8d8d8" text-anchor="middle" font-weight="bold">74HC08</text>
<path d="M480.4,341.2l1.1,-1.6l1.1,1.6z" fill="#e8e8e8"/>
<path d="M478.2,335.7a1.2,1.2 0 0 1 0,2.4z" fill="#222"/>
<rect x="511.7" y="332.0" width="33.5" height="9.8" fill="#363636"/>
<text x="528.5" y="338.3" font-size="3.75" fill="#d8d8d8" text-anchor="middle" font-weight="bold">74HC32</text>
<path d="M513.9,341.2l1.1,-1.6l1.1,1.6z" fill="#e8e8e8"/>
<path d="M511.7,335.7a1.2,1.2 0 0 1 0,2.4z" fill="#222"/>
<rect x="545.2" y="332.0" width="33.5" height="9.8" fill="#363636"/>
<text x="562.0" y="338.3" font-size="3.75" fill="#d8d8d8" text-anchor="middle" font-weight="bold">74HC08</text>
<path d="M547.4,341.2l1.1,-1.6l1.1,1.6z" fill="#e8e8e8"/>
<path d="M545.2,335.7a1.2,1.2 0 0 1 0,2.4z" fill="#222"/>
<rect x="578.7" y="332.0" width="33.5" height="9.8" fill="#363636"/>
<text x="595.5" y="338.3" font-size="3.75" fill="#d8d8d8" text-anchor="middle" font-weight="bold">74HC32</text>
<path d="M580.9,341.2l1.1,-1.6l1.1,1.6z" fill="#e8e8e8"/>
<path d="M578.7,335.7a1.2,1.2 0 0 1 0,2.4z" fill="#222"/>
<rect x="612.3" y="332.0" width="33.5" height="9.8" fill="#363636"/>
<text x="629.0" y="338.3" font-size="3.75" fill="#d8d8d8" text-anchor="middle" font-weight="bold">74HC08</text>
<path d="M614.5,341.2l1.1,-1.6l1.1,1.6z" fill="#e8e8e8"/>
<path d="M612.3,335.7a1.2,1.2 0 0 1 0,2.4z" fill="#222"/>
<rect x="655.1" y="326.5" width="24.2" height="35.9" fill="#3c4043"/>
<g fill="none" stroke="#a2a4a6" stroke-width="1.75" stroke-linecap="round"><path d="M664.4,333.2H674.6M662.2,344.7H672.4M660.1,355.8H670.2M662.8,334.7L661.3,343.2M675.8,334.7L674.2,343.2M660.7,346.2L659.1,354.4M673.6,346.2L672.0,354.4"/></g>
<circle cx="675.2" cy="355.7" r="1.2" fill="#d0d0d0"/>
<rect x="657.3" y="358" width="1" height="1" fill="#555"/>
<rect x="662.1" y="358" width="1" height="1" fill="#555"/>
<rect x="666.9" y="358" width="1" height="1" fill="#555"/>
<rect x="671.7" y="358" width="1" height="1" fill="#555"/>
<rect x="676.5" y="358" width="1" height="1" fill="#555"/>
</svg>
</body></html>
